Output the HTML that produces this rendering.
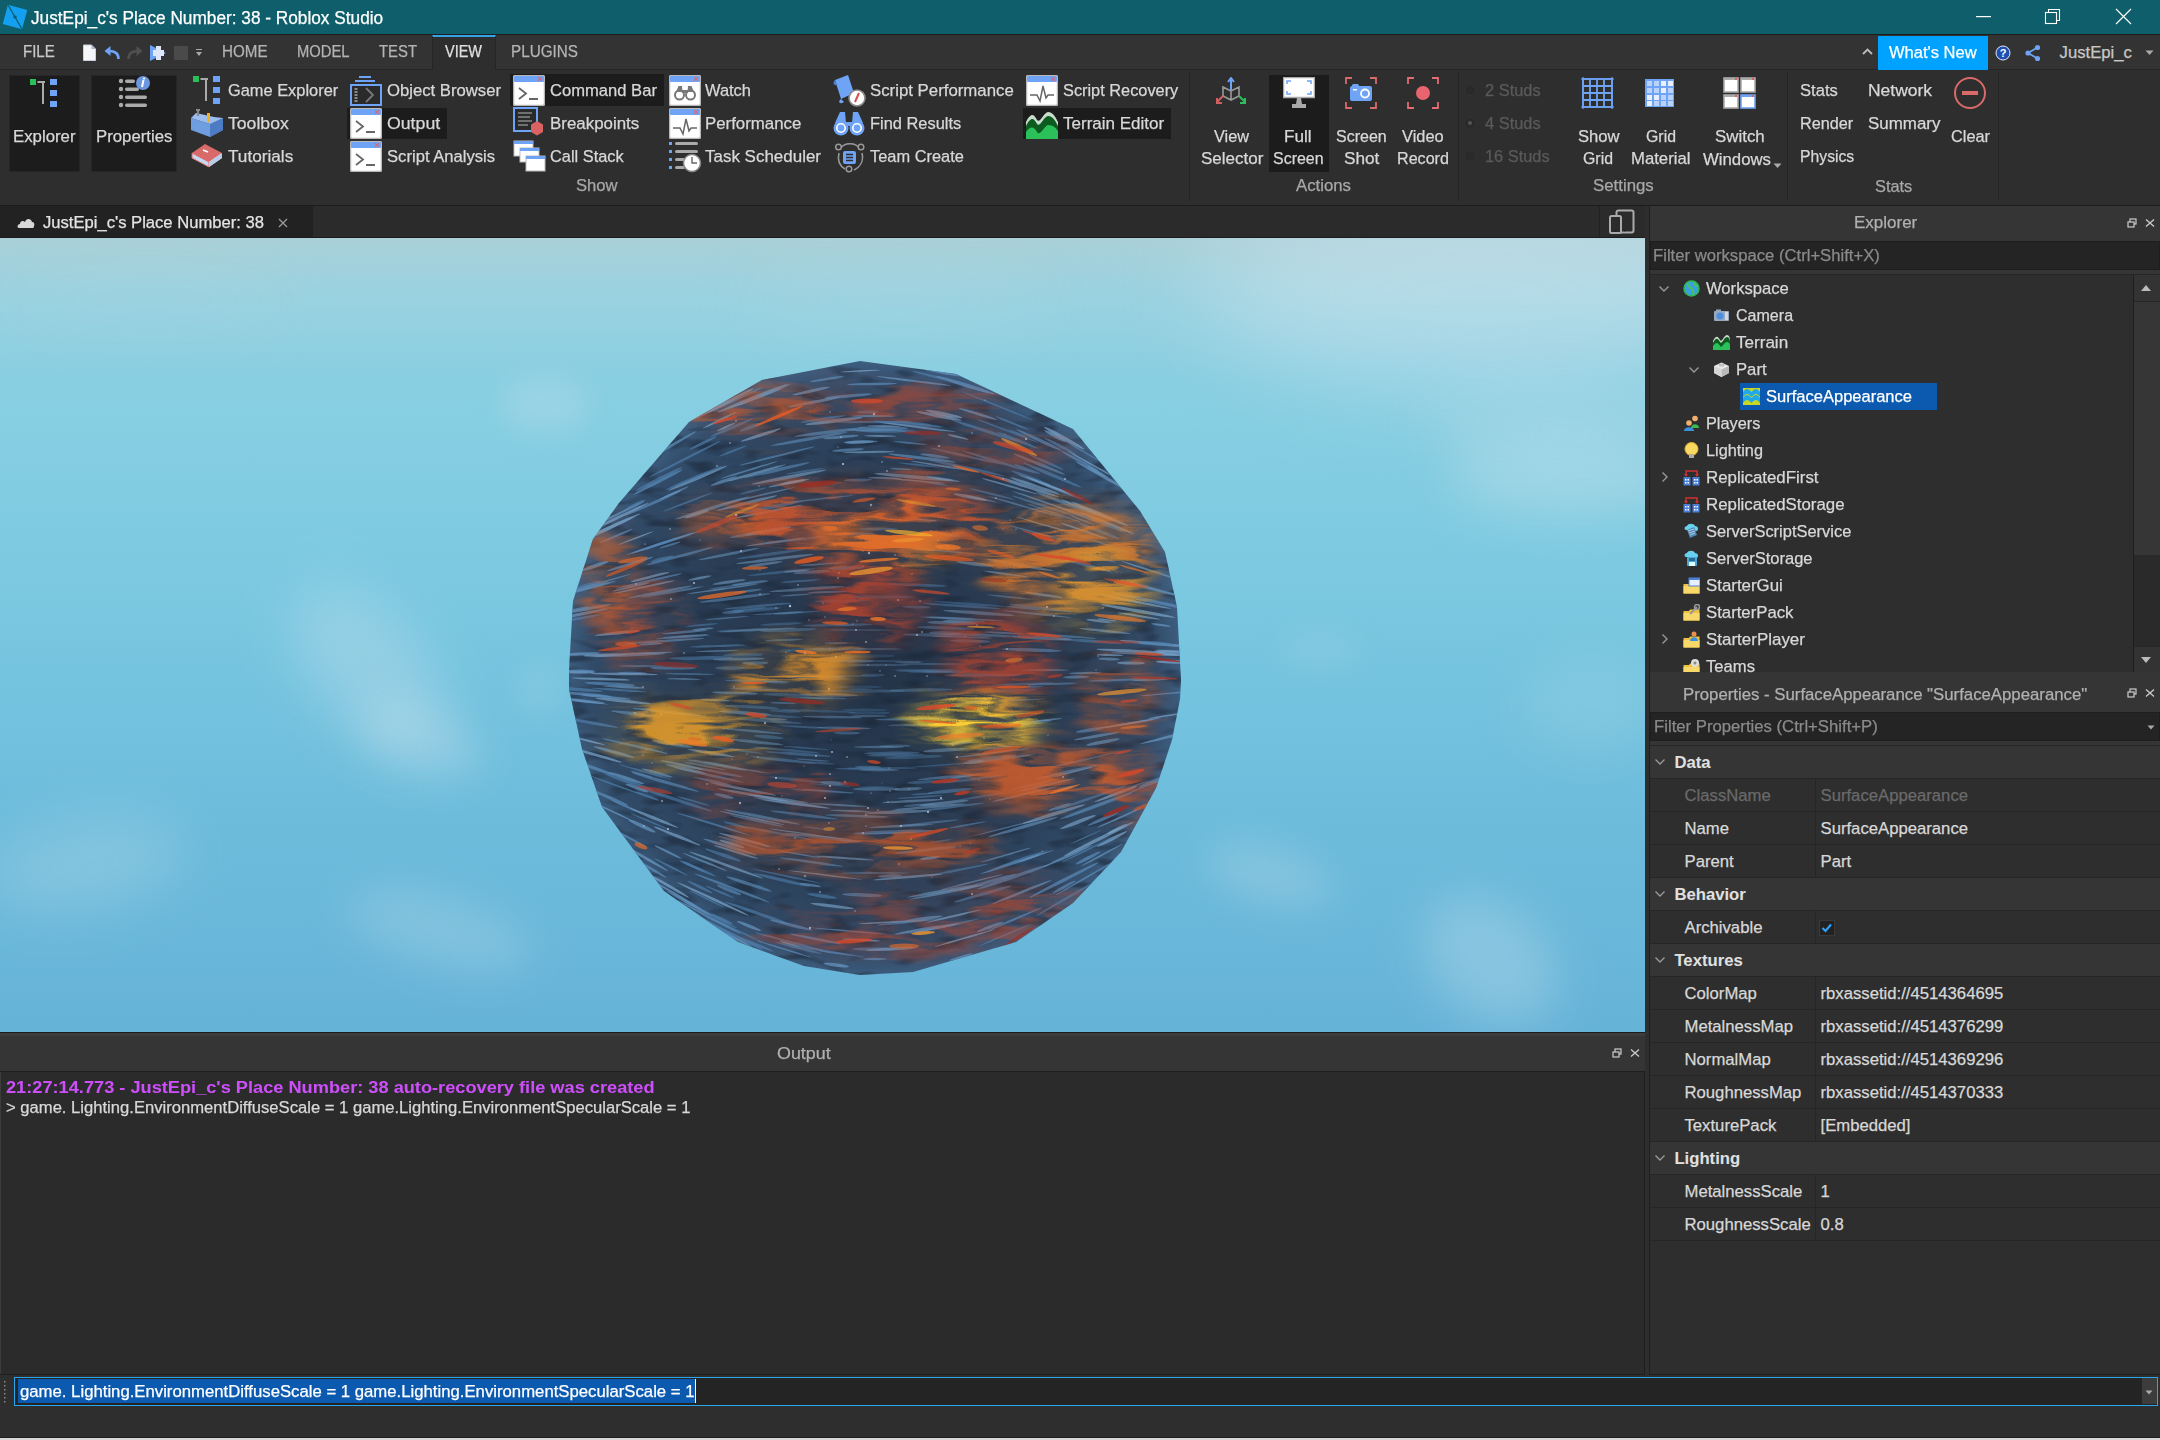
<!DOCTYPE html>
<html><head><meta charset="utf-8"><style>
html,body{margin:0;padding:0;width:2160px;height:1440px;overflow:hidden;background:#2e2e2e;}
.t{position:absolute;white-space:nowrap;font-family:"Liberation Sans",sans-serif;-webkit-text-stroke:0.25px currentColor;}
.r{position:absolute;}
</style></head><body>
<div class="r" style="left:0px;top:0px;width:2160px;height:34px;background:#0e5f6b;"></div><div class="r" style="left:0px;top:34px;width:2160px;height:1px;background:#1c1c1c;"></div><div class="r" style="left:0px;top:35px;width:2160px;height:34px;background:#333333;"></div><div class="r" style="left:0px;top:69px;width:2160px;height:1px;background:#262626;"></div><div class="r" style="left:432px;top:35px;width:64px;height:35px;background:#2e2e2e;border-top:2px solid #37a3e6;box-sizing:border-box;border-left:1px solid #262626;border-right:1px solid #262626;"></div><div class="r" style="left:0px;top:70px;width:2160px;height:135px;background:#2e2e2e;"></div><div class="r" style="left:0px;top:205px;width:2160px;height:1px;background:#1c1c1c;"></div><div class="r" style="left:0px;top:206px;width:1645px;height:32px;background:#2b2b2b;"></div><div class="r" style="left:0px;top:206px;width:313px;height:31px;background:#222222;"></div><div class="r" style="left:0px;top:237px;width:1645px;height:1px;background:#1c1c1c;"></div><div class="r" style="left:0px;top:238px;width:1645px;height:794px;background:linear-gradient(180deg, #aad0d8 0px, #9dd2df 45px, #89cfe2 140px, #7ecbe1 300px, #74c3df 450px, #6cbbdb 600px, #66b3d8 794px);"></div><div class="r" style="left:0;top:238px;width:1645px;height:794px;overflow:hidden"><div style="position:absolute;left:500.0px;top:137.0px;width:90px;height:60px;border-radius:50%;background:rgba(215,232,240,0.22);filter:blur(14px);transform:rotate(0deg)"></div><div style="position:absolute;left:270.0px;top:377.0px;width:200px;height:110px;border-radius:50%;background:rgba(215,232,240,0.3);filter:blur(26px);transform:rotate(50deg)"></div><div style="position:absolute;left:355.0px;top:467.0px;width:130px;height:70px;border-radius:50%;background:rgba(215,232,240,0.24);filter:blur(18px);transform:rotate(20deg)"></div><div style="position:absolute;left:-15.0px;top:582.0px;width:200px;height:90px;border-radius:50%;background:rgba(215,232,240,0.22);filter:blur(26px);transform:rotate(-10deg)"></div><div style="position:absolute;left:345.0px;top:657.0px;width:190px;height:70px;border-radius:50%;background:rgba(215,232,240,0.22);filter:blur(20px);transform:rotate(15deg)"></div><div style="position:absolute;left:515.0px;top:422.0px;width:50px;height:60px;border-radius:50%;background:rgba(215,232,240,0.12);filter:blur(14px);transform:rotate(0deg)"></div><div style="position:absolute;left:1200.0px;top:-43.0px;width:560px;height:190px;border-radius:50%;background:rgba(215,232,240,0.42);filter:blur(45px);transform:rotate(0deg)"></div><div style="position:absolute;left:1430.0px;top:147.0px;width:260px;height:90px;border-radius:50%;background:rgba(215,232,240,0.22);filter:blur(30px);transform:rotate(0deg)"></div><div style="position:absolute;left:1450.0px;top:202.0px;width:240px;height:80px;border-radius:50%;background:rgba(215,232,240,0.28);filter:blur(25px);transform:rotate(0deg)"></div><div style="position:absolute;left:1520.0px;top:417.0px;width:140px;height:100px;border-radius:50%;background:rgba(215,232,240,0.14);filter:blur(25px);transform:rotate(0deg)"></div><div style="position:absolute;left:1205.0px;top:609.5px;width:130px;height:55px;border-radius:50%;background:rgba(215,232,240,0.24);filter:blur(18px);transform:rotate(15deg)"></div><div style="position:absolute;left:1415.0px;top:667.0px;width:150px;height:110px;border-radius:50%;background:rgba(215,232,240,0.28);filter:blur(22px);transform:rotate(40deg)"></div><div style="position:absolute;left:1280.0px;top:392.0px;width:80px;height:40px;border-radius:50%;background:rgba(215,232,240,0.12);filter:blur(14px);transform:rotate(0deg)"></div><div style="position:absolute;left:740.0px;top:32.0px;width:320px;height:60px;border-radius:50%;background:rgba(215,232,240,0.1);filter:blur(30px);transform:rotate(0deg)"></div><div style="position:absolute;left:0.0px;top:32.0px;width:300px;height:60px;border-radius:50%;background:rgba(215,232,240,0.06);filter:blur(30px);transform:rotate(0deg)"></div></div><svg class="r" style="left:560px;top:350px;" width="640" height="640" viewBox="0 0 640 640"><defs>
<clipPath id="sc"><polygon points="300,11 396,24 513,79 580,161 605,202 617,257 621,330 620,349 612,390 596,438 561,502 513,553 456,592 353,622 300,625 244,616 178,592 104,541 42,457 22,399 9,339 9,320 13,251 33,189 59,153 129,72 202,30"/></clipPath>
<radialGradient id="sg" cx="0.49" cy="0.5" r="0.5">
<stop offset="0" stop-color="#243449"/><stop offset="0.6" stop-color="#2a3e56"/><stop offset="0.88" stop-color="#314b68"/><stop offset="1" stop-color="#43668a"/></radialGradient>
<filter color-interpolation-filters="sRGB" id="dark" x="0" y="0" width="100%" height="100%">
<feTurbulence type="fractalNoise" baseFrequency="0.03 0.09" numOctaves="2" seed="5"/>
<feColorMatrix type="matrix" values="0 0 0 0 0.10  0 0 0 0 0.14  0 0 0 0 0.2  4 0 0 0 -2.0"/>
</filter>
<filter color-interpolation-filters="sRGB" id="wtex" x="-20%" y="-20%" width="140%" height="140%">
<feGaussianBlur in="SourceGraphic" stdDeviation="10" result="b"/>
<feTurbulence type="fractalNoise" baseFrequency="0.012 0.07" numOctaves="3" seed="3" result="n"/>
<feColorMatrix in="n" type="matrix" values="0 0 0 0 0  0 0 0 0 0  0 0 0 0 0  4 0 0 0 -1.5" result="na"/>
<feComposite in="b" in2="na" operator="in" result="w"/>
<feDisplacementMap in="w" in2="n" scale="36" xChannelSelector="R" yChannelSelector="G"/>
</filter>
<filter color-interpolation-filters="sRGB" id="wblur" x="-30%" y="-30%" width="160%" height="160%"><feGaussianBlur stdDeviation="14"/></filter>
</defs>
<g clip-path="url(#sc)">
<rect x="0" y="0" width="640" height="640" fill="url(#sg)"/>
<rect x="0" y="0" width="640" height="640" filter="url(#dark)" opacity="0.5"/>
<ellipse cx="401" cy="26" rx="18" ry="0.9" fill="#5d8fbd" opacity="0.70" transform="rotate(17 401 26)"/><ellipse cx="267" cy="29" rx="17" ry="1.3" fill="#5d8fbd" opacity="0.68" transform="rotate(-9 267 29)"/><ellipse cx="353" cy="451" rx="31" ry="1.2" fill="#7eaad0" opacity="0.45" transform="rotate(-3 353 451)"/><ellipse cx="370" cy="508" rx="10" ry="1.6" fill="#7eaad0" opacity="0.54" transform="rotate(-7 370 508)"/><ellipse cx="217" cy="106" rx="39" ry="1.1" fill="#5d8fbd" opacity="0.59" transform="rotate(-14 217 106)"/><ellipse cx="241" cy="231" rx="20" ry="1.0" fill="#5d8fbd" opacity="0.42" transform="rotate(-4 241 231)"/><ellipse cx="456" cy="340" rx="21" ry="1.3" fill="#4f80ad" opacity="0.46" transform="rotate(-2 456 340)"/><ellipse cx="362" cy="444" rx="11" ry="1.0" fill="#4f80ad" opacity="0.45" transform="rotate(-4 362 444)"/><ellipse cx="520" cy="111" rx="21" ry="1.4" fill="#5d8fbd" opacity="0.68" transform="rotate(28 520 111)"/><ellipse cx="382" cy="116" rx="32" ry="0.9" fill="#7eaad0" opacity="0.56" transform="rotate(9 382 116)"/><ellipse cx="174" cy="579" rx="31" ry="0.9" fill="#4f80ad" opacity="0.69" transform="rotate(25 174 579)"/><ellipse cx="526" cy="487" rx="17" ry="0.7" fill="#4f80ad" opacity="0.65" transform="rotate(-24 526 487)"/><ellipse cx="254" cy="52" rx="27" ry="1.5" fill="#6a9bc6" opacity="0.65" transform="rotate(-11 254 52)"/><ellipse cx="410" cy="254" rx="37" ry="1.2" fill="#4f80ad" opacity="0.42" transform="rotate(4 410 254)"/><ellipse cx="94" cy="468" rx="26" ry="1.5" fill="#7eaad0" opacity="0.64" transform="rotate(22 94 468)"/><ellipse cx="75" cy="396" rx="34" ry="1.2" fill="#5d8fbd" opacity="0.62" transform="rotate(13 75 396)"/><ellipse cx="244" cy="377" rx="24" ry="1.0" fill="#5d8fbd" opacity="0.38" transform="rotate(3 244 377)"/><ellipse cx="426" cy="81" rx="37" ry="1.5" fill="#4f80ad" opacity="0.63" transform="rotate(18 426 81)"/><ellipse cx="170" cy="318" rx="15" ry="1.7" fill="#4f80ad" opacity="0.46" transform="rotate(0 170 318)"/><ellipse cx="525" cy="323" rx="16" ry="1.1" fill="#6a9bc6" opacity="0.56" transform="rotate(-1 525 323)"/><ellipse cx="197" cy="47" rx="36" ry="1.7" fill="#5d8fbd" opacity="0.68" transform="rotate(-21 197 47)"/><ellipse cx="457" cy="512" rx="39" ry="1.3" fill="#6a9bc6" opacity="0.60" transform="rotate(-18 457 512)"/><ellipse cx="87" cy="303" rx="26" ry="1.0" fill="#7eaad0" opacity="0.59" transform="rotate(-2 87 303)"/><ellipse cx="472" cy="435" rx="22" ry="1.4" fill="#4f80ad" opacity="0.54" transform="rotate(-12 472 435)"/><ellipse cx="277" cy="329" rx="14" ry="0.9" fill="#4f80ad" opacity="0.31" transform="rotate(0 277 329)"/><ellipse cx="21" cy="351" rx="28" ry="0.7" fill="#5d8fbd" opacity="0.68" transform="rotate(7 21 351)"/><ellipse cx="149" cy="567" rx="36" ry="0.8" fill="#6a9bc6" opacity="0.69" transform="rotate(28 149 567)"/><ellipse cx="179" cy="309" rx="26" ry="1.5" fill="#7eaad0" opacity="0.45" transform="rotate(-1 179 309)"/><ellipse cx="157" cy="301" rx="22" ry="0.8" fill="#7eaad0" opacity="0.48" transform="rotate(-2 157 301)"/><ellipse cx="226" cy="263" rx="36" ry="0.8" fill="#5d8fbd" opacity="0.40" transform="rotate(-3 226 263)"/><ellipse cx="45" cy="458" rx="34" ry="0.8" fill="#6a9bc6" opacity="0.70" transform="rotate(25 45 458)"/><ellipse cx="125" cy="286" rx="23" ry="1.0" fill="#6a9bc6" opacity="0.53" transform="rotate(-4 125 286)"/><ellipse cx="504" cy="537" rx="13" ry="1.4" fill="#5d8fbd" opacity="0.67" transform="rotate(-28 504 537)"/><ellipse cx="529" cy="113" rx="25" ry="0.9" fill="#7eaad0" opacity="0.68" transform="rotate(29 529 113)"/><ellipse cx="183" cy="439" rx="34" ry="1.4" fill="#7eaad0" opacity="0.51" transform="rotate(11 183 439)"/><ellipse cx="103" cy="193" rx="39" ry="1.3" fill="#5d8fbd" opacity="0.61" transform="rotate(-18 103 193)"/><ellipse cx="367" cy="320" rx="36" ry="0.9" fill="#5d8fbd" opacity="0.33" transform="rotate(-0 367 320)"/><ellipse cx="256" cy="589" rx="27" ry="1.3" fill="#5d8fbd" opacity="0.66" transform="rotate(11 256 589)"/><ellipse cx="388" cy="268" rx="28" ry="1.3" fill="#4f80ad" opacity="0.38" transform="rotate(2 388 268)"/><ellipse cx="133" cy="451" rx="17" ry="1.1" fill="#4f80ad" opacity="0.58" transform="rotate(16 133 451)"/><ellipse cx="289" cy="581" rx="38" ry="0.7" fill="#5d8fbd" opacity="0.64" transform="rotate(5 289 581)"/><ellipse cx="171" cy="584" rx="36" ry="1.7" fill="#4f80ad" opacity="0.69" transform="rotate(26 171 584)"/><ellipse cx="183" cy="280" rx="26" ry="1.0" fill="#5d8fbd" opacity="0.45" transform="rotate(-3 183 280)"/><ellipse cx="418" cy="352" rx="13" ry="1.7" fill="#4f80ad" opacity="0.41" transform="rotate(-2 418 352)"/><ellipse cx="449" cy="136" rx="29" ry="1.0" fill="#7eaad0" opacity="0.58" transform="rotate(16 449 136)"/><ellipse cx="162" cy="569" rx="12" ry="1.4" fill="#4f80ad" opacity="0.68" transform="rotate(26 162 569)"/><ellipse cx="35" cy="216" rx="14" ry="1.8" fill="#6a9bc6" opacity="0.69" transform="rotate(-19 35 216)"/><ellipse cx="463" cy="350" rx="23" ry="0.7" fill="#5d8fbd" opacity="0.47" transform="rotate(-3 463 350)"/><ellipse cx="30" cy="238" rx="27" ry="1.2" fill="#5d8fbd" opacity="0.68" transform="rotate(-15 30 238)"/><ellipse cx="197" cy="563" rx="34" ry="1.6" fill="#4f80ad" opacity="0.65" transform="rotate(19 197 563)"/><ellipse cx="137" cy="164" rx="13" ry="1.6" fill="#7eaad0" opacity="0.59" transform="rotate(-18 137 164)"/><ellipse cx="108" cy="502" rx="15" ry="1.2" fill="#6a9bc6" opacity="0.66" transform="rotate(26 108 502)"/><ellipse cx="460" cy="215" rx="34" ry="1.7" fill="#6a9bc6" opacity="0.51" transform="rotate(10 460 215)"/><ellipse cx="172" cy="494" rx="13" ry="1.7" fill="#7eaad0" opacity="0.58" transform="rotate(17 172 494)"/><ellipse cx="145" cy="512" rx="24" ry="1.0" fill="#6a9bc6" opacity="0.63" transform="rotate(22 145 512)"/><ellipse cx="145" cy="416" rx="22" ry="1.0" fill="#5d8fbd" opacity="0.54" transform="rotate(11 145 416)"/><ellipse cx="402" cy="256" rx="39" ry="1.3" fill="#5d8fbd" opacity="0.41" transform="rotate(4 402 256)"/><ellipse cx="171" cy="78" rx="23" ry="1.5" fill="#4f80ad" opacity="0.66" transform="rotate(-23 171 78)"/><ellipse cx="276" cy="615" rx="13" ry="1.7" fill="#6a9bc6" opacity="0.69" transform="rotate(8 276 615)"/><ellipse cx="164" cy="446" rx="10" ry="1.7" fill="#6a9bc6" opacity="0.54" transform="rotate(13 164 446)"/><ellipse cx="211" cy="204" rx="35" ry="1.5" fill="#4f80ad" opacity="0.48" transform="rotate(-8 211 204)"/><ellipse cx="319" cy="420" rx="20" ry="1.5" fill="#6a9bc6" opacity="0.40" transform="rotate(-0 319 420)"/><ellipse cx="126" cy="419" rx="21" ry="1.5" fill="#6a9bc6" opacity="0.56" transform="rotate(13 126 419)"/><ellipse cx="272" cy="367" rx="30" ry="1.2" fill="#7eaad0" opacity="0.35" transform="rotate(1 272 367)"/><ellipse cx="423" cy="325" rx="39" ry="1.5" fill="#5d8fbd" opacity="0.41" transform="rotate(-0 423 325)"/><ellipse cx="182" cy="419" rx="29" ry="0.8" fill="#6a9bc6" opacity="0.49" transform="rotate(9 182 419)"/><ellipse cx="421" cy="149" rx="16" ry="0.7" fill="#6a9bc6" opacity="0.54" transform="rotate(12 421 149)"/><ellipse cx="612" cy="386" rx="33" ry="1.2" fill="#6a9bc6" opacity="0.70" transform="rotate(-14 612 386)"/><ellipse cx="449" cy="247" rx="22" ry="0.9" fill="#5d8fbd" opacity="0.47" transform="rotate(6 449 247)"/><ellipse cx="552" cy="489" rx="17" ry="1.6" fill="#7eaad0" opacity="0.68" transform="rotate(-27 552 489)"/><ellipse cx="529" cy="291" rx="34" ry="1.4" fill="#4f80ad" opacity="0.57" transform="rotate(4 529 291)"/><ellipse cx="384" cy="453" rx="25" ry="1.6" fill="#7eaad0" opacity="0.47" transform="rotate(-6 384 453)"/><ellipse cx="559" cy="468" rx="24" ry="1.0" fill="#6a9bc6" opacity="0.67" transform="rotate(-24 559 468)"/><ellipse cx="524" cy="181" rx="25" ry="1.0" fill="#7eaad0" opacity="0.62" transform="rotate(19 524 181)"/><ellipse cx="56" cy="186" rx="18" ry="1.1" fill="#5d8fbd" opacity="0.68" transform="rotate(-23 56 186)"/><ellipse cx="93" cy="153" rx="31" ry="1.5" fill="#5d8fbd" opacity="0.66" transform="rotate(-24 93 153)"/><ellipse cx="263" cy="214" rx="24" ry="0.8" fill="#7eaad0" opacity="0.42" transform="rotate(-4 263 214)"/><ellipse cx="247" cy="484" rx="38" ry="0.7" fill="#7eaad0" opacity="0.51" transform="rotate(8 247 484)"/><ellipse cx="301" cy="590" rx="19" ry="1.1" fill="#7eaad0" opacity="0.65" transform="rotate(3 301 590)"/><ellipse cx="338" cy="462" rx="34" ry="1.7" fill="#7eaad0" opacity="0.46" transform="rotate(-2 338 462)"/><ellipse cx="143" cy="279" rx="11" ry="1.1" fill="#7eaad0" opacity="0.51" transform="rotate(-5 143 279)"/><ellipse cx="453" cy="527" rx="38" ry="1.8" fill="#5d8fbd" opacity="0.62" transform="rotate(-19 453 527)"/><ellipse cx="565" cy="374" rx="30" ry="0.8" fill="#7eaad0" opacity="0.63" transform="rotate(-9 565 374)"/><ellipse cx="91" cy="294" rx="12" ry="1.1" fill="#6a9bc6" opacity="0.58" transform="rotate(-4 91 294)"/><ellipse cx="287" cy="218" rx="18" ry="1.7" fill="#7eaad0" opacity="0.40" transform="rotate(-2 287 218)"/><ellipse cx="223" cy="410" rx="33" ry="1.4" fill="#5d8fbd" opacity="0.44" transform="rotate(6 223 410)"/><ellipse cx="85" cy="422" rx="27" ry="0.9" fill="#4f80ad" opacity="0.62" transform="rotate(16 85 422)"/><ellipse cx="479" cy="114" rx="28" ry="1.5" fill="#5d8fbd" opacity="0.63" transform="rotate(22 479 114)"/><ellipse cx="486" cy="112" rx="19" ry="1.3" fill="#4f80ad" opacity="0.64" transform="rotate(24 486 112)"/><ellipse cx="362" cy="569" rx="21" ry="1.7" fill="#6a9bc6" opacity="0.62" transform="rotate(-8 362 569)"/><ellipse cx="55" cy="435" rx="29" ry="0.8" fill="#4f80ad" opacity="0.67" transform="rotate(20 55 435)"/><ellipse cx="530" cy="380" rx="14" ry="1.8" fill="#5d8fbd" opacity="0.58" transform="rotate(-9 530 380)"/><ellipse cx="221" cy="274" rx="21" ry="1.3" fill="#4f80ad" opacity="0.40" transform="rotate(-3 221 274)"/><ellipse cx="16" cy="269" rx="25" ry="1.2" fill="#4f80ad" opacity="0.69" transform="rotate(-10 16 269)"/><ellipse cx="398" cy="520" rx="31" ry="1.2" fill="#4f80ad" opacity="0.57" transform="rotate(-11 398 520)"/><ellipse cx="386" cy="576" rx="33" ry="1.2" fill="#4f80ad" opacity="0.64" transform="rotate(-12 386 576)"/><ellipse cx="206" cy="162" rx="38" ry="1.0" fill="#7eaad0" opacity="0.53" transform="rotate(-11 206 162)"/><ellipse cx="158" cy="296" rx="28" ry="1.1" fill="#5d8fbd" opacity="0.48" transform="rotate(-2 158 296)"/><ellipse cx="325" cy="128" rx="17" ry="1.1" fill="#6a9bc6" opacity="0.53" transform="rotate(1 325 128)"/><ellipse cx="432" cy="408" rx="25" ry="1.6" fill="#5d8fbd" opacity="0.47" transform="rotate(-7 432 408)"/><ellipse cx="189" cy="259" rx="17" ry="1.4" fill="#4f80ad" opacity="0.45" transform="rotate(-5 189 259)"/><ellipse cx="299" cy="337" rx="23" ry="1.5" fill="#4f80ad" opacity="0.29" transform="rotate(0 299 337)"/><ellipse cx="224" cy="290" rx="19" ry="1.0" fill="#6a9bc6" opacity="0.39" transform="rotate(-2 224 290)"/><ellipse cx="202" cy="467" rx="39" ry="1.5" fill="#6a9bc6" opacity="0.52" transform="rotate(11 202 467)"/><ellipse cx="141" cy="308" rx="32" ry="1.8" fill="#4f80ad" opacity="0.51" transform="rotate(-1 141 308)"/><ellipse cx="190" cy="233" rx="19" ry="1.5" fill="#6a9bc6" opacity="0.47" transform="rotate(-7 190 233)"/><ellipse cx="348" cy="439" rx="14" ry="1.7" fill="#7eaad0" opacity="0.43" transform="rotate(-3 348 439)"/><ellipse cx="183" cy="305" rx="20" ry="1.8" fill="#4f80ad" opacity="0.45" transform="rotate(-1 183 305)"/><ellipse cx="586" cy="304" rx="35" ry="1.1" fill="#5d8fbd" opacity="0.65" transform="rotate(2 586 304)"/><ellipse cx="362" cy="432" rx="15" ry="1.6" fill="#4f80ad" opacity="0.43" transform="rotate(-4 362 432)"/><ellipse cx="60" cy="163" rx="27" ry="1.2" fill="#6a9bc6" opacity="0.69" transform="rotate(-26 60 163)"/><ellipse cx="484" cy="245" rx="19" ry="1.3" fill="#7eaad0" opacity="0.52" transform="rotate(8 484 245)"/><ellipse cx="196" cy="392" rx="28" ry="1.5" fill="#6a9bc6" opacity="0.46" transform="rotate(6 196 392)"/><ellipse cx="155" cy="350" rx="15" ry="1.1" fill="#7eaad0" opacity="0.49" transform="rotate(3 155 350)"/><ellipse cx="187" cy="153" rx="31" ry="1.5" fill="#7eaad0" opacity="0.56" transform="rotate(-14 187 153)"/><ellipse cx="170" cy="497" rx="28" ry="1.6" fill="#6a9bc6" opacity="0.59" transform="rotate(17 170 497)"/><ellipse cx="269" cy="345" rx="29" ry="1.7" fill="#6a9bc6" opacity="0.33" transform="rotate(1 269 345)"/><ellipse cx="197" cy="471" rx="27" ry="1.0" fill="#5d8fbd" opacity="0.53" transform="rotate(12 197 471)"/><ellipse cx="175" cy="343" rx="23" ry="1.4" fill="#7eaad0" opacity="0.46" transform="rotate(2 175 343)"/><ellipse cx="149" cy="425" rx="36" ry="1.3" fill="#5d8fbd" opacity="0.54" transform="rotate(12 149 425)"/><ellipse cx="472" cy="300" rx="30" ry="1.7" fill="#6a9bc6" opacity="0.48" transform="rotate(2 472 300)"/><ellipse cx="254" cy="478" rx="11" ry="0.8" fill="#4f80ad" opacity="0.50" transform="rotate(7 254 478)"/><ellipse cx="256" cy="327" rx="30" ry="1.3" fill="#7eaad0" opacity="0.34" transform="rotate(0 256 327)"/><ellipse cx="41" cy="329" rx="29" ry="1.2" fill="#7eaad0" opacity="0.65" transform="rotate(2 41 329)"/><ellipse cx="475" cy="136" rx="26" ry="1.7" fill="#7eaad0" opacity="0.60" transform="rotate(19 475 136)"/><ellipse cx="549" cy="309" rx="11" ry="1.4" fill="#6a9bc6" opacity="0.59" transform="rotate(1 549 309)"/><ellipse cx="259" cy="149" rx="35" ry="0.8" fill="#5d8fbd" opacity="0.51" transform="rotate(-6 259 149)"/><ellipse cx="406" cy="106" rx="38" ry="1.0" fill="#4f80ad" opacity="0.59" transform="rotate(13 406 106)"/><ellipse cx="288" cy="100" rx="16" ry="1.4" fill="#6a9bc6" opacity="0.57" transform="rotate(-4 288 100)"/><ellipse cx="539" cy="181" rx="22" ry="1.7" fill="#4f80ad" opacity="0.63" transform="rotate(21 539 181)"/><ellipse cx="309" cy="102" rx="26" ry="1.1" fill="#7eaad0" opacity="0.57" transform="rotate(-1 309 102)"/><ellipse cx="465" cy="444" rx="34" ry="1.1" fill="#6a9bc6" opacity="0.54" transform="rotate(-13 465 444)"/><ellipse cx="312" cy="34" rx="25" ry="1.3" fill="#5d8fbd" opacity="0.67" transform="rotate(-1 312 34)"/><ellipse cx="545" cy="281" rx="26" ry="1.2" fill="#6a9bc6" opacity="0.59" transform="rotate(6 545 281)"/><ellipse cx="260" cy="413" rx="15" ry="1.2" fill="#4f80ad" opacity="0.41" transform="rotate(4 260 413)"/><ellipse cx="449" cy="477" rx="36" ry="0.7" fill="#5d8fbd" opacity="0.56" transform="rotate(-14 449 477)"/><ellipse cx="152" cy="431" rx="19" ry="1.0" fill="#5d8fbd" opacity="0.54" transform="rotate(12 152 431)"/><ellipse cx="274" cy="71" rx="29" ry="1.7" fill="#7eaad0" opacity="0.62" transform="rotate(-7 274 71)"/><ellipse cx="110" cy="195" rx="11" ry="1.1" fill="#5d8fbd" opacity="0.60" transform="rotate(-17 110 195)"/><ellipse cx="188" cy="241" rx="14" ry="1.3" fill="#6a9bc6" opacity="0.47" transform="rotate(-7 188 241)"/><ellipse cx="543" cy="392" rx="17" ry="1.7" fill="#6a9bc6" opacity="0.60" transform="rotate(-11 543 392)"/><ellipse cx="151" cy="403" rx="24" ry="1.4" fill="#7eaad0" opacity="0.52" transform="rotate(9 151 403)"/><ellipse cx="400" cy="272" rx="18" ry="1.6" fill="#6a9bc6" opacity="0.39" transform="rotate(3 400 272)"/><ellipse cx="539" cy="489" rx="39" ry="1.7" fill="#7eaad0" opacity="0.66" transform="rotate(-26 539 489)"/><ellipse cx="484" cy="152" rx="34" ry="0.9" fill="#6a9bc6" opacity="0.60" transform="rotate(19 484 152)"/><ellipse cx="389" cy="427" rx="32" ry="1.4" fill="#6a9bc6" opacity="0.44" transform="rotate(-5 389 427)"/><ellipse cx="394" cy="566" rx="29" ry="1.0" fill="#7eaad0" opacity="0.63" transform="rotate(-13 394 566)"/><ellipse cx="28" cy="235" rx="14" ry="1.7" fill="#4f80ad" opacity="0.69" transform="rotate(-16 28 235)"/><ellipse cx="467" cy="119" rx="14" ry="1.3" fill="#4f80ad" opacity="0.62" transform="rotate(20 467 119)"/><ellipse cx="334" cy="572" rx="35" ry="1.0" fill="#7eaad0" opacity="0.62" transform="rotate(-3 334 572)"/><ellipse cx="542" cy="505" rx="24" ry="0.8" fill="#6a9bc6" opacity="0.68" transform="rotate(-28 542 505)"/><ellipse cx="536" cy="456" rx="39" ry="1.8" fill="#4f80ad" opacity="0.63" transform="rotate(-20 536 456)"/><ellipse cx="84" cy="237" rx="32" ry="1.0" fill="#7eaad0" opacity="0.61" transform="rotate(-12 84 237)"/><ellipse cx="75" cy="155" rx="11" ry="1.7" fill="#4f80ad" opacity="0.68" transform="rotate(-26 75 155)"/><ellipse cx="195" cy="313" rx="13" ry="1.7" fill="#6a9bc6" opacity="0.43" transform="rotate(-0 195 313)"/><ellipse cx="247" cy="239" rx="38" ry="1.5" fill="#7eaad0" opacity="0.40" transform="rotate(-4 247 239)"/><ellipse cx="369" cy="457" rx="37" ry="1.4" fill="#7eaad0" opacity="0.47" transform="rotate(-5 369 457)"/><ellipse cx="432" cy="144" rx="23" ry="1.0" fill="#4f80ad" opacity="0.56" transform="rotate(14 432 144)"/><ellipse cx="69" cy="432" rx="26" ry="1.8" fill="#4f80ad" opacity="0.65" transform="rotate(19 69 432)"/><ellipse cx="45" cy="180" rx="39" ry="1.7" fill="#7eaad0" opacity="0.69" transform="rotate(-25 45 180)"/><ellipse cx="401" cy="607" rx="12" ry="1.1" fill="#6a9bc6" opacity="0.69" transform="rotate(-17 401 607)"/><ellipse cx="491" cy="137" rx="35" ry="1.3" fill="#6a9bc6" opacity="0.62" transform="rotate(21 491 137)"/><ellipse cx="507" cy="154" rx="33" ry="1.6" fill="#5d8fbd" opacity="0.62" transform="rotate(21 507 154)"/><ellipse cx="614" cy="343" rx="34" ry="0.8" fill="#5d8fbd" opacity="0.69" transform="rotate(-5 614 343)"/><ellipse cx="89" cy="231" rx="34" ry="1.3" fill="#5d8fbd" opacity="0.61" transform="rotate(-13 89 231)"/><ellipse cx="463" cy="334" rx="32" ry="1.2" fill="#4f80ad" opacity="0.47" transform="rotate(-2 463 334)"/><ellipse cx="323" cy="78" rx="25" ry="1.7" fill="#5d8fbd" opacity="0.60" transform="rotate(1 323 78)"/><ellipse cx="455" cy="569" rx="30" ry="1.0" fill="#5d8fbd" opacity="0.67" transform="rotate(-23 455 569)"/><ellipse cx="45" cy="305" rx="22" ry="1.5" fill="#7eaad0" opacity="0.65" transform="rotate(-2 45 305)"/><ellipse cx="445" cy="283" rx="20" ry="0.9" fill="#6a9bc6" opacity="0.45" transform="rotate(3 445 283)"/><ellipse cx="177" cy="400" rx="26" ry="1.1" fill="#4f80ad" opacity="0.49" transform="rotate(8 177 400)"/><ellipse cx="287" cy="383" rx="13" ry="1.5" fill="#6a9bc6" opacity="0.35" transform="rotate(1 287 383)"/><ellipse cx="272" cy="556" rx="22" ry="1.6" fill="#7eaad0" opacity="0.60" transform="rotate(7 272 556)"/><ellipse cx="263" cy="69" rx="23" ry="1.4" fill="#4f80ad" opacity="0.62" transform="rotate(-9 263 69)"/><ellipse cx="594" cy="433" rx="24" ry="0.8" fill="#5d8fbd" opacity="0.69" transform="rotate(-21 594 433)"/><ellipse cx="462" cy="509" rx="27" ry="1.3" fill="#4f80ad" opacity="0.60" transform="rotate(-19 462 509)"/><ellipse cx="419" cy="263" rx="36" ry="1.7" fill="#7eaad0" opacity="0.42" transform="rotate(4 419 263)"/><ellipse cx="541" cy="454" rx="39" ry="1.4" fill="#4f80ad" opacity="0.64" transform="rotate(-21 541 454)"/><ellipse cx="72" cy="323" rx="15" ry="1.2" fill="#5d8fbd" opacity="0.61" transform="rotate(1 72 323)"/><ellipse cx="223" cy="353" rx="13" ry="1.0" fill="#6a9bc6" opacity="0.39" transform="rotate(2 223 353)"/><ellipse cx="504" cy="530" rx="39" ry="1.6" fill="#5d8fbd" opacity="0.67" transform="rotate(-27 504 530)"/><ellipse cx="382" cy="415" rx="31" ry="0.7" fill="#4f80ad" opacity="0.42" transform="rotate(-4 382 415)"/><ellipse cx="356" cy="257" rx="14" ry="1.4" fill="#5d8fbd" opacity="0.36" transform="rotate(2 356 257)"/><ellipse cx="64" cy="337" rx="21" ry="1.2" fill="#6a9bc6" opacity="0.62" transform="rotate(3 64 337)"/><ellipse cx="235" cy="454" rx="33" ry="1.3" fill="#5d8fbd" opacity="0.48" transform="rotate(7 235 454)"/><ellipse cx="58" cy="283" rx="23" ry="1.4" fill="#7eaad0" opacity="0.63" transform="rotate(-6 58 283)"/><ellipse cx="176" cy="475" rx="13" ry="1.2" fill="#4f80ad" opacity="0.56" transform="rotate(15 176 475)"/><ellipse cx="197" cy="146" rx="40" ry="0.8" fill="#6a9bc6" opacity="0.55" transform="rotate(-13 197 146)"/><ellipse cx="193" cy="141" rx="14" ry="1.0" fill="#4f80ad" opacity="0.57" transform="rotate(-14 193 141)"/><ellipse cx="82" cy="316" rx="23" ry="0.8" fill="#6a9bc6" opacity="0.59" transform="rotate(-0 82 316)"/><ellipse cx="315" cy="523" rx="34" ry="0.8" fill="#5d8fbd" opacity="0.55" transform="rotate(-0 315 523)"/><ellipse cx="276" cy="293" rx="12" ry="1.0" fill="#7eaad0" opacity="0.32" transform="rotate(-1 276 293)"/><ellipse cx="360" cy="447" rx="23" ry="0.8" fill="#5d8fbd" opacity="0.45" transform="rotate(-4 360 447)"/><ellipse cx="590" cy="293" rx="31" ry="1.1" fill="#7eaad0" opacity="0.65" transform="rotate(5 590 293)"/><ellipse cx="527" cy="160" rx="28" ry="1.3" fill="#7eaad0" opacity="0.64" transform="rotate(22 527 160)"/><ellipse cx="543" cy="469" rx="17" ry="1.6" fill="#5d8fbd" opacity="0.65" transform="rotate(-23 543 469)"/><ellipse cx="321" cy="81" rx="25" ry="1.7" fill="#4f80ad" opacity="0.60" transform="rotate(1 321 81)"/><ellipse cx="224" cy="599" rx="29" ry="0.9" fill="#5d8fbd" opacity="0.68" transform="rotate(17 224 599)"/><ellipse cx="98" cy="132" rx="28" ry="1.5" fill="#5d8fbd" opacity="0.67" transform="rotate(-27 98 132)"/><ellipse cx="117" cy="486" rx="25" ry="1.5" fill="#7eaad0" opacity="0.63" transform="rotate(22 117 486)"/><ellipse cx="278" cy="299" rx="29" ry="1.6" fill="#5d8fbd" opacity="0.31" transform="rotate(-0 278 299)"/><ellipse cx="31" cy="237" rx="19" ry="1.4" fill="#5d8fbd" opacity="0.68" transform="rotate(-15 31 237)"/><ellipse cx="386" cy="322" rx="24" ry="1.3" fill="#5d8fbd" opacity="0.35" transform="rotate(-0 386 322)"/><ellipse cx="284" cy="508" rx="30" ry="1.1" fill="#7eaad0" opacity="0.53" transform="rotate(4 284 508)"/><ellipse cx="316" cy="599" rx="24" ry="1.6" fill="#4f80ad" opacity="0.66" transform="rotate(-0 316 599)"/><ellipse cx="405" cy="35" rx="31" ry="1.8" fill="#6a9bc6" opacity="0.69" transform="rotate(17 405 35)"/><ellipse cx="231" cy="575" rx="22" ry="1.6" fill="#5d8fbd" opacity="0.65" transform="rotate(14 231 575)"/><ellipse cx="66" cy="428" rx="19" ry="1.5" fill="#6a9bc6" opacity="0.65" transform="rotate(18 66 428)"/><ellipse cx="213" cy="369" rx="14" ry="1.1" fill="#7eaad0" opacity="0.42" transform="rotate(3 213 369)"/><ellipse cx="87" cy="446" rx="13" ry="1.3" fill="#4f80ad" opacity="0.63" transform="rotate(20 87 446)"/><ellipse cx="507" cy="422" rx="32" ry="1.5" fill="#5d8fbd" opacity="0.57" transform="rotate(-13 507 422)"/><ellipse cx="405" cy="271" rx="21" ry="1.1" fill="#6a9bc6" opacity="0.40" transform="rotate(3 405 271)"/><ellipse cx="592" cy="221" rx="33" ry="0.9" fill="#6a9bc6" opacity="0.68" transform="rotate(18 592 221)"/><ellipse cx="103" cy="193" rx="34" ry="1.3" fill="#5d8fbd" opacity="0.61" transform="rotate(-18 103 193)"/><ellipse cx="375" cy="106" rx="15" ry="1.5" fill="#6a9bc6" opacity="0.57" transform="rotate(8 375 106)"/><ellipse cx="232" cy="453" rx="39" ry="1.4" fill="#7eaad0" opacity="0.48" transform="rotate(8 232 453)"/><ellipse cx="152" cy="158" rx="39" ry="1.6" fill="#6a9bc6" opacity="0.59" transform="rotate(-17 152 158)"/><ellipse cx="234" cy="593" rx="40" ry="1.2" fill="#4f80ad" opacity="0.67" transform="rotate(15 234 593)"/><ellipse cx="486" cy="320" rx="23" ry="0.9" fill="#6a9bc6" opacity="0.50" transform="rotate(-0 486 320)"/><ellipse cx="500" cy="96" rx="18" ry="1.4" fill="#4f80ad" opacity="0.67" transform="rotate(27 500 96)"/><ellipse cx="348" cy="74" rx="35" ry="1.6" fill="#4f80ad" opacity="0.61" transform="rotate(5 348 74)"/><ellipse cx="284" cy="326" rx="35" ry="0.8" fill="#6a9bc6" opacity="0.30" transform="rotate(0 284 326)"/><ellipse cx="579" cy="266" rx="22" ry="1.1" fill="#7eaad0" opacity="0.64" transform="rotate(9 579 266)"/><ellipse cx="523" cy="410" rx="34" ry="0.9" fill="#4f80ad" opacity="0.58" transform="rotate(-13 523 410)"/><ellipse cx="571" cy="301" rx="35" ry="1.5" fill="#7eaad0" opacity="0.63" transform="rotate(3 571 301)"/><ellipse cx="57" cy="168" rx="35" ry="1.3" fill="#7eaad0" opacity="0.69" transform="rotate(-26 57 168)"/><ellipse cx="76" cy="188" rx="19" ry="0.8" fill="#7eaad0" opacity="0.65" transform="rotate(-21 76 188)"/><ellipse cx="400" cy="393" rx="12" ry="1.6" fill="#7eaad0" opacity="0.42" transform="rotate(-4 400 393)"/><ellipse cx="374" cy="21" rx="25" ry="1.0" fill="#6a9bc6" opacity="0.69" transform="rotate(12 374 21)"/><ellipse cx="225" cy="361" rx="16" ry="1.4" fill="#4f80ad" opacity="0.40" transform="rotate(3 225 361)"/><ellipse cx="50" cy="334" rx="25" ry="1.8" fill="#5d8fbd" opacity="0.64" transform="rotate(3 50 334)"/><ellipse cx="248" cy="300" rx="29" ry="1.8" fill="#4f80ad" opacity="0.35" transform="rotate(-1 248 300)"/><ellipse cx="156" cy="414" rx="13" ry="1.3" fill="#4f80ad" opacity="0.52" transform="rotate(10 156 414)"/><ellipse cx="90" cy="227" rx="20" ry="1.4" fill="#7eaad0" opacity="0.61" transform="rotate(-14 90 227)"/><ellipse cx="610" cy="305" rx="15" ry="0.8" fill="#7eaad0" opacity="0.68" transform="rotate(3 610 305)"/><ellipse cx="198" cy="256" rx="34" ry="1.2" fill="#5d8fbd" opacity="0.44" transform="rotate(-5 198 256)"/><ellipse cx="471" cy="128" rx="21" ry="1.6" fill="#4f80ad" opacity="0.61" transform="rotate(20 471 128)"/><ellipse cx="176" cy="502" rx="23" ry="1.1" fill="#7eaad0" opacity="0.59" transform="rotate(17 176 502)"/><ellipse cx="557" cy="248" rx="25" ry="1.2" fill="#4f80ad" opacity="0.62" transform="rotate(11 557 248)"/><ellipse cx="500" cy="457" rx="12" ry="1.4" fill="#6a9bc6" opacity="0.59" transform="rotate(-17 500 457)"/><ellipse cx="270" cy="435" rx="21" ry="0.7" fill="#4f80ad" opacity="0.43" transform="rotate(4 270 435)"/><ellipse cx="386" cy="278" rx="29" ry="1.6" fill="#5d8fbd" opacity="0.37" transform="rotate(2 386 278)"/><ellipse cx="54" cy="402" rx="21" ry="1.6" fill="#6a9bc6" opacity="0.65" transform="rotate(15 54 402)"/><ellipse cx="381" cy="491" rx="11" ry="0.8" fill="#4f80ad" opacity="0.52" transform="rotate(-8 381 491)"/><ellipse cx="230" cy="594" rx="11" ry="0.9" fill="#7eaad0" opacity="0.67" transform="rotate(16 230 594)"/><ellipse cx="591" cy="239" rx="33" ry="1.3" fill="#4f80ad" opacity="0.67" transform="rotate(14 591 239)"/><ellipse cx="252" cy="410" rx="17" ry="0.8" fill="#6a9bc6" opacity="0.41" transform="rotate(4 252 410)"/><ellipse cx="571" cy="313" rx="14" ry="1.6" fill="#7eaad0" opacity="0.62" transform="rotate(1 571 313)"/><ellipse cx="114" cy="449" rx="40" ry="1.6" fill="#4f80ad" opacity="0.60" transform="rotate(18 114 449)"/><ellipse cx="418" cy="447" rx="26" ry="1.0" fill="#4f80ad" opacity="0.49" transform="rotate(-9 418 447)"/><ellipse cx="531" cy="448" rx="38" ry="1.4" fill="#4f80ad" opacity="0.62" transform="rotate(-19 531 448)"/><ellipse cx="320" cy="86" rx="16" ry="0.9" fill="#7eaad0" opacity="0.59" transform="rotate(1 320 86)"/><ellipse cx="24" cy="351" rx="21" ry="1.6" fill="#6a9bc6" opacity="0.68" transform="rotate(6 24 351)"/><ellipse cx="384" cy="64" rx="19" ry="1.8" fill="#7eaad0" opacity="0.64" transform="rotate(12 384 64)"/><ellipse cx="331" cy="483" rx="35" ry="0.8" fill="#4f80ad" opacity="0.49" transform="rotate(-2 331 483)"/><ellipse cx="402" cy="287" rx="30" ry="1.1" fill="#6a9bc6" opacity="0.39" transform="rotate(2 402 287)"/><ellipse cx="479" cy="90" rx="25" ry="1.7" fill="#5d8fbd" opacity="0.66" transform="rotate(25 479 90)"/><ellipse cx="590" cy="330" rx="19" ry="0.8" fill="#6a9bc6" opacity="0.65" transform="rotate(-2 590 330)"/><ellipse cx="194" cy="339" rx="25" ry="0.9" fill="#6a9bc6" opacity="0.43" transform="rotate(2 194 339)"/><ellipse cx="113" cy="394" rx="20" ry="1.7" fill="#5d8fbd" opacity="0.57" transform="rotate(10 113 394)"/><ellipse cx="36" cy="405" rx="27" ry="1.4" fill="#7eaad0" opacity="0.68" transform="rotate(16 36 405)"/><ellipse cx="388" cy="30" rx="37" ry="1.3" fill="#4f80ad" opacity="0.69" transform="rotate(14 388 30)"/><ellipse cx="278" cy="308" rx="16" ry="1.4" fill="#4f80ad" opacity="0.31" transform="rotate(-0 278 308)"/><ellipse cx="537" cy="207" rx="20" ry="1.1" fill="#4f80ad" opacity="0.61" transform="rotate(16 537 207)"/><ellipse cx="324" cy="76" rx="17" ry="0.8" fill="#7eaad0" opacity="0.60" transform="rotate(1 324 76)"/><ellipse cx="160" cy="70" rx="19" ry="1.1" fill="#7eaad0" opacity="0.68" transform="rotate(-26 160 70)"/><ellipse cx="160" cy="542" rx="15" ry="1.1" fill="#4f80ad" opacity="0.65" transform="rotate(23 160 542)"/><ellipse cx="125" cy="109" rx="40" ry="1.2" fill="#4f80ad" opacity="0.66" transform="rotate(-27 125 109)"/><ellipse cx="313" cy="66" rx="22" ry="1.2" fill="#6a9bc6" opacity="0.62" transform="rotate(-0 313 66)"/><ellipse cx="140" cy="228" rx="12" ry="1.2" fill="#7eaad0" opacity="0.54" transform="rotate(-11 140 228)"/><ellipse cx="170" cy="236" rx="22" ry="0.7" fill="#5d8fbd" opacity="0.49" transform="rotate(-8 170 236)"/><ellipse cx="358" cy="131" rx="27" ry="0.8" fill="#7eaad0" opacity="0.53" transform="rotate(5 358 131)"/><ellipse cx="477" cy="183" rx="30" ry="0.8" fill="#5d8fbd" opacity="0.56" transform="rotate(15 477 183)"/><ellipse cx="130" cy="324" rx="25" ry="0.7" fill="#6a9bc6" opacity="0.52" transform="rotate(1 130 324)"/><ellipse cx="446" cy="505" rx="26" ry="0.9" fill="#6a9bc6" opacity="0.58" transform="rotate(-16 446 505)"/><ellipse cx="209" cy="387" rx="15" ry="1.8" fill="#4f80ad" opacity="0.44" transform="rotate(5 209 387)"/><ellipse cx="373" cy="322" rx="25" ry="1.2" fill="#4f80ad" opacity="0.33" transform="rotate(-0 373 322)"/><ellipse cx="300" cy="21" rx="20" ry="0.8" fill="#7eaad0" opacity="0.69" transform="rotate(-3 300 21)"/><ellipse cx="366" cy="500" rx="32" ry="1.5" fill="#5d8fbd" opacity="0.53" transform="rotate(-6 366 500)"/><ellipse cx="605" cy="366" rx="17" ry="0.8" fill="#7eaad0" opacity="0.68" transform="rotate(-9 605 366)"/><ellipse cx="524" cy="102" rx="30" ry="0.7" fill="#5d8fbd" opacity="0.69" transform="rotate(30 524 102)"/><ellipse cx="125" cy="282" rx="23" ry="1.2" fill="#6a9bc6" opacity="0.53" transform="rotate(-5 125 282)"/><ellipse cx="260" cy="487" rx="36" ry="1.5" fill="#5d8fbd" opacity="0.51" transform="rotate(6 260 487)"/><ellipse cx="239" cy="598" rx="24" ry="1.3" fill="#4f80ad" opacity="0.68" transform="rotate(14 239 598)"/><ellipse cx="423" cy="544" rx="30" ry="1.6" fill="#4f80ad" opacity="0.62" transform="rotate(-16 423 544)"/><ellipse cx="383" cy="129" rx="17" ry="1.3" fill="#6a9bc6" opacity="0.54" transform="rotate(9 383 129)"/><ellipse cx="308" cy="306" rx="27" ry="1.7" fill="#4f80ad" opacity="0.27" transform="rotate(-0 308 306)"/><ellipse cx="185" cy="363" rx="26" ry="1.7" fill="#7eaad0" opacity="0.45" transform="rotate(4 185 363)"/><ellipse cx="446" cy="224" rx="23" ry="1.0" fill="#7eaad0" opacity="0.49" transform="rotate(8 446 224)"/><ellipse cx="139" cy="519" rx="18" ry="1.3" fill="#4f80ad" opacity="0.64" transform="rotate(24 139 519)"/><ellipse cx="157" cy="422" rx="26" ry="1.4" fill="#5d8fbd" opacity="0.53" transform="rotate(11 157 422)"/><ellipse cx="70" cy="214" rx="24" ry="1.4" fill="#6a9bc6" opacity="0.64" transform="rotate(-17 70 214)"/><ellipse cx="578" cy="261" rx="38" ry="1.7" fill="#7eaad0" opacity="0.65" transform="rotate(10 578 261)"/><ellipse cx="407" cy="475" rx="19" ry="1.0" fill="#5d8fbd" opacity="0.52" transform="rotate(-10 407 475)"/><ellipse cx="361" cy="340" rx="32" ry="1.7" fill="#6a9bc6" opacity="0.32" transform="rotate(-1 361 340)"/><ellipse cx="265" cy="525" rx="38" ry="0.7" fill="#7eaad0" opacity="0.56" transform="rotate(7 265 525)"/><ellipse cx="492" cy="125" rx="32" ry="1.7" fill="#4f80ad" opacity="0.63" transform="rotate(23 492 125)"/><ellipse cx="357" cy="77" rx="39" ry="1.0" fill="#7eaad0" opacity="0.61" transform="rotate(7 357 77)"/><ellipse cx="318" cy="179" rx="20" ry="1.5" fill="#4f80ad" opacity="0.45" transform="rotate(0 318 179)"/><ellipse cx="215" cy="192" rx="30" ry="0.9" fill="#7eaad0" opacity="0.49" transform="rotate(-8 215 192)"/><ellipse cx="516" cy="327" rx="13" ry="1.4" fill="#6a9bc6" opacity="0.54" transform="rotate(-1 516 327)"/><ellipse cx="611" cy="304" rx="38" ry="0.7" fill="#7eaad0" opacity="0.68" transform="rotate(3 611 304)"/><ellipse cx="153" cy="474" rx="39" ry="1.0" fill="#5d8fbd" opacity="0.58" transform="rotate(17 153 474)"/><ellipse cx="169" cy="232" rx="17" ry="1.4" fill="#7eaad0" opacity="0.50" transform="rotate(-8 169 232)"/><ellipse cx="196" cy="260" rx="25" ry="1.7" fill="#4f80ad" opacity="0.44" transform="rotate(-5 196 260)"/><ellipse cx="432" cy="403" rx="38" ry="1.1" fill="#6a9bc6" opacity="0.46" transform="rotate(-7 432 403)"/><ellipse cx="143" cy="93" rx="15" ry="1.5" fill="#4f80ad" opacity="0.67" transform="rotate(-26 143 93)"/><ellipse cx="263" cy="348" rx="24" ry="1.3" fill="#6a9bc6" opacity="0.34" transform="rotate(1 263 348)"/><ellipse cx="491" cy="334" rx="26" ry="1.1" fill="#5d8fbd" opacity="0.51" transform="rotate(-2 491 334)"/><ellipse cx="46" cy="347" rx="25" ry="1.3" fill="#6a9bc6" opacity="0.65" transform="rotate(5 46 347)"/><ellipse cx="109" cy="536" rx="23" ry="1.4" fill="#7eaad0" opacity="0.69" transform="rotate(30 109 536)"/><ellipse cx="64" cy="324" rx="34" ry="1.2" fill="#7eaad0" opacity="0.62" transform="rotate(1 64 324)"/><ellipse cx="288" cy="46" rx="24" ry="1.6" fill="#5d8fbd" opacity="0.65" transform="rotate(-5 288 46)"/><ellipse cx="251" cy="512" rx="32" ry="1.3" fill="#5d8fbd" opacity="0.55" transform="rotate(8 251 512)"/><ellipse cx="268" cy="441" rx="26" ry="0.8" fill="#5d8fbd" opacity="0.44" transform="rotate(4 268 441)"/><ellipse cx="613" cy="301" rx="19" ry="0.9" fill="#6a9bc6" opacity="0.69" transform="rotate(3 613 301)"/><ellipse cx="405" cy="269" rx="40" ry="1.1" fill="#7eaad0" opacity="0.40" transform="rotate(3 405 269)"/><ellipse cx="239" cy="430" rx="30" ry="1.3" fill="#4f80ad" opacity="0.45" transform="rotate(6 239 430)"/><ellipse cx="249" cy="89" rx="39" ry="1.6" fill="#5d8fbd" opacity="0.60" transform="rotate(-10 249 89)"/><ellipse cx="609" cy="295" rx="32" ry="1.2" fill="#7eaad0" opacity="0.68" transform="rotate(4 609 295)"/><ellipse cx="514" cy="163" rx="20" ry="1.0" fill="#5d8fbd" opacity="0.62" transform="rotate(21 514 163)"/><ellipse cx="28" cy="416" rx="28" ry="1.7" fill="#5d8fbd" opacity="0.70" transform="rotate(19 28 416)"/><ellipse cx="373" cy="285" rx="30" ry="1.7" fill="#6a9bc6" opacity="0.35" transform="rotate(1 373 285)"/><ellipse cx="463" cy="258" rx="17" ry="0.9" fill="#5d8fbd" opacity="0.48" transform="rotate(6 463 258)"/><ellipse cx="152" cy="574" rx="27" ry="1.3" fill="#4f80ad" opacity="0.69" transform="rotate(28 152 574)"/><ellipse cx="153" cy="549" rx="40" ry="1.3" fill="#7eaad0" opacity="0.66" transform="rotate(25 153 549)"/><ellipse cx="193" cy="48" rx="38" ry="1.7" fill="#6a9bc6" opacity="0.68" transform="rotate(-22 193 48)"/><ellipse cx="392" cy="273" rx="25" ry="1.8" fill="#7eaad0" opacity="0.38" transform="rotate(2 392 273)"/><ellipse cx="100" cy="242" rx="33" ry="1.2" fill="#6a9bc6" opacity="0.58" transform="rotate(-11 100 242)"/><ellipse cx="193" cy="445" rx="37" ry="1.3" fill="#7eaad0" opacity="0.51" transform="rotate(10 193 445)"/><ellipse cx="350" cy="93" rx="17" ry="0.9" fill="#5d8fbd" opacity="0.58" transform="rotate(5 350 93)"/><ellipse cx="65" cy="456" rx="16" ry="1.0" fill="#5d8fbd" opacity="0.67" transform="rotate(23 65 456)"/><ellipse cx="544" cy="127" rx="33" ry="1.5" fill="#6a9bc6" opacity="0.69" transform="rotate(29 544 127)"/><ellipse cx="302" cy="545" rx="20" ry="1.8" fill="#5d8fbd" opacity="0.58" transform="rotate(2 302 545)"/><ellipse cx="138" cy="128" rx="32" ry="1.5" fill="#7eaad0" opacity="0.63" transform="rotate(-23 138 128)"/><ellipse cx="569" cy="438" rx="22" ry="1.0" fill="#4f80ad" opacity="0.66" transform="rotate(-20 569 438)"/><ellipse cx="313" cy="72" rx="39" ry="1.2" fill="#4f80ad" opacity="0.61" transform="rotate(-0 313 72)"/><ellipse cx="168" cy="585" rx="27" ry="1.2" fill="#6a9bc6" opacity="0.70" transform="rotate(26 168 585)"/><ellipse cx="128" cy="152" rx="27" ry="1.0" fill="#4f80ad" opacity="0.62" transform="rotate(-21 128 152)"/><ellipse cx="166" cy="515" rx="39" ry="1.4" fill="#7eaad0" opacity="0.61" transform="rotate(20 166 515)"/><ellipse cx="291" cy="461" rx="21" ry="0.9" fill="#7eaad0" opacity="0.46" transform="rotate(2 291 461)"/><ellipse cx="330" cy="526" rx="12" ry="1.6" fill="#5d8fbd" opacity="0.56" transform="rotate(-2 330 526)"/><ellipse cx="477" cy="264" rx="35" ry="1.0" fill="#6a9bc6" opacity="0.50" transform="rotate(6 477 264)"/><ellipse cx="14" cy="322" rx="21" ry="1.4" fill="#7eaad0" opacity="0.69" transform="rotate(1 14 322)"/><ellipse cx="316" cy="439" rx="23" ry="1.7" fill="#6a9bc6" opacity="0.43" transform="rotate(-0 316 439)"/><ellipse cx="99" cy="129" rx="26" ry="1.6" fill="#4f80ad" opacity="0.67" transform="rotate(-27 99 129)"/><ellipse cx="597" cy="293" rx="17" ry="1.5" fill="#4f80ad" opacity="0.67" transform="rotate(5 597 293)"/><ellipse cx="428" cy="532" rx="30" ry="1.6" fill="#5d8fbd" opacity="0.60" transform="rotate(-16 428 532)"/><ellipse cx="113" cy="318" rx="23" ry="1.6" fill="#5d8fbd" opacity="0.55" transform="rotate(-0 113 318)"/><ellipse cx="149" cy="564" rx="31" ry="1.3" fill="#4f80ad" opacity="0.69" transform="rotate(27 149 564)"/><ellipse cx="354" cy="31" rx="38" ry="1.0" fill="#6a9bc6" opacity="0.67" transform="rotate(7 354 31)"/><ellipse cx="368" cy="473" rx="31" ry="1.1" fill="#5d8fbd" opacity="0.49" transform="rotate(-6 368 473)"/><ellipse cx="192" cy="357" rx="27" ry="1.6" fill="#4f80ad" opacity="0.44" transform="rotate(3 192 357)"/><ellipse cx="244" cy="465" rx="34" ry="1.5" fill="#5d8fbd" opacity="0.49" transform="rotate(7 244 465)"/><ellipse cx="315" cy="609" rx="12" ry="1.2" fill="#5d8fbd" opacity="0.68" transform="rotate(-0 315 609)"/><ellipse cx="217" cy="483" rx="39" ry="1.1" fill="#4f80ad" opacity="0.53" transform="rotate(11 217 483)"/><ellipse cx="617" cy="312" rx="21" ry="1.7" fill="#7eaad0" opacity="0.69" transform="rotate(1 617 312)"/><ellipse cx="53" cy="176" rx="21" ry="1.6" fill="#6a9bc6" opacity="0.69" transform="rotate(-25 53 176)"/><ellipse cx="123" cy="287" rx="27" ry="1.1" fill="#5d8fbd" opacity="0.54" transform="rotate(-4 123 287)"/><ellipse cx="63" cy="351" rx="28" ry="1.6" fill="#7eaad0" opacity="0.62" transform="rotate(6 63 351)"/><ellipse cx="16" cy="265" rx="33" ry="1.5" fill="#6a9bc6" opacity="0.70" transform="rotate(-11 16 265)"/><ellipse cx="359" cy="115" rx="21" ry="0.9" fill="#4f80ad" opacity="0.55" transform="rotate(6 359 115)"/><ellipse cx="173" cy="101" rx="15" ry="1.0" fill="#4f80ad" opacity="0.63" transform="rotate(-21 173 101)"/><ellipse cx="195" cy="594" rx="20" ry="1.4" fill="#4f80ad" opacity="0.69" transform="rotate(22 195 594)"/><ellipse cx="278" cy="275" rx="35" ry="1.4" fill="#6a9bc6" opacity="0.33" transform="rotate(-1 278 275)"/><ellipse cx="192" cy="381" rx="31" ry="1.2" fill="#6a9bc6" opacity="0.45" transform="rotate(5 192 381)"/><ellipse cx="354" cy="375" rx="26" ry="1.4" fill="#5d8fbd" opacity="0.35" transform="rotate(-1 354 375)"/><ellipse cx="593" cy="294" rx="31" ry="1.2" fill="#4f80ad" opacity="0.66" transform="rotate(4 593 294)"/><ellipse cx="529" cy="499" rx="30" ry="0.9" fill="#4f80ad" opacity="0.66" transform="rotate(-26 529 499)"/><ellipse cx="157" cy="415" rx="31" ry="1.6" fill="#5d8fbd" opacity="0.52" transform="rotate(10 157 415)"/><ellipse cx="284" cy="378" rx="27" ry="1.3" fill="#7eaad0" opacity="0.35" transform="rotate(1 284 378)"/><ellipse cx="60" cy="483" rx="30" ry="1.1" fill="#5d8fbd" opacity="0.70" transform="rotate(28 60 483)"/><ellipse cx="354" cy="407" rx="29" ry="1.8" fill="#4f80ad" opacity="0.39" transform="rotate(-2 354 407)"/><ellipse cx="601" cy="275" rx="10" ry="1.0" fill="#6a9bc6" opacity="0.67" transform="rotate(8 601 275)"/><ellipse cx="282" cy="251" rx="28" ry="1.3" fill="#4f80ad" opacity="0.36" transform="rotate(-1 282 251)"/><ellipse cx="189" cy="576" rx="13" ry="1.6" fill="#6a9bc6" opacity="0.67" transform="rotate(22 189 576)"/><ellipse cx="222" cy="222" rx="34" ry="1.3" fill="#4f80ad" opacity="0.45" transform="rotate(-6 222 222)"/><ellipse cx="300" cy="280" rx="31" ry="1.1" fill="#4f80ad" opacity="0.31" transform="rotate(-0 300 280)"/><ellipse cx="75" cy="502" rx="38" ry="1.5" fill="#6a9bc6" opacity="0.69" transform="rotate(30 75 502)"/><ellipse cx="122" cy="415" rx="22" ry="1.5" fill="#6a9bc6" opacity="0.57" transform="rotate(12 122 415)"/><ellipse cx="284" cy="275" rx="10" ry="0.9" fill="#4f80ad" opacity="0.33" transform="rotate(-1 284 275)"/><ellipse cx="470" cy="508" rx="12" ry="0.8" fill="#6a9bc6" opacity="0.61" transform="rotate(-20 470 508)"/><ellipse cx="233" cy="132" rx="13" ry="1.4" fill="#7eaad0" opacity="0.55" transform="rotate(-10 233 132)"/><ellipse cx="332" cy="403" rx="28" ry="1.4" fill="#5d8fbd" opacity="0.38" transform="rotate(-1 332 403)"/><ellipse cx="222" cy="530" rx="29" ry="1.6" fill="#4f80ad" opacity="0.59" transform="rotate(13 222 530)"/><ellipse cx="572" cy="373" rx="30" ry="1.0" fill="#6a9bc6" opacity="0.64" transform="rotate(-10 572 373)"/><ellipse cx="196" cy="123" rx="31" ry="1.3" fill="#7eaad0" opacity="0.58" transform="rotate(-16 196 123)"/><ellipse cx="307" cy="341" rx="38" ry="1.7" fill="#6a9bc6" opacity="0.29" transform="rotate(0 307 341)"/><ellipse cx="349" cy="312" rx="14" ry="1.0" fill="#7eaad0" opacity="0.30" transform="rotate(0 349 312)"/><ellipse cx="388" cy="542" rx="39" ry="1.2" fill="#6a9bc6" opacity="0.60" transform="rotate(-11 388 542)"/><ellipse cx="318" cy="315" rx="31" ry="1.2" fill="#7eaad0" opacity="0.26" transform="rotate(0 318 315)"/><ellipse cx="308" cy="62" rx="11" ry="1.5" fill="#4f80ad" opacity="0.63" transform="rotate(-1 308 62)"/><ellipse cx="185" cy="490" rx="27" ry="1.5" fill="#7eaad0" opacity="0.57" transform="rotate(15 185 490)"/><ellipse cx="346" cy="81" rx="13" ry="1.6" fill="#4f80ad" opacity="0.60" transform="rotate(5 346 81)"/><ellipse cx="341" cy="476" rx="33" ry="1.2" fill="#6a9bc6" opacity="0.48" transform="rotate(-3 341 476)"/><ellipse cx="518" cy="472" rx="19" ry="1.8" fill="#7eaad0" opacity="0.62" transform="rotate(-21 518 472)"/><ellipse cx="169" cy="540" rx="13" ry="1.7" fill="#5d8fbd" opacity="0.64" transform="rotate(22 169 540)"/><ellipse cx="484" cy="156" rx="34" ry="1.3" fill="#4f80ad" opacity="0.59" transform="rotate(18 484 156)"/><ellipse cx="537" cy="386" rx="23" ry="1.4" fill="#6a9bc6" opacity="0.59" transform="rotate(-10 537 386)"/><ellipse cx="508" cy="506" rx="27" ry="1.3" fill="#6a9bc6" opacity="0.64" transform="rotate(-24 508 506)"/><ellipse cx="172" cy="538" rx="40" ry="1.4" fill="#5d8fbd" opacity="0.63" transform="rotate(21 172 538)"/><ellipse cx="91" cy="472" rx="22" ry="0.8" fill="#4f80ad" opacity="0.65" transform="rotate(23 91 472)"/><ellipse cx="540" cy="164" rx="31" ry="1.6" fill="#7eaad0" opacity="0.65" transform="rotate(23 540 164)"/><ellipse cx="309" cy="366" rx="18" ry="1.2" fill="#7eaad0" opacity="0.32" transform="rotate(0 309 366)"/><ellipse cx="480" cy="258" rx="32" ry="1.5" fill="#4f80ad" opacity="0.51" transform="rotate(7 480 258)"/><ellipse cx="287" cy="311" rx="27" ry="1.7" fill="#5d8fbd" opacity="0.29" transform="rotate(-0 287 311)"/><ellipse cx="142" cy="275" rx="16" ry="1.0" fill="#4f80ad" opacity="0.51" transform="rotate(-5 142 275)"/><ellipse cx="215" cy="366" rx="27" ry="1.2" fill="#4f80ad" opacity="0.41" transform="rotate(3 215 366)"/><ellipse cx="557" cy="479" rx="11" ry="1.4" fill="#7eaad0" opacity="0.68" transform="rotate(-26 557 479)"/><ellipse cx="105" cy="291" rx="40" ry="1.2" fill="#6a9bc6" opacity="0.56" transform="rotate(-4 105 291)"/><ellipse cx="550" cy="196" rx="36" ry="0.8" fill="#4f80ad" opacity="0.64" transform="rotate(19 550 196)"/><ellipse cx="162" cy="239" rx="37" ry="0.9" fill="#7eaad0" opacity="0.50" transform="rotate(-8 162 239)"/><ellipse cx="392" cy="457" rx="33" ry="1.2" fill="#5d8fbd" opacity="0.48" transform="rotate(-7 392 457)"/><ellipse cx="301" cy="92" rx="17" ry="1.4" fill="#5d8fbd" opacity="0.58" transform="rotate(-2 301 92)"/><ellipse cx="71" cy="237" rx="19" ry="1.1" fill="#6a9bc6" opacity="0.63" transform="rotate(-13 71 237)"/><ellipse cx="402" cy="427" rx="12" ry="1.3" fill="#6a9bc6" opacity="0.45" transform="rotate(-6 402 427)"/><ellipse cx="278" cy="455" rx="29" ry="0.9" fill="#7eaad0" opacity="0.46" transform="rotate(3 278 455)"/><ellipse cx="386" cy="283" rx="17" ry="1.7" fill="#6a9bc6" opacity="0.37" transform="rotate(2 386 283)"/><ellipse cx="470" cy="373" rx="22" ry="1.8" fill="#4f80ad" opacity="0.49" transform="rotate(-6 470 373)"/><ellipse cx="494" cy="163" rx="29" ry="1.0" fill="#4f80ad" opacity="0.60" transform="rotate(19 494 163)"/><ellipse cx="486" cy="435" rx="30" ry="1.0" fill="#6a9bc6" opacity="0.55" transform="rotate(-13 486 435)"/><ellipse cx="312" cy="80" rx="25" ry="1.4" fill="#5d8fbd" opacity="0.60" transform="rotate(-0 312 80)"/><ellipse cx="357" cy="235" rx="30" ry="1.5" fill="#5d8fbd" opacity="0.39" transform="rotate(2 357 235)"/><ellipse cx="319" cy="397" rx="25" ry="1.2" fill="#7eaad0" opacity="0.37" transform="rotate(-0 319 397)"/><ellipse cx="59" cy="340" rx="28" ry="1.0" fill="#4f80ad" opacity="0.63" transform="rotate(4 59 340)"/><ellipse cx="209" cy="371" rx="33" ry="1.4" fill="#5d8fbd" opacity="0.42" transform="rotate(4 209 371)"/><ellipse cx="198" cy="280" rx="39" ry="1.0" fill="#6a9bc6" opacity="0.43" transform="rotate(-3 198 280)"/><ellipse cx="382" cy="201" rx="32" ry="0.8" fill="#6a9bc6" opacity="0.45" transform="rotate(5 382 201)"/><ellipse cx="439" cy="112" rx="39" ry="1.3" fill="#4f80ad" opacity="0.60" transform="rotate(17 439 112)"/><ellipse cx="488" cy="176" rx="33" ry="0.7" fill="#7eaad0" opacity="0.58" transform="rotate(16 488 176)"/><ellipse cx="175" cy="50" rx="31" ry="1.3" fill="#5d8fbd" opacity="0.69" transform="rotate(-25 175 50)"/><ellipse cx="313" cy="325" rx="12" ry="1.6" fill="#6a9bc6" opacity="0.26" transform="rotate(0 313 325)"/><ellipse cx="360" cy="455" rx="17" ry="1.3" fill="#5d8fbd" opacity="0.46" transform="rotate(-4 360 455)"/><ellipse cx="36" cy="234" rx="38" ry="0.9" fill="#5d8fbd" opacity="0.68" transform="rotate(-16 36 234)"/><ellipse cx="347" cy="572" rx="32" ry="1.2" fill="#4f80ad" opacity="0.63" transform="rotate(-6 347 572)"/><ellipse cx="160" cy="573" rx="20" ry="1.6" fill="#4f80ad" opacity="0.69" transform="rotate(26 160 573)"/><ellipse cx="81" cy="424" rx="12" ry="0.9" fill="#5d8fbd" opacity="0.63" transform="rotate(17 81 424)"/><ellipse cx="294" cy="184" rx="20" ry="1.3" fill="#5d8fbd" opacity="0.45" transform="rotate(-2 294 184)"/><ellipse cx="235" cy="190" rx="32" ry="1.0" fill="#4f80ad" opacity="0.47" transform="rotate(-7 235 190)"/><ellipse cx="371" cy="314" rx="33" ry="0.9" fill="#6a9bc6" opacity="0.33" transform="rotate(0 371 314)"/><ellipse cx="23" cy="344" rx="29" ry="1.5" fill="#5d8fbd" opacity="0.68" transform="rotate(5 23 344)"/><ellipse cx="412" cy="532" rx="32" ry="0.8" fill="#6a9bc6" opacity="0.59" transform="rotate(-14 412 532)"/><ellipse cx="266" cy="601" rx="39" ry="0.9" fill="#4f80ad" opacity="0.67" transform="rotate(9 266 601)"/><ellipse cx="559" cy="330" rx="31" ry="1.1" fill="#5d8fbd" opacity="0.61" transform="rotate(-2 559 330)"/><ellipse cx="365" cy="321" rx="29" ry="1.1" fill="#5d8fbd" opacity="0.32" transform="rotate(-0 365 321)"/><ellipse cx="275" cy="603" rx="17" ry="1.0" fill="#4f80ad" opacity="0.67" transform="rotate(8 275 603)"/><ellipse cx="577" cy="252" rx="35" ry="1.1" fill="#7eaad0" opacity="0.65" transform="rotate(11 577 252)"/><ellipse cx="487" cy="370" rx="15" ry="0.9" fill="#7eaad0" opacity="0.51" transform="rotate(-6 487 370)"/><ellipse cx="201" cy="85" rx="21" ry="1.5" fill="#7eaad0" opacity="0.63" transform="rotate(-18 201 85)"/><ellipse cx="105" cy="432" rx="35" ry="1.5" fill="#5d8fbd" opacity="0.60" transform="rotate(16 105 432)"/><ellipse cx="140" cy="537" rx="14" ry="1.5" fill="#4f80ad" opacity="0.66" transform="rotate(26 140 537)"/><ellipse cx="251" cy="41" rx="19" ry="1.6" fill="#6a9bc6" opacity="0.67" transform="rotate(-12 251 41)"/><ellipse cx="27" cy="259" rx="24" ry="1.5" fill="#6a9bc6" opacity="0.68" transform="rotate(-11 27 259)"/><ellipse cx="495" cy="86" rx="12" ry="1.6" fill="#6a9bc6" opacity="0.68" transform="rotate(28 495 86)"/><ellipse cx="88" cy="517" rx="21" ry="1.4" fill="#5d8fbd" opacity="0.69" transform="rotate(30 88 517)"/><ellipse cx="366" cy="170" rx="11" ry="0.8" fill="#7eaad0" opacity="0.48" transform="rotate(5 366 170)"/><ellipse cx="528" cy="508" rx="14" ry="1.7" fill="#5d8fbd" opacity="0.67" transform="rotate(-27 528 508)"/><ellipse cx="111" cy="363" rx="22" ry="0.7" fill="#7eaad0" opacity="0.56" transform="rotate(6 111 363)"/><ellipse cx="114" cy="143" rx="16" ry="1.0" fill="#6a9bc6" opacity="0.64" transform="rotate(-24 114 143)"/><ellipse cx="29" cy="391" rx="17" ry="1.0" fill="#7eaad0" opacity="0.68" transform="rotate(14 29 391)"/><ellipse cx="550" cy="305" rx="13" ry="1.1" fill="#7eaad0" opacity="0.60" transform="rotate(2 550 305)"/><ellipse cx="130" cy="554" rx="26" ry="1.4" fill="#5d8fbd" opacity="0.69" transform="rotate(29 130 554)"/><ellipse cx="228" cy="345" rx="25" ry="1.7" fill="#4f80ad" opacity="0.38" transform="rotate(2 228 345)"/><ellipse cx="246" cy="121" rx="20" ry="0.9" fill="#4f80ad" opacity="0.56" transform="rotate(-9 246 121)"/><ellipse cx="333" cy="482" rx="40" ry="1.8" fill="#5d8fbd" opacity="0.49" transform="rotate(-2 333 482)"/><ellipse cx="494" cy="464" rx="33" ry="1.7" fill="#7eaad0" opacity="0.59" transform="rotate(-17 494 464)"/><ellipse cx="226" cy="526" rx="35" ry="0.9" fill="#4f80ad" opacity="0.58" transform="rotate(12 226 526)"/><ellipse cx="503" cy="439" rx="11" ry="1.5" fill="#6a9bc6" opacity="0.58" transform="rotate(-15 503 439)"/><ellipse cx="354" cy="127" rx="40" ry="1.7" fill="#7eaad0" opacity="0.54" transform="rotate(5 354 127)"/><ellipse cx="341" cy="119" rx="11" ry="0.8" fill="#6a9bc6" opacity="0.54" transform="rotate(3 341 119)"/><ellipse cx="20" cy="304" rx="20" ry="1.4" fill="#6a9bc6" opacity="0.68" transform="rotate(-3 20 304)"/><ellipse cx="217" cy="120" rx="34" ry="1.7" fill="#5d8fbd" opacity="0.57" transform="rotate(-13 217 120)"/><ellipse cx="21" cy="371" rx="38" ry="1.6" fill="#4f80ad" opacity="0.69" transform="rotate(10 21 371)"/><ellipse cx="598" cy="240" rx="38" ry="1.1" fill="#5d8fbd" opacity="0.68" transform="rotate(15 598 240)"/><ellipse cx="215" cy="209" rx="39" ry="1.5" fill="#7eaad0" opacity="0.47" transform="rotate(-7 215 209)"/><ellipse cx="407" cy="118" rx="39" ry="1.5" fill="#4f80ad" opacity="0.57" transform="rotate(12 407 118)"/><ellipse cx="591" cy="251" rx="40" ry="1.8" fill="#5d8fbd" opacity="0.67" transform="rotate(12 591 251)"/><ellipse cx="120" cy="206" rx="34" ry="1.4" fill="#5d8fbd" opacity="0.58" transform="rotate(-15 120 206)"/><ellipse cx="466" cy="157" rx="39" ry="0.9" fill="#5d8fbd" opacity="0.57" transform="rotate(16 466 157)"/><ellipse cx="513" cy="422" rx="20" ry="0.7" fill="#6a9bc6" opacity="0.58" transform="rotate(-14 513 422)"/><ellipse cx="166" cy="77" rx="10" ry="1.1" fill="#7eaad0" opacity="0.67" transform="rotate(-24 166 77)"/><ellipse cx="70" cy="305" rx="36" ry="1.4" fill="#6a9bc6" opacity="0.61" transform="rotate(-2 70 305)"/><ellipse cx="112" cy="242" rx="32" ry="1.3" fill="#5d8fbd" opacity="0.57" transform="rotate(-10 112 242)"/><ellipse cx="556" cy="444" rx="23" ry="1.4" fill="#7eaad0" opacity="0.65" transform="rotate(-20 556 444)"/><ellipse cx="134" cy="128" rx="31" ry="1.5" fill="#4f80ad" opacity="0.63" transform="rotate(-23 134 128)"/><ellipse cx="249" cy="348" rx="25" ry="0.8" fill="#5d8fbd" opacity="0.36" transform="rotate(1 249 348)"/><ellipse cx="377" cy="134" rx="11" ry="0.9" fill="#4f80ad" opacity="0.53" transform="rotate(8 377 134)"/><ellipse cx="608" cy="302" rx="13" ry="1.6" fill="#7eaad0" opacity="0.68" transform="rotate(3 608 302)"/><ellipse cx="308" cy="417" rx="13" ry="1.3" fill="#6a9bc6" opacity="0.40" transform="rotate(0 308 417)"/><ellipse cx="236" cy="245" rx="16" ry="0.7" fill="#7eaad0" opacity="0.41" transform="rotate(-4 236 245)"/><ellipse cx="418" cy="64" rx="20" ry="1.3" fill="#6a9bc6" opacity="0.65" transform="rotate(17 418 64)"/><ellipse cx="348" cy="527" rx="35" ry="1.2" fill="#7eaad0" opacity="0.56" transform="rotate(-5 348 527)"/><ellipse cx="250" cy="535" rx="11" ry="1.3" fill="#6a9bc6" opacity="0.58" transform="rotate(9 250 535)"/><ellipse cx="82" cy="476" rx="15" ry="1.8" fill="#6a9bc6" opacity="0.66" transform="rotate(25 82 476)"/><ellipse cx="504" cy="88" rx="23" ry="1.8" fill="#7eaad0" opacity="0.69" transform="rotate(29 504 88)"/><ellipse cx="132" cy="516" rx="14" ry="1.4" fill="#4f80ad" opacity="0.65" transform="rotate(24 132 516)"/><ellipse cx="208" cy="181" rx="24" ry="1.7" fill="#7eaad0" opacity="0.51" transform="rotate(-10 208 181)"/><ellipse cx="356" cy="369" rx="39" ry="0.8" fill="#5d8fbd" opacity="0.35" transform="rotate(-1 356 369)"/><ellipse cx="353" cy="73" rx="19" ry="1.3" fill="#4f80ad" opacity="0.61" transform="rotate(6 353 73)"/><ellipse cx="547" cy="173" rx="30" ry="1.3" fill="#7eaad0" opacity="0.65" transform="rotate(22 547 173)"/><ellipse cx="212" cy="157" rx="32" ry="1.7" fill="#4f80ad" opacity="0.53" transform="rotate(-11 212 157)"/><ellipse cx="194" cy="183" rx="25" ry="1.5" fill="#5d8fbd" opacity="0.52" transform="rotate(-11 194 183)"/><ellipse cx="192" cy="468" rx="33" ry="1.1" fill="#7eaad0" opacity="0.53" transform="rotate(12 192 468)"/><ellipse cx="379" cy="66" rx="23" ry="1.7" fill="#7eaad0" opacity="0.63" transform="rotate(11 379 66)"/><ellipse cx="463" cy="477" rx="36" ry="1.6" fill="#6a9bc6" opacity="0.57" transform="rotate(-16 463 477)"/><ellipse cx="48" cy="447" rx="22" ry="1.6" fill="#5d8fbd" opacity="0.68" transform="rotate(23 48 447)"/><ellipse cx="229" cy="133" rx="21" ry="1.2" fill="#7eaad0" opacity="0.55" transform="rotate(-11 229 133)"/><ellipse cx="398" cy="87" rx="11" ry="1.1" fill="#7eaad0" opacity="0.61" transform="rotate(13 398 87)"/><ellipse cx="117" cy="545" rx="28" ry="1.1" fill="#6a9bc6" opacity="0.69" transform="rotate(30 117 545)"/><ellipse cx="522" cy="170" rx="13" ry="0.7" fill="#5d8fbd" opacity="0.62" transform="rotate(21 522 170)"/><ellipse cx="108" cy="362" rx="36" ry="1.4" fill="#6a9bc6" opacity="0.56" transform="rotate(6 108 362)"/><ellipse cx="173" cy="262" rx="11" ry="1.6" fill="#5d8fbd" opacity="0.47" transform="rotate(-5 173 262)"/><ellipse cx="299" cy="92" rx="15" ry="1.6" fill="#6a9bc6" opacity="0.58" transform="rotate(-2 299 92)"/><ellipse cx="163" cy="505" rx="19" ry="1.8" fill="#4f80ad" opacity="0.60" transform="rotate(19 163 505)"/><ellipse cx="268" cy="242" rx="20" ry="1.0" fill="#7eaad0" opacity="0.38" transform="rotate(-2 268 242)"/><ellipse cx="194" cy="331" rx="29" ry="1.3" fill="#5d8fbd" opacity="0.43" transform="rotate(1 194 331)"/><ellipse cx="322" cy="418" rx="35" ry="1.1" fill="#4f80ad" opacity="0.40" transform="rotate(-0 322 418)"/><ellipse cx="191" cy="77" rx="12" ry="1.8" fill="#4f80ad" opacity="0.65" transform="rotate(-20 191 77)"/><ellipse cx="537" cy="171" rx="31" ry="1.7" fill="#4f80ad" opacity="0.64" transform="rotate(22 537 171)"/><ellipse cx="124" cy="329" rx="17" ry="0.8" fill="#7eaad0" opacity="0.53" transform="rotate(1 124 329)"/><ellipse cx="414" cy="429" rx="32" ry="1.4" fill="#4f80ad" opacity="0.47" transform="rotate(-7 414 429)"/><ellipse cx="167" cy="268" rx="22" ry="0.7" fill="#6a9bc6" opacity="0.48" transform="rotate(-5 167 268)"/><ellipse cx="219" cy="449" rx="31" ry="1.4" fill="#7eaad0" opacity="0.49" transform="rotate(8 219 449)"/><ellipse cx="527" cy="527" rx="36" ry="0.9" fill="#5d8fbd" opacity="0.69" transform="rotate(-30 527 527)"/><ellipse cx="297" cy="466" rx="32" ry="1.3" fill="#6a9bc6" opacity="0.47" transform="rotate(2 297 466)"/><ellipse cx="410" cy="147" rx="17" ry="1.7" fill="#7eaad0" opacity="0.54" transform="rotate(11 410 147)"/><ellipse cx="189" cy="534" rx="24" ry="1.7" fill="#5d8fbd" opacity="0.62" transform="rotate(18 189 534)"/><ellipse cx="298" cy="130" rx="14" ry="1.4" fill="#4f80ad" opacity="0.53" transform="rotate(-2 298 130)"/><ellipse cx="262" cy="546" rx="15" ry="1.8" fill="#4f80ad" opacity="0.59" transform="rotate(8 262 546)"/><ellipse cx="259" cy="361" rx="37" ry="1.2" fill="#4f80ad" opacity="0.35" transform="rotate(2 259 361)"/><ellipse cx="538" cy="122" rx="12" ry="1.1" fill="#6a9bc6" opacity="0.68" transform="rotate(29 538 122)"/><ellipse cx="200" cy="47" rx="24" ry="0.9" fill="#6a9bc6" opacity="0.68" transform="rotate(-21 200 47)"/><ellipse cx="362" cy="108" rx="34" ry="1.6" fill="#6a9bc6" opacity="0.56" transform="rotate(7 362 108)"/><ellipse cx="385" cy="400" rx="22" ry="1.8" fill="#7eaad0" opacity="0.41" transform="rotate(-4 385 400)"/><ellipse cx="11" cy="339" rx="32" ry="1.7" fill="#4f80ad" opacity="0.70" transform="rotate(4 11 339)"/><ellipse cx="473" cy="337" rx="11" ry="0.7" fill="#6a9bc6" opacity="0.48" transform="rotate(-2 473 337)"/><ellipse cx="147" cy="549" rx="19" ry="0.8" fill="#4f80ad" opacity="0.67" transform="rotate(26 147 549)"/><ellipse cx="111" cy="517" rx="19" ry="1.0" fill="#4f80ad" opacity="0.67" transform="rotate(27 111 517)"/><ellipse cx="274" cy="433" rx="14" ry="1.8" fill="#7eaad0" opacity="0.43" transform="rotate(3 274 433)"/><ellipse cx="229" cy="127" rx="38" ry="1.7" fill="#7eaad0" opacity="0.56" transform="rotate(-11 229 127)"/><ellipse cx="21" cy="321" rx="14" ry="1.5" fill="#5d8fbd" opacity="0.68" transform="rotate(1 21 321)"/><ellipse cx="238" cy="404" rx="33" ry="1.4" fill="#5d8fbd" opacity="0.42" transform="rotate(4 238 404)"/><ellipse cx="414" cy="412" rx="11" ry="1.5" fill="#7eaad0" opacity="0.45" transform="rotate(-6 414 412)"/><ellipse cx="281" cy="87" rx="18" ry="1.5" fill="#6a9bc6" opacity="0.59" transform="rotate(-5 281 87)"/><ellipse cx="435" cy="398" rx="19" ry="1.4" fill="#4f80ad" opacity="0.46" transform="rotate(-6 435 398)"/><ellipse cx="390" cy="441" rx="23" ry="1.7" fill="#5d8fbd" opacity="0.46" transform="rotate(-6 390 441)"/><ellipse cx="182" cy="493" rx="25" ry="1.4" fill="#4f80ad" opacity="0.57" transform="rotate(16 182 493)"/><ellipse cx="228" cy="263" rx="15" ry="1.3" fill="#6a9bc6" opacity="0.40" transform="rotate(-3 228 263)"/><ellipse cx="76" cy="364" rx="25" ry="1.7" fill="#5d8fbd" opacity="0.61" transform="rotate(7 76 364)"/><ellipse cx="452" cy="73" rx="18" ry="1.0" fill="#4f80ad" opacity="0.66" transform="rotate(22 452 73)"/><ellipse cx="507" cy="548" rx="36" ry="1.1" fill="#4f80ad" opacity="0.69" transform="rotate(-30 507 548)"/><ellipse cx="270" cy="82" rx="36" ry="1.7" fill="#5d8fbd" opacity="0.60" transform="rotate(-7 270 82)"/><ellipse cx="228" cy="280" rx="29" ry="1.7" fill="#5d8fbd" opacity="0.39" transform="rotate(-2 228 280)"/><ellipse cx="237" cy="221" rx="13" ry="1.1" fill="#7eaad0" opacity="0.43" transform="rotate(-5 237 221)"/><ellipse cx="175" cy="248" rx="36" ry="1.6" fill="#6a9bc6" opacity="0.48" transform="rotate(-7 175 248)"/><ellipse cx="77" cy="438" rx="12" ry="1.7" fill="#6a9bc6" opacity="0.64" transform="rotate(19 77 438)"/><ellipse cx="304" cy="360" rx="23" ry="1.4" fill="#4f80ad" opacity="0.31" transform="rotate(0 304 360)"/><ellipse cx="383" cy="541" rx="36" ry="1.5" fill="#6a9bc6" opacity="0.59" transform="rotate(-10 383 541)"/><ellipse cx="305" cy="311" rx="37" ry="1.2" fill="#5d8fbd" opacity="0.27" transform="rotate(-0 305 311)"/><ellipse cx="169" cy="204" rx="31" ry="1.4" fill="#6a9bc6" opacity="0.52" transform="rotate(-11 169 204)"/><ellipse cx="216" cy="332" rx="13" ry="1.4" fill="#6a9bc6" opacity="0.40" transform="rotate(1 216 332)"/><ellipse cx="304" cy="419" rx="29" ry="0.9" fill="#5d8fbd" opacity="0.40" transform="rotate(1 304 419)"/><ellipse cx="318" cy="299" rx="25" ry="0.9" fill="#7eaad0" opacity="0.28" transform="rotate(0 318 299)"/><ellipse cx="205" cy="214" rx="18" ry="1.3" fill="#7eaad0" opacity="0.47" transform="rotate(-8 205 214)"/><ellipse cx="500" cy="286" rx="36" ry="1.2" fill="#5d8fbd" opacity="0.53" transform="rotate(4 500 286)"/><ellipse cx="19" cy="259" rx="11" ry="1.3" fill="#5d8fbd" opacity="0.69" transform="rotate(-12 19 259)"/><ellipse cx="410" cy="291" rx="20" ry="1.6" fill="#6a9bc6" opacity="0.39" transform="rotate(2 410 291)"/><ellipse cx="526" cy="215" rx="28" ry="1.5" fill="#4f80ad" opacity="0.59" transform="rotate(15 526 215)"/><ellipse cx="448" cy="81" rx="33" ry="0.9" fill="#4f80ad" opacity="0.65" transform="rotate(21 448 81)"/><ellipse cx="226" cy="400" rx="34" ry="1.3" fill="#4f80ad" opacity="0.43" transform="rotate(5 226 400)"/><ellipse cx="109" cy="97" rx="32" ry="1.5" fill="#5d8fbd" opacity="0.69" transform="rotate(-30 109 97)"/><ellipse cx="164" cy="131" rx="14" ry="1.6" fill="#6a9bc6" opacity="0.60" transform="rotate(-19 164 131)"/><ellipse cx="289" cy="491" rx="13" ry="1.2" fill="#5d8fbd" opacity="0.51" transform="rotate(3 289 491)"/><ellipse cx="482" cy="288" rx="30" ry="1.8" fill="#6a9bc6" opacity="0.50" transform="rotate(3 482 288)"/><ellipse cx="367" cy="579" rx="33" ry="1.7" fill="#6a9bc6" opacity="0.64" transform="rotate(-9 367 579)"/><ellipse cx="457" cy="90" rx="22" ry="1.4" fill="#4f80ad" opacity="0.64" transform="rotate(22 457 90)"/><ellipse cx="318" cy="247" rx="37" ry="1.5" fill="#4f80ad" opacity="0.35" transform="rotate(0 318 247)"/><ellipse cx="252" cy="222" rx="19" ry="1.6" fill="#6a9bc6" opacity="0.42" transform="rotate(-4 252 222)"/><ellipse cx="261" cy="441" rx="32" ry="1.0" fill="#4f80ad" opacity="0.45" transform="rotate(4 261 441)"/><ellipse cx="445" cy="585" rx="29" ry="0.9" fill="#4f80ad" opacity="0.69" transform="rotate(-23 445 585)"/><ellipse cx="430" cy="577" rx="14" ry="1.5" fill="#6a9bc6" opacity="0.66" transform="rotate(-20 430 577)"/><ellipse cx="317" cy="437" rx="20" ry="0.8" fill="#4f80ad" opacity="0.42" transform="rotate(-0 317 437)"/><ellipse cx="353" cy="369" rx="38" ry="1.5" fill="#4f80ad" opacity="0.34" transform="rotate(-1 353 369)"/><ellipse cx="547" cy="270" rx="10" ry="0.8" fill="#7eaad0" opacity="0.60" transform="rotate(7 547 270)"/><ellipse cx="97" cy="423" rx="16" ry="1.5" fill="#6a9bc6" opacity="0.60" transform="rotate(15 97 423)"/><ellipse cx="490" cy="136" rx="26" ry="1.1" fill="#7eaad0" opacity="0.62" transform="rotate(21 490 136)"/><ellipse cx="462" cy="542" rx="32" ry="1.3" fill="#6a9bc6" opacity="0.64" transform="rotate(-22 462 542)"/><ellipse cx="433" cy="40" rx="21" ry="1.2" fill="#4f80ad" opacity="0.69" transform="rotate(22 433 40)"/><ellipse cx="465" cy="136" rx="36" ry="1.6" fill="#7eaad0" opacity="0.60" transform="rotate(18 465 136)"/><ellipse cx="441" cy="409" rx="33" ry="1.3" fill="#6a9bc6" opacity="0.48" transform="rotate(-8 441 409)"/><ellipse cx="189" cy="120" rx="30" ry="0.9" fill="#6a9bc6" opacity="0.59" transform="rotate(-17 189 120)"/><ellipse cx="459" cy="84" rx="11" ry="1.0" fill="#4f80ad" opacity="0.65" transform="rotate(23 459 84)"/><ellipse cx="102" cy="209" rx="12" ry="1.7" fill="#4f80ad" opacity="0.60" transform="rotate(-15 102 209)"/><ellipse cx="309" cy="363" rx="21" ry="1.6" fill="#4f80ad" opacity="0.32" transform="rotate(0 309 363)"/><ellipse cx="331" cy="599" rx="26" ry="1.6" fill="#6a9bc6" opacity="0.66" transform="rotate(-3 331 599)"/><ellipse cx="263" cy="341" rx="13" ry="0.9" fill="#6a9bc6" opacity="0.33" transform="rotate(1 263 341)"/><ellipse cx="415" cy="214" rx="19" ry="1.7" fill="#7eaad0" opacity="0.46" transform="rotate(7 415 214)"/><ellipse cx="419" cy="285" rx="37" ry="1.4" fill="#6a9bc6" opacity="0.41" transform="rotate(2 419 285)"/><ellipse cx="597" cy="430" rx="20" ry="1.7" fill="#5d8fbd" opacity="0.69" transform="rotate(-21 597 430)"/><ellipse cx="238" cy="504" rx="23" ry="0.7" fill="#6a9bc6" opacity="0.54" transform="rotate(10 238 504)"/><ellipse cx="335" cy="396" rx="16" ry="1.4" fill="#6a9bc6" opacity="0.37" transform="rotate(-1 335 396)"/><ellipse cx="539" cy="271" rx="13" ry="1.3" fill="#7eaad0" opacity="0.59" transform="rotate(7 539 271)"/><ellipse cx="405" cy="588" rx="32" ry="0.9" fill="#7eaad0" opacity="0.67" transform="rotate(-16 405 588)"/><ellipse cx="163" cy="54" rx="35" ry="1.7" fill="#7eaad0" opacity="0.70" transform="rotate(-27 163 54)"/><ellipse cx="246" cy="398" rx="23" ry="0.7" fill="#5d8fbd" opacity="0.40" transform="rotate(4 246 398)"/><ellipse cx="336" cy="405" rx="29" ry="1.5" fill="#5d8fbd" opacity="0.38" transform="rotate(-1 336 405)"/><ellipse cx="438" cy="56" rx="38" ry="0.8" fill="#4f80ad" opacity="0.68" transform="rotate(22 438 56)"/><ellipse cx="380" cy="184" rx="21" ry="1.6" fill="#5d8fbd" opacity="0.47" transform="rotate(6 380 184)"/><ellipse cx="299" cy="339" rx="14" ry="1.1" fill="#4f80ad" opacity="0.29" transform="rotate(0 299 339)"/><circle cx="172" cy="409" r="0.6" fill="#e8f0ff" opacity="0.6"/><circle cx="405" cy="286" r="0.6" fill="#e8f0ff" opacity="0.7"/><circle cx="296" cy="280" r="0.9" fill="#e8f0ff" opacity="0.6"/><circle cx="447" cy="299" r="1.0" fill="#e8f0ff" opacity="0.5"/><circle cx="229" cy="301" r="0.6" fill="#e8f0ff" opacity="0.4"/><circle cx="311" cy="155" r="1.2" fill="#e8f0ff" opacity="0.5"/><circle cx="536" cy="320" r="0.7" fill="#e8f0ff" opacity="0.4"/><circle cx="488" cy="385" r="0.6" fill="#e8f0ff" opacity="0.6"/><circle cx="134" cy="233" r="1.0" fill="#e8f0ff" opacity="0.7"/><circle cx="470" cy="336" r="0.6" fill="#e8f0ff" opacity="0.5"/><circle cx="216" cy="258" r="0.8" fill="#e8f0ff" opacity="0.5"/><circle cx="101" cy="364" r="1.2" fill="#e8f0ff" opacity="0.7"/><circle cx="219" cy="519" r="0.9" fill="#e8f0ff" opacity="0.4"/><circle cx="256" cy="406" r="0.9" fill="#e8f0ff" opacity="0.6"/><circle cx="279" cy="223" r="1.0" fill="#e8f0ff" opacity="0.7"/><circle cx="338" cy="250" r="1.1" fill="#e8f0ff" opacity="0.6"/><circle cx="200" cy="220" r="0.5" fill="#e8f0ff" opacity="0.7"/><circle cx="340" cy="170" r="0.7" fill="#e8f0ff" opacity="0.5"/><circle cx="318" cy="460" r="0.7" fill="#e8f0ff" opacity="0.6"/><circle cx="84" cy="476" r="0.8" fill="#e8f0ff" opacity="0.6"/><circle cx="351" cy="489" r="0.9" fill="#e8f0ff" opacity="0.6"/><circle cx="306" cy="292" r="0.9" fill="#e8f0ff" opacity="0.6"/><circle cx="104" cy="354" r="0.6" fill="#e8f0ff" opacity="0.7"/><circle cx="303" cy="201" r="0.7" fill="#e8f0ff" opacity="0.5"/><circle cx="198" cy="407" r="0.6" fill="#e8f0ff" opacity="0.8"/><circle cx="341" cy="476" r="0.9" fill="#e8f0ff" opacity="0.7"/><circle cx="205" cy="373" r="1.2" fill="#e8f0ff" opacity="0.5"/><circle cx="320" cy="321" r="0.7" fill="#e8f0ff" opacity="0.5"/><circle cx="357" cy="285" r="0.9" fill="#e8f0ff" opacity="0.7"/><circle cx="176" cy="165" r="1.2" fill="#e8f0ff" opacity="0.7"/><circle cx="443" cy="179" r="0.7" fill="#e8f0ff" opacity="0.4"/><circle cx="349" cy="439" r="0.8" fill="#e8f0ff" opacity="0.3"/><circle cx="281" cy="87" r="0.8" fill="#e8f0ff" opacity="0.6"/><circle cx="245" cy="526" r="1.2" fill="#e8f0ff" opacity="0.4"/><circle cx="443" cy="129" r="0.9" fill="#e8f0ff" opacity="0.7"/><circle cx="311" cy="443" r="0.5" fill="#e8f0ff" opacity="0.8"/><circle cx="462" cy="424" r="0.6" fill="#e8f0ff" opacity="0.6"/><circle cx="466" cy="89" r="1.1" fill="#e8f0ff" opacity="0.7"/><circle cx="456" cy="179" r="0.5" fill="#e8f0ff" opacity="0.8"/><circle cx="424" cy="388" r="1.1" fill="#e8f0ff" opacity="0.3"/><circle cx="270" cy="424" r="1.1" fill="#e8f0ff" opacity="0.5"/><circle cx="326" cy="315" r="0.5" fill="#e8f0ff" opacity="0.7"/><circle cx="335" cy="205" r="0.7" fill="#e8f0ff" opacity="0.7"/><circle cx="147" cy="434" r="1.1" fill="#e8f0ff" opacity="0.4"/><circle cx="260" cy="542" r="0.9" fill="#e8f0ff" opacity="0.5"/><circle cx="293" cy="274" r="0.6" fill="#e8f0ff" opacity="0.6"/><circle cx="372" cy="527" r="0.6" fill="#e8f0ff" opacity="0.6"/><circle cx="226" cy="307" r="0.6" fill="#e8f0ff" opacity="0.4"/><circle cx="367" cy="326" r="0.8" fill="#e8f0ff" opacity="0.6"/><circle cx="378" cy="190" r="0.9" fill="#e8f0ff" opacity="0.6"/><circle cx="124" cy="303" r="0.8" fill="#e8f0ff" opacity="0.6"/><circle cx="303" cy="483" r="1.1" fill="#e8f0ff" opacity="0.5"/><circle cx="92" cy="413" r="0.7" fill="#e8f0ff" opacity="0.4"/><circle cx="288" cy="238" r="0.6" fill="#e8f0ff" opacity="0.6"/><circle cx="445" cy="84" r="0.6" fill="#e8f0ff" opacity="0.4"/><circle cx="272" cy="402" r="1.0" fill="#e8f0ff" opacity="0.6"/><circle cx="308" cy="458" r="1.1" fill="#e8f0ff" opacity="0.6"/><circle cx="111" cy="249" r="1.0" fill="#e8f0ff" opacity="0.5"/><circle cx="327" cy="121" r="0.9" fill="#e8f0ff" opacity="0.5"/><circle cx="400" cy="496" r="0.6" fill="#e8f0ff" opacity="0.7"/><circle cx="323" cy="218" r="0.8" fill="#e8f0ff" opacity="0.5"/><circle cx="343" cy="216" r="0.7" fill="#e8f0ff" opacity="0.7"/><circle cx="379" cy="96" r="1.0" fill="#e8f0ff" opacity="0.6"/><circle cx="269" cy="473" r="1.0" fill="#e8f0ff" opacity="0.4"/><circle cx="360" cy="251" r="1.2" fill="#e8f0ff" opacity="0.3"/><circle cx="245" cy="303" r="1.2" fill="#e8f0ff" opacity="0.6"/><circle cx="187" cy="333" r="0.8" fill="#e8f0ff" opacity="0.3"/><circle cx="199" cy="136" r="0.8" fill="#e8f0ff" opacity="0.4"/><circle cx="358" cy="312" r="0.5" fill="#e8f0ff" opacity="0.3"/><circle cx="244" cy="416" r="0.6" fill="#e8f0ff" opacity="0.6"/><circle cx="292" cy="222" r="0.6" fill="#e8f0ff" opacity="0.3"/><circle cx="420" cy="296" r="0.6" fill="#e8f0ff" opacity="0.6"/><circle cx="446" cy="280" r="0.7" fill="#e8f0ff" opacity="0.4"/><circle cx="329" cy="418" r="0.6" fill="#e8f0ff" opacity="0.6"/><circle cx="425" cy="50" r="0.6" fill="#e8f0ff" opacity="0.7"/><circle cx="393" cy="395" r="0.8" fill="#e8f0ff" opacity="0.5"/><circle cx="463" cy="320" r="0.5" fill="#e8f0ff" opacity="0.3"/><circle cx="494" cy="266" r="1.0" fill="#e8f0ff" opacity="0.4"/><circle cx="436" cy="148" r="0.9" fill="#e8f0ff" opacity="0.4"/><circle cx="270" cy="298" r="0.6" fill="#e8f0ff" opacity="0.5"/><circle cx="380" cy="197" r="1.2" fill="#e8f0ff" opacity="0.4"/><circle cx="538" cy="306" r="0.8" fill="#e8f0ff" opacity="0.5"/><circle cx="297" cy="271" r="0.8" fill="#e8f0ff" opacity="0.4"/><circle cx="270" cy="62" r="0.7" fill="#e8f0ff" opacity="0.6"/><circle cx="303" cy="216" r="0.6" fill="#e8f0ff" opacity="0.8"/><circle cx="263" cy="253" r="0.8" fill="#e8f0ff" opacity="0.5"/><circle cx="108" cy="479" r="1.0" fill="#e8f0ff" opacity="0.7"/><circle cx="222" cy="446" r="0.8" fill="#e8f0ff" opacity="0.3"/><circle cx="160" cy="366" r="0.6" fill="#e8f0ff" opacity="0.4"/><circle cx="270" cy="436" r="0.9" fill="#e8f0ff" opacity="0.7"/><circle cx="368" cy="462" r="1.1" fill="#e8f0ff" opacity="0.7"/><circle cx="75" cy="363" r="1.1" fill="#e8f0ff" opacity="0.4"/><circle cx="265" cy="267" r="0.8" fill="#e8f0ff" opacity="0.4"/><circle cx="505" cy="129" r="1.1" fill="#e8f0ff" opacity="0.5"/><circle cx="306" cy="476" r="0.7" fill="#e8f0ff" opacity="0.6"/><circle cx="230" cy="256" r="1.2" fill="#e8f0ff" opacity="0.7"/><circle cx="543" cy="258" r="1.1" fill="#e8f0ff" opacity="0.3"/><circle cx="83" cy="337" r="1.0" fill="#e8f0ff" opacity="0.4"/><circle cx="285" cy="432" r="0.9" fill="#e8f0ff" opacity="0.6"/><circle cx="306" cy="465" r="0.7" fill="#e8f0ff" opacity="0.8"/><circle cx="381" cy="448" r="1.1" fill="#e8f0ff" opacity="0.7"/><circle cx="314" cy="64" r="1.2" fill="#e8f0ff" opacity="0.8"/><circle cx="295" cy="561" r="0.8" fill="#e8f0ff" opacity="0.6"/><circle cx="157" cy="116" r="1.0" fill="#e8f0ff" opacity="0.4"/><circle cx="180" cy="453" r="1.2" fill="#e8f0ff" opacity="0.6"/><circle cx="145" cy="365" r="0.5" fill="#e8f0ff" opacity="0.5"/><circle cx="410" cy="493" r="0.8" fill="#e8f0ff" opacity="0.4"/><circle cx="200" cy="244" r="0.7" fill="#e8f0ff" opacity="0.6"/><circle cx="482" cy="501" r="0.6" fill="#e8f0ff" opacity="0.6"/><circle cx="531" cy="205" r="0.7" fill="#e8f0ff" opacity="0.4"/><circle cx="140" cy="190" r="0.5" fill="#e8f0ff" opacity="0.7"/><circle cx="102" cy="451" r="1.2" fill="#e8f0ff" opacity="0.4"/><circle cx="249" cy="270" r="0.7" fill="#e8f0ff" opacity="0.5"/><circle cx="362" cy="282" r="1.1" fill="#e8f0ff" opacity="0.4"/><circle cx="226" cy="302" r="0.6" fill="#e8f0ff" opacity="0.6"/><circle cx="252" cy="197" r="0.6" fill="#e8f0ff" opacity="0.7"/><circle cx="83" cy="405" r="0.7" fill="#e8f0ff" opacity="0.6"/><circle cx="339" cy="514" r="1.0" fill="#e8f0ff" opacity="0.4"/><circle cx="412" cy="83" r="1.0" fill="#e8f0ff" opacity="0.3"/><circle cx="85" cy="194" r="0.6" fill="#e8f0ff" opacity="0.8"/><circle cx="309" cy="203" r="1.2" fill="#e8f0ff" opacity="0.6"/><circle cx="322" cy="433" r="0.5" fill="#e8f0ff" opacity="0.3"/><circle cx="371" cy="181" r="0.8" fill="#e8f0ff" opacity="0.6"/><circle cx="397" cy="407" r="0.9" fill="#e8f0ff" opacity="0.6"/><circle cx="322" cy="112" r="0.7" fill="#e8f0ff" opacity="0.7"/><circle cx="174" cy="337" r="0.8" fill="#e8f0ff" opacity="0.5"/><circle cx="176" cy="71" r="0.7" fill="#e8f0ff" opacity="0.8"/><circle cx="546" cy="373" r="0.6" fill="#e8f0ff" opacity="0.5"/><circle cx="503" cy="427" r="0.9" fill="#e8f0ff" opacity="0.7"/><circle cx="430" cy="449" r="0.6" fill="#e8f0ff" opacity="0.6"/><circle cx="235" cy="488" r="0.8" fill="#e8f0ff" opacity="0.5"/><circle cx="278" cy="228" r="0.7" fill="#e8f0ff" opacity="0.8"/><circle cx="328" cy="452" r="0.7" fill="#e8f0ff" opacity="0.6"/><circle cx="269" cy="339" r="1.2" fill="#e8f0ff" opacity="0.6"/><circle cx="283" cy="114" r="1.0" fill="#e8f0ff" opacity="0.8"/><circle cx="216" cy="428" r="1.1" fill="#e8f0ff" opacity="0.7"/><circle cx="250" cy="578" r="1.2" fill="#e8f0ff" opacity="0.6"/><circle cx="238" cy="235" r="0.9" fill="#e8f0ff" opacity="0.4"/><circle cx="278" cy="97" r="0.5" fill="#e8f0ff" opacity="0.7"/><circle cx="308" cy="315" r="0.6" fill="#e8f0ff" opacity="0.7"/><circle cx="487" cy="257" r="1.0" fill="#e8f0ff" opacity="0.7"/><circle cx="271" cy="390" r="0.6" fill="#e8f0ff" opacity="0.4"/><circle cx="417" cy="275" r="1.0" fill="#e8f0ff" opacity="0.4"/><circle cx="330" cy="441" r="0.7" fill="#e8f0ff" opacity="0.5"/><circle cx="76" cy="234" r="1.0" fill="#e8f0ff" opacity="0.4"/><circle cx="419" cy="430" r="0.6" fill="#e8f0ff" opacity="0.5"/><circle cx="388" cy="196" r="1.0" fill="#e8f0ff" opacity="0.6"/><circle cx="265" cy="448" r="1.0" fill="#e8f0ff" opacity="0.7"/><circle cx="352" cy="224" r="0.9" fill="#e8f0ff" opacity="0.4"/><circle cx="276" cy="307" r="1.2" fill="#e8f0ff" opacity="0.7"/><circle cx="110" cy="179" r="0.7" fill="#e8f0ff" opacity="0.8"/><circle cx="335" cy="326" r="0.8" fill="#e8f0ff" opacity="0.6"/><circle cx="353" cy="251" r="0.6" fill="#e8f0ff" opacity="0.3"/><circle cx="450" cy="170" r="0.7" fill="#e8f0ff" opacity="0.4"/><circle cx="187" cy="404" r="0.7" fill="#e8f0ff" opacity="0.4"/><circle cx="170" cy="93" r="0.7" fill="#e8f0ff" opacity="0.8"/><circle cx="412" cy="544" r="0.9" fill="#e8f0ff" opacity="0.7"/><circle cx="181" cy="201" r="1.1" fill="#e8f0ff" opacity="0.6"/><circle cx="287" cy="407" r="1.0" fill="#e8f0ff" opacity="0.4"/>
<g filter="url(#wblur)" opacity="0.12"><ellipse cx="329" cy="190" rx="75" ry="24" fill="#ffc830" opacity="1.0"/><ellipse cx="310" cy="170" rx="138" ry="40" fill="#d8582a" opacity="0.8"/><ellipse cx="200" cy="60" rx="88" ry="19" fill="#d05a2a" opacity="0.7"/><ellipse cx="345" cy="55" rx="100" ry="16" fill="#c84a28" opacity="0.6"/><ellipse cx="440" cy="100" rx="75" ry="14" fill="#c04a28" opacity="0.55"/><ellipse cx="507" cy="206" rx="88" ry="54" fill="#d8782e" opacity="0.85"/><ellipse cx="540" cy="240" rx="50" ry="40" fill="#e0a030" opacity="0.6"/><ellipse cx="310" cy="250" rx="56" ry="47" fill="#b8442e" opacity="0.8"/><ellipse cx="439" cy="311" rx="56" ry="47" fill="#b8442e" opacity="0.75"/><ellipse cx="237" cy="322" rx="62" ry="30" fill="#e0902a" opacity="0.9"/><ellipse cx="130" cy="380" rx="88" ry="30" fill="#e09a2a" opacity="0.9"/><ellipse cx="80" cy="270" rx="44" ry="40" fill="#c8502a" opacity="0.6"/><ellipse cx="416" cy="371" rx="69" ry="24" fill="#ffd034" opacity="1.0"/><ellipse cx="484" cy="426" rx="94" ry="30" fill="#d8602a" opacity="0.8"/><ellipse cx="300" cy="495" rx="138" ry="22" fill="#d05a28" opacity="0.7"/><ellipse cx="200" cy="440" rx="75" ry="19" fill="#c84a28" opacity="0.6"/><ellipse cx="390" cy="550" rx="100" ry="14" fill="#c84a28" opacity="0.55"/><ellipse cx="560" cy="350" rx="38" ry="54" fill="#c85a2a" opacity="0.55"/><ellipse cx="50" cy="220" rx="25" ry="54" fill="#d0602a" opacity="0.6"/><ellipse cx="160" cy="170" rx="50" ry="19" fill="#d0602a" opacity="0.6"/><ellipse cx="580" cy="450" rx="31" ry="40" fill="#c05028" opacity="0.5"/><ellipse cx="340" cy="585" rx="150" ry="14" fill="#d04a28" opacity="0.6"/><ellipse cx="470" cy="555" rx="75" ry="14" fill="#c84a28" opacity="0.5"/></g>
<g filter="url(#wtex)"><ellipse cx="329" cy="190" rx="75" ry="24" fill="#ffc830" opacity="1.0"/><ellipse cx="310" cy="170" rx="138" ry="40" fill="#d8582a" opacity="0.8"/><ellipse cx="200" cy="60" rx="88" ry="19" fill="#d05a2a" opacity="0.7"/><ellipse cx="345" cy="55" rx="100" ry="16" fill="#c84a28" opacity="0.6"/><ellipse cx="440" cy="100" rx="75" ry="14" fill="#c04a28" opacity="0.55"/><ellipse cx="507" cy="206" rx="88" ry="54" fill="#d8782e" opacity="0.85"/><ellipse cx="540" cy="240" rx="50" ry="40" fill="#e0a030" opacity="0.6"/><ellipse cx="310" cy="250" rx="56" ry="47" fill="#b8442e" opacity="0.8"/><ellipse cx="439" cy="311" rx="56" ry="47" fill="#b8442e" opacity="0.75"/><ellipse cx="237" cy="322" rx="62" ry="30" fill="#e0902a" opacity="0.9"/><ellipse cx="130" cy="380" rx="88" ry="30" fill="#e09a2a" opacity="0.9"/><ellipse cx="80" cy="270" rx="44" ry="40" fill="#c8502a" opacity="0.6"/><ellipse cx="416" cy="371" rx="69" ry="24" fill="#ffd034" opacity="1.0"/><ellipse cx="484" cy="426" rx="94" ry="30" fill="#d8602a" opacity="0.8"/><ellipse cx="300" cy="495" rx="138" ry="22" fill="#d05a28" opacity="0.7"/><ellipse cx="200" cy="440" rx="75" ry="19" fill="#c84a28" opacity="0.6"/><ellipse cx="390" cy="550" rx="100" ry="14" fill="#c84a28" opacity="0.55"/><ellipse cx="560" cy="350" rx="38" ry="54" fill="#c85a2a" opacity="0.55"/><ellipse cx="50" cy="220" rx="25" ry="54" fill="#d0602a" opacity="0.6"/><ellipse cx="160" cy="170" rx="50" ry="19" fill="#d0602a" opacity="0.6"/><ellipse cx="580" cy="450" rx="31" ry="40" fill="#c05028" opacity="0.5"/><ellipse cx="340" cy="585" rx="150" ry="14" fill="#d04a28" opacity="0.6"/><ellipse cx="470" cy="555" rx="75" ry="14" fill="#c84a28" opacity="0.5"/></g>
<ellipse cx="454" cy="310" rx="9" ry="2.2" fill="#f07a2a" opacity="0.60" transform="rotate(-6 454 310)"/><ellipse cx="457" cy="588" rx="21" ry="1.4" fill="#a02c22" opacity="0.63" transform="rotate(-33 457 588)"/><ellipse cx="376" cy="357" rx="20" ry="2.2" fill="#d8482a" opacity="0.83" transform="rotate(-6 376 357)"/><ellipse cx="574" cy="377" rx="14" ry="1.2" fill="#f07a2a" opacity="0.57" transform="rotate(-5 574 377)"/><ellipse cx="318" cy="269" rx="8" ry="1.9" fill="#f07a2a" opacity="0.81" transform="rotate(1 318 269)"/><ellipse cx="562" cy="342" rx="25" ry="2.2" fill="#f39a30" opacity="0.68" transform="rotate(-6 562 342)"/><ellipse cx="363" cy="83" rx="19" ry="2.2" fill="#a02c22" opacity="0.64" transform="rotate(1 363 83)"/><ellipse cx="385" cy="431" rx="14" ry="2.1" fill="#c03a26" opacity="0.79" transform="rotate(-6 385 431)"/><ellipse cx="116" cy="315" rx="23" ry="2.7" fill="#a02c22" opacity="0.57" transform="rotate(4 116 315)"/><ellipse cx="257" cy="134" rx="20" ry="2.7" fill="#a02c22" opacity="0.75" transform="rotate(-6 257 134)"/><ellipse cx="287" cy="259" rx="10" ry="1.9" fill="#f07a2a" opacity="0.68" transform="rotate(-4 287 259)"/><ellipse cx="338" cy="498" rx="15" ry="1.7" fill="#f39a30" opacity="0.77" transform="rotate(1 338 498)"/><ellipse cx="595" cy="328" rx="23" ry="1.4" fill="#c03a26" opacity="0.64" transform="rotate(2 595 328)"/><ellipse cx="157" cy="174" rx="23" ry="2.5" fill="#d8482a" opacity="0.55" transform="rotate(-22 157 174)"/><ellipse cx="290" cy="434" rx="10" ry="2.0" fill="#a02c22" opacity="0.63" transform="rotate(8 290 434)"/><ellipse cx="484" cy="285" rx="18" ry="1.8" fill="#d04a28" opacity="0.80" transform="rotate(6 484 285)"/><ellipse cx="304" cy="150" rx="12" ry="1.7" fill="#e85d24" opacity="0.61" transform="rotate(-9 304 150)"/><ellipse cx="589" cy="304" rx="15" ry="1.5" fill="#d04a28" opacity="0.78" transform="rotate(3 589 304)"/><ellipse cx="517" cy="146" rx="19" ry="1.9" fill="#a02c22" opacity="0.60" transform="rotate(27 517 146)"/><ellipse cx="311" cy="221" rx="22" ry="2.8" fill="#f39a30" opacity="0.74" transform="rotate(-8 311 221)"/><ellipse cx="162" cy="245" rx="25" ry="2.3" fill="#e06a2a" opacity="0.77" transform="rotate(-8 162 245)"/><ellipse cx="81" cy="496" rx="7" ry="2.4" fill="#e06a2a" opacity="0.74" transform="rotate(22 81 496)"/><ellipse cx="556" cy="461" rx="14" ry="2.3" fill="#a02c22" opacity="0.81" transform="rotate(-23 556 461)"/><ellipse cx="569" cy="351" rx="9" ry="1.5" fill="#d8482a" opacity="0.69" transform="rotate(-6 569 351)"/><ellipse cx="389" cy="208" rx="25" ry="2.5" fill="#e85d24" opacity="0.68" transform="rotate(5 389 208)"/><ellipse cx="453" cy="337" rx="17" ry="1.4" fill="#e85d24" opacity="0.70" transform="rotate(-1 453 337)"/><ellipse cx="515" cy="210" rx="17" ry="1.7" fill="#d8482a" opacity="0.63" transform="rotate(14 515 210)"/><ellipse cx="66" cy="294" rx="11" ry="2.6" fill="#e85d24" opacity="0.58" transform="rotate(1 66 294)"/><ellipse cx="243" cy="198" rx="17" ry="1.3" fill="#e85d24" opacity="0.55" transform="rotate(-3 243 198)"/><ellipse cx="470" cy="364" rx="15" ry="2.4" fill="#e85d24" opacity="0.55" transform="rotate(-11 470 364)"/><ellipse cx="95" cy="440" rx="18" ry="2.2" fill="#c03a26" opacity="0.59" transform="rotate(11 95 440)"/><ellipse cx="293" cy="591" rx="19" ry="2.2" fill="#d8482a" opacity="0.80" transform="rotate(-4 293 591)"/><ellipse cx="349" cy="183" rx="24" ry="2.2" fill="#f7b52e" opacity="0.68" transform="rotate(6 349 183)"/><ellipse cx="411" cy="358" rx="7" ry="2.0" fill="#e85d24" opacity="0.61" transform="rotate(4 411 358)"/><ellipse cx="356" cy="153" rx="20" ry="1.6" fill="#f39a30" opacity="0.55" transform="rotate(10 356 153)"/><ellipse cx="246" cy="302" rx="11" ry="1.7" fill="#f07a2a" opacity="0.82" transform="rotate(6 246 302)"/><ellipse cx="402" cy="443" rx="8" ry="1.8" fill="#c03a26" opacity="0.81" transform="rotate(-11 402 443)"/><ellipse cx="483" cy="187" rx="12" ry="2.7" fill="#e85d24" opacity="0.66" transform="rotate(17 483 187)"/><ellipse cx="249" cy="210" rx="15" ry="2.6" fill="#e85d24" opacity="0.81" transform="rotate(-11 249 210)"/><ellipse cx="442" cy="400" rx="20" ry="2.3" fill="#e85d24" opacity="0.63" transform="rotate(-9 442 400)"/><ellipse cx="133" cy="393" rx="15" ry="2.5" fill="#f07a2a" opacity="0.71" transform="rotate(9 133 393)"/><ellipse cx="279" cy="380" rx="24" ry="1.5" fill="#d04a28" opacity="0.52" transform="rotate(-4 279 380)"/><ellipse cx="363" cy="583" rx="12" ry="1.7" fill="#f39a30" opacity="0.79" transform="rotate(-4 363 583)"/><ellipse cx="135" cy="389" rx="7" ry="1.6" fill="#e85d24" opacity="0.50" transform="rotate(4 135 389)"/><ellipse cx="319" cy="210" rx="20" ry="1.6" fill="#f07a2a" opacity="0.79" transform="rotate(-5 319 210)"/><ellipse cx="302" cy="302" rx="9" ry="1.3" fill="#e06a2a" opacity="0.81" transform="rotate(0 302 302)"/><ellipse cx="441" cy="204" rx="14" ry="1.9" fill="#e85d24" opacity="0.63" transform="rotate(15 441 204)"/><ellipse cx="194" cy="333" rx="13" ry="1.1" fill="#e85d24" opacity="0.82" transform="rotate(0 194 333)"/><ellipse cx="430" cy="376" rx="15" ry="1.1" fill="#d8482a" opacity="0.51" transform="rotate(-0 430 376)"/><ellipse cx="420" cy="178" rx="8" ry="2.7" fill="#f07a2a" opacity="0.57" transform="rotate(7 420 178)"/><ellipse cx="182" cy="161" rx="18" ry="1.6" fill="#f39a30" opacity="0.52" transform="rotate(-21 182 161)"/><ellipse cx="307" cy="51" rx="16" ry="2.5" fill="#d8482a" opacity="0.77" transform="rotate(0 307 51)"/><ellipse cx="563" cy="402" rx="9" ry="1.3" fill="#d8482a" opacity="0.64" transform="rotate(-13 563 402)"/><ellipse cx="219" cy="66" rx="26" ry="1.7" fill="#e85d24" opacity="0.80" transform="rotate(-23 219 66)"/><ellipse cx="163" cy="389" rx="11" ry="2.3" fill="#e85d24" opacity="0.82" transform="rotate(11 163 389)"/><ellipse cx="73" cy="282" rx="7" ry="1.1" fill="#d8482a" opacity="0.77" transform="rotate(-13 73 282)"/><ellipse cx="314" cy="412" rx="7" ry="1.7" fill="#d04a28" opacity="0.75" transform="rotate(7 314 412)"/><ellipse cx="406" cy="119" rx="14" ry="1.3" fill="#e06a2a" opacity="0.81" transform="rotate(14 406 119)"/><ellipse cx="459" cy="97" rx="20" ry="2.1" fill="#f39a30" opacity="0.64" transform="rotate(26 459 97)"/><ellipse cx="442" cy="376" rx="20" ry="2.4" fill="#e85d24" opacity="0.57" transform="rotate(-3 442 376)"/><ellipse cx="489" cy="225" rx="11" ry="1.2" fill="#f07a2a" opacity="0.72" transform="rotate(17 489 225)"/><ellipse cx="393" cy="139" rx="8" ry="1.3" fill="#e06a2a" opacity="0.67" transform="rotate(4 393 139)"/><ellipse cx="338" cy="108" rx="16" ry="1.1" fill="#d04a28" opacity="0.75" transform="rotate(5 338 108)"/><ellipse cx="400" cy="386" rx="25" ry="2.5" fill="#f07a2a" opacity="0.64" transform="rotate(-4 400 386)"/><ellipse cx="560" cy="268" rx="26" ry="2.3" fill="#f07a2a" opacity="0.65" transform="rotate(7 560 268)"/><ellipse cx="505" cy="439" rx="16" ry="1.1" fill="#f07a2a" opacity="0.74" transform="rotate(-17 505 439)"/><ellipse cx="567" cy="234" rx="14" ry="1.8" fill="#f07a2a" opacity="0.63" transform="rotate(9 567 234)"/><ellipse cx="556" cy="292" rx="24" ry="1.5" fill="#c03a26" opacity="0.54" transform="rotate(1 556 292)"/><ellipse cx="121" cy="356" rx="12" ry="1.6" fill="#d8482a" opacity="0.66" transform="rotate(13 121 356)"/><ellipse cx="574" cy="219" rx="16" ry="1.1" fill="#f07a2a" opacity="0.61" transform="rotate(16 574 219)"/><ellipse cx="566" cy="233" rx="23" ry="1.7" fill="#d8482a" opacity="0.50" transform="rotate(12 566 233)"/><ellipse cx="371" cy="242" rx="19" ry="1.5" fill="#d04a28" opacity="0.69" transform="rotate(6 371 242)"/><ellipse cx="242" cy="351" rx="23" ry="2.5" fill="#a02c22" opacity="0.67" transform="rotate(5 242 351)"/><ellipse cx="434" cy="230" rx="13" ry="2.1" fill="#a02c22" opacity="0.52" transform="rotate(4 434 230)"/><ellipse cx="222" cy="435" rx="15" ry="2.8" fill="#d8482a" opacity="0.56" transform="rotate(4 222 435)"/><ellipse cx="269" cy="479" rx="6" ry="1.9" fill="#f39a30" opacity="0.51" transform="rotate(-1 269 479)"/><ellipse cx="495" cy="326" rx="8" ry="1.5" fill="#c03a26" opacity="0.61" transform="rotate(-9 495 326)"/><ellipse cx="378" cy="372" rx="19" ry="1.1" fill="#e85d24" opacity="0.80" transform="rotate(5 378 372)"/><ellipse cx="344" cy="596" rx="15" ry="2.6" fill="#e06a2a" opacity="0.66" transform="rotate(0 344 596)"/><ellipse cx="479" cy="186" rx="18" ry="1.2" fill="#d8482a" opacity="0.62" transform="rotate(18 479 186)"/><ellipse cx="195" cy="218" rx="13" ry="1.8" fill="#e06a2a" opacity="0.70" transform="rotate(-2 195 218)"/><ellipse cx="66" cy="218" rx="22" ry="1.9" fill="#e85d24" opacity="0.62" transform="rotate(-23 66 218)"/><ellipse cx="582" cy="457" rx="10" ry="1.8" fill="#e85d24" opacity="0.55" transform="rotate(-22 582 457)"/><ellipse cx="600" cy="309" rx="23" ry="1.2" fill="#a02c22" opacity="0.80" transform="rotate(8 600 309)"/><ellipse cx="453" cy="97" rx="21" ry="2.7" fill="#d8482a" opacity="0.67" transform="rotate(14 453 97)"/><ellipse cx="571" cy="423" rx="14" ry="2.2" fill="#d8482a" opacity="0.82" transform="rotate(-15 571 423)"/><ellipse cx="196" cy="365" rx="11" ry="2.3" fill="#d04a28" opacity="0.80" transform="rotate(7 196 365)"/><ellipse cx="495" cy="207" rx="21" ry="1.5" fill="#d8482a" opacity="0.78" transform="rotate(9 495 207)"/><ellipse cx="165" cy="70" rx="13" ry="1.4" fill="#d8482a" opacity="0.85" transform="rotate(-18 165 70)"/><ellipse cx="388" cy="197" rx="13" ry="2.7" fill="#f07a2a" opacity="0.70" transform="rotate(2 388 197)"/><ellipse cx="412" cy="501" rx="9" ry="1.4" fill="#c03a26" opacity="0.66" transform="rotate(-17 412 501)"/><ellipse cx="73" cy="210" rx="15" ry="2.3" fill="#e06a2a" opacity="0.66" transform="rotate(-10 73 210)"/><ellipse cx="275" cy="273" rx="13" ry="1.8" fill="#e85d24" opacity="0.73" transform="rotate(2 275 273)"/><ellipse cx="60" cy="298" rx="22" ry="1.5" fill="#d04a28" opacity="0.74" transform="rotate(-7 60 298)"/><ellipse cx="368" cy="483" rx="21" ry="1.8" fill="#d04a28" opacity="0.80" transform="rotate(-13 368 483)"/><ellipse cx="421" cy="277" rx="14" ry="1.0" fill="#f39a30" opacity="0.66" transform="rotate(1 421 277)"/><ellipse cx="435" cy="127" rx="16" ry="1.3" fill="#d04a28" opacity="0.65" transform="rotate(17 435 127)"/><ellipse cx="293" cy="302" rx="9" ry="1.3" fill="#e06a2a" opacity="0.84" transform="rotate(-1 293 302)"/><ellipse cx="348" cy="190" rx="16" ry="2.1" fill="#f39a30" opacity="0.58" transform="rotate(-4 348 190)"/>
</g></svg><div class="r" style="left:1645px;top:206px;width:4px;height:1169px;background:#2e2e2e;"></div><div class="r" style="left:1649px;top:206px;width:1px;height:1169px;background:#1f1f1f;"></div><div class="r" style="left:1650px;top:206px;width:510px;height:35px;background:#353535;"></div><div class="r" style="left:1650px;top:241px;width:510px;height:29px;background:#242424;border:1px solid #1e1e1e;box-sizing:border-box;"></div><div class="r" style="left:1650px;top:270px;width:510px;height:4px;background:#353535;"></div><div class="r" style="left:1650px;top:274px;width:510px;height:398px;background:#2e2e2e;"></div><div class="r" style="left:1650px;top:672px;width:510px;height:3px;background:#353535;"></div><div class="r" style="left:1650px;top:675px;width:510px;height:37px;background:#353535;"></div><div class="r" style="left:1650px;top:712px;width:510px;height:29px;background:#242424;border:1px solid #1e1e1e;box-sizing:border-box;"></div><div class="r" style="left:1650px;top:741px;width:510px;height:5px;background:#353535;"></div><div class="r" style="left:1650px;top:746px;width:510px;height:629px;background:#2e2e2e;"></div><div class="r" style="left:0px;top:1032px;width:1645px;height:1px;background:#1c1c1c;"></div><div class="r" style="left:0px;top:1033px;width:1645px;height:3px;background:#3c3c3c;"></div><div class="r" style="left:0px;top:1036px;width:1645px;height:35px;background:#353535;"></div><div class="r" style="left:0px;top:1071px;width:1645px;height:1px;background:#1f1f1f;"></div><div class="r" style="left:0px;top:1072px;width:1645px;height:303px;background:#2b2b2b;"></div><div class="r" style="left:0px;top:1072px;width:1px;height:303px;background:#3c3c3c;"></div><div class="r" style="left:1644px;top:1072px;width:1px;height:303px;background:#1e1e1e;"></div><div class="r" style="left:0px;top:1374px;width:1645px;height:1px;background:#1e1e1e;"></div><div class="r" style="left:1650px;top:1374px;width:510px;height:1px;background:#1e1e1e;"></div><div class="r" style="left:0px;top:1375px;width:2160px;height:65px;background:#2e2e2e;"></div><div class="r" style="left:14px;top:1377px;width:2144px;height:29px;background:#242424;border:1px solid #2aa6ee;box-sizing:border-box;"></div><div class="r" style="left:0px;top:1437px;width:2160px;height:1px;background:#1e1e1e;"></div><div class="r" style="left:0px;top:1438px;width:2160px;height:2px;background:#d8d8d8;"></div><svg class="r" style="left:2px;top:4px;" width="26" height="26" viewBox="0 0 26 26"><g transform="rotate(15 13 13)"><rect x="3" y="3" width="20" height="20" fill="#14a0f0"/><path d="M3.5 3.5 L22.5 22.5" stroke="#0e5f6b" stroke-width="1.2"/><rect x="11.5" y="11.5" width="3" height="3" fill="#0e5f6b"/></g></svg><svg class="r" style="left:1975px;top:10px;" width="18" height="14" viewBox="0 0 18 14"><rect x="1" y="6" width="15" height="1.2" fill="#ffffff"/></svg><svg class="r" style="left:2044px;top:8px;" width="18" height="17" viewBox="0 0 18 17"><rect x="1.5" y="4.5" width="11" height="11" fill="none" stroke="#fff" stroke-width="1.1"/><path d="M4.5 4.5 V1.5 H15.5 V12.5 H12.5" fill="none" stroke="#fff" stroke-width="1.1"/></svg><svg class="r" style="left:2115px;top:8px;" width="17" height="17" viewBox="0 0 17 17"><path d="M1 1 L16 16 M16 1 L1 16" stroke="#fff" stroke-width="1.2"/></svg><svg class="r" style="left:82px;top:44px;" width="15" height="18" viewBox="0 0 15 18"><path d="M1.5 1 H9.5 L13.5 5 V16.5 H1.5 Z" fill="#f4f6fa" stroke="#c8d0e0" stroke-width="1"/><path d="M9.5 1 V5 H13.5" fill="#aab4c8"/></svg><svg class="r" style="left:103px;top:45px;" width="18" height="16" viewBox="0 0 18 16"><path d="M15.5 14 C15.5 8 12 6 6 6" fill="none" stroke="#6ea3f5" stroke-width="2.6"/><path d="M1.5 6 L7.5 1 V11 Z" fill="#6ea3f5"/></svg><svg class="r" style="left:126px;top:45px;" width="18" height="16" viewBox="0 0 18 16"><path d="M2.5 14 C2.5 8 6 6 12 6" fill="none" stroke="#505050" stroke-width="2.6"/><path d="M16.5 6 L10.5 1 V11 Z" fill="#505050"/></svg><svg class="r" style="left:149px;top:44px;" width="18" height="18" viewBox="0 0 18 18"><path d="M1 1 L17 9 L1 17 Z" fill="#6ea3f5"/><rect x="7" y="2" width="5" height="14" fill="#dfe8f8"/><rect x="4" y="6" width="11" height="6" fill="#dfe8f8"/></svg><div class="r" style="left:174px;top:46px;width:14px;height:14px;background:#4a4a4a;"></div><svg class="r" style="left:195px;top:48px;" width="9" height="10" viewBox="0 0 9 10"><rect x="1" y="1" width="6" height="1" fill="#aaa"/><path d="M1 4 H7 L4 8 Z" fill="#aaa"/></svg><svg class="r" style="left:1862px;top:48px;" width="11" height="8" viewBox="0 0 11 8"><path d="M1 6 L5.5 1.5 L10 6" fill="none" stroke="#bbb" stroke-width="1.8"/></svg><svg class="r" style="left:1995px;top:45px;" width="16" height="16" viewBox="0 0 16 16"><circle cx="8" cy="8" r="7" fill="#1e4fb0" stroke="#e0e8ff" stroke-width="1"/><text x="8" y="12.3" font-family="Liberation Sans" font-weight="bold" font-size="11" fill="#fff" text-anchor="middle">?</text></svg><svg class="r" style="left:2024px;top:44px;" width="18" height="18" viewBox="0 0 18 18"><circle cx="13.5" cy="3.5" r="2.6" fill="#6ea3f5"/><circle cx="4" cy="9" r="2.6" fill="#6ea3f5"/><circle cx="13.5" cy="14.5" r="2.6" fill="#6ea3f5"/><path d="M13.5 3.5 L4 9 L13.5 14.5" fill="none" stroke="#6ea3f5" stroke-width="1.8"/></svg><svg class="r" style="left:2145px;top:50px;" width="9" height="6" viewBox="0 0 9 6"><path d="M0.5 0.5 H8.5 L4.5 5 Z" fill="#aaa"/></svg><div class="r" style="left:9px;top:75px;width:71px;height:97px;background:#1c1c1c;border:1px solid #262626;box-sizing:border-box;"></div><div class="r" style="left:91px;top:75px;width:86px;height:97px;background:#1c1c1c;border:1px solid #262626;box-sizing:border-box;"></div><div class="r" style="left:347px;top:108px;width:100px;height:31px;background:#1c1c1c;"></div><div class="r" style="left:510px;top:74px;width:154px;height:32px;background:#1c1c1c;"></div><div class="r" style="left:1023px;top:108px;width:148px;height:31px;background:#1c1c1c;"></div><div class="r" style="left:1269px;top:75px;width:60px;height:97px;background:#1c1c1c;"></div><div class="r" style="left:1189px;top:72px;width:1px;height:129px;background:#242424;"></div><div class="r" style="left:1458px;top:72px;width:1px;height:129px;background:#242424;"></div><div class="r" style="left:1787px;top:72px;width:1px;height:129px;background:#242424;"></div><div class="r" style="left:1998px;top:72px;width:1px;height:129px;background:#242424;"></div><svg class="r" style="left:30px;top:79px;" width="28" height="29" viewBox="0 0 28 29"><rect x="0" y="0" width="6" height="6" fill="#2bbf5a"/><path d="M7.5 3 H15 M13 3 V25" stroke="#aaa" stroke-width="2" fill="none"/><rect x="20" y="0" width="7" height="6" fill="#6ea3f5"/><rect x="20" y="11" width="7" height="6" fill="#6ea3f5"/><rect x="20" y="22" width="7" height="6" fill="#6ea3f5"/></svg><svg class="r" style="left:193px;top:76px;" width="28" height="29" viewBox="0 0 28 29"><rect x="0" y="0" width="6" height="6" fill="#2bbf5a"/><path d="M7.5 3 H15 M13 3 V25" stroke="#aaa" stroke-width="2" fill="none"/><rect x="20" y="0" width="7" height="6" fill="#6ea3f5"/><rect x="20" y="11" width="7" height="6" fill="#6ea3f5"/><rect x="20" y="22" width="7" height="6" fill="#6ea3f5"/></svg><svg class="r" style="left:118px;top:76px;" width="33" height="33" viewBox="0 0 33 33"><circle cx="3" cy="5" r="2.2" fill="#aaa"/><circle cx="3" cy="13" r="2.2" fill="#aaa"/><circle cx="3" cy="21" r="2.2" fill="#aaa"/><circle cx="3" cy="29" r="2.2" fill="#aaa"/><rect x="7" y="3.5" width="10" height="3.5" rx="1.7" fill="#aaa"/><rect x="7" y="11.5" width="14" height="3.5" rx="1.7" fill="#aaa"/><rect x="7" y="19.5" width="22" height="3.5" rx="1.7" fill="#aaa"/><rect x="7" y="27.5" width="22" height="3.5" rx="1.7" fill="#aaa"/><circle cx="25" cy="7" r="7" fill="#6a97e0"/><path d="M25.5 4 L24 11" stroke="#fff" stroke-width="2"/><circle cx="26" cy="2.6" r="1.1" fill="#fff"/></svg><svg class="r" style="left:190px;top:108px;" width="34" height="30" viewBox="0 0 34 30"><path d="M1 10 L20 16 L33 10 L33 22 L20 29 L1 22 Z" fill="#6e9ee0"/><path d="M20 16 L33 10 L33 22 L20 29 Z" fill="#4d7cc4"/><path d="M1 10 L6 5 L24 9 L33 10 L20 16 Z" fill="#9cbdf0"/><path d="M8 8 L8 1 M6 2 L10 2" stroke="#888" stroke-width="2.2"/><rect x="17" y="5" width="3" height="9" fill="#f0b020"/></svg><svg class="r" style="left:191px;top:141px;" width="32" height="28" viewBox="0 0 32 28"><path d="M1 17 L18 26 L31 17 L31 13 L14 4 L1 13 Z" fill="#e8eef8"/><path d="M1 12 L14 3 L31 12 L18 21 Z" fill="#d86a6a"/><path d="M1 12 L18 21 L18 26 L1 17 Z" fill="#c8d8f0" stroke="#d86a6a" stroke-width="1"/><path d="M18 21 L31 12 L31 17 L18 26 Z" fill="#b8cce8"/><path d="M12 9 L17 11" stroke="#fff" stroke-width="1.6"/></svg><svg class="r" style="left:350px;top:76px;" width="32" height="30" viewBox="0 0 32 30"><rect x="9" y="0" width="12" height="2" fill="#6ea3f5"/><rect x="5" y="4" width="20" height="2" fill="#6ea3f5"/><rect x="1" y="9" width="30" height="20" fill="#2a2a2a" stroke="#6ea3f5" stroke-width="2"/><path d="M6 12 V26" stroke="#888" stroke-width="3" stroke-dasharray="2 1"/><path d="M16 12 L23 19 L16 26" fill="none" stroke="#777" stroke-width="1.8"/></svg><svg class="r" style="left:350px;top:108px;" width="32" height="31" viewBox="0 0 32 31"><rect x="0.5" y="0.5" width="31" height="30" rx="2" fill="#ffffff" stroke="#b8b8b8" stroke-width="1.5"/><rect x="1" y="1" width="30" height="6" rx="1" fill="#6ea3f5"/><path d="M25 2.2 L29 5.8 M29 2.2 L25 5.8" stroke="#e06666" stroke-width="1.1"/><path d="M6 13 L13 18.5 L6 24" fill="none" stroke="#666" stroke-width="1.8"/><rect x="16" y="23" width="9" height="2" fill="#666"/></svg><svg class="r" style="left:350px;top:141px;" width="32" height="31" viewBox="0 0 32 31"><rect x="0.5" y="0.5" width="31" height="30" rx="2" fill="#ffffff" stroke="#b8b8b8" stroke-width="1.5"/><rect x="1" y="1" width="30" height="6" rx="1" fill="#6ea3f5"/><path d="M25 2.2 L29 5.8 M29 2.2 L25 5.8" stroke="#e06666" stroke-width="1.1"/><path d="M6 13 L13 18.5 L6 24" fill="none" stroke="#666" stroke-width="1.8"/><rect x="16" y="23" width="9" height="2" fill="#666"/></svg><svg class="r" style="left:513px;top:75px;" width="32" height="31" viewBox="0 0 32 31"><rect x="0.5" y="0.5" width="31" height="30" rx="2" fill="#ffffff" stroke="#b8b8b8" stroke-width="1.5"/><rect x="1" y="1" width="30" height="6" rx="1" fill="#6ea3f5"/><path d="M25 2.2 L29 5.8 M29 2.2 L25 5.8" stroke="#e06666" stroke-width="1.1"/><path d="M6 13 L13 18.5 L6 24" fill="none" stroke="#666" stroke-width="1.8"/><rect x="16" y="23" width="9" height="2" fill="#666"/></svg><svg class="r" style="left:513px;top:107px;" width="33" height="33" viewBox="0 0 33 33"><rect x="1" y="1" width="23" height="23" fill="#2a2a2a" stroke="#6ea3f5" stroke-width="2"/><path d="M5 6 H19 M5 10 H17 M5 14 H19 M5 18 H15" stroke="#888" stroke-width="1.6"/><path d="M24 14 L30 17.5 L30 25 L24 28.5 L18 25 L18 17.5 Z" fill="#d96262"/></svg><svg class="r" style="left:513px;top:140px;" width="33" height="32" viewBox="0 0 33 32"><rect x="1" y="1" width="19" height="15" fill="#fff" stroke="#bbb"/><rect x="1" y="1" width="19" height="3" fill="#6ea3f5"/><rect x="7" y="8" width="19" height="14" fill="#fff" stroke="#bbb"/><rect x="7" y="8" width="19" height="3" fill="#6ea3f5"/><rect x="13" y="16" width="19" height="15" fill="#fff" stroke="#bbb"/><rect x="13" y="16" width="19" height="3" fill="#6ea3f5"/></svg><svg class="r" style="left:669px;top:75px;" width="32" height="31" viewBox="0 0 32 31"><rect x="0.5" y="0.5" width="31" height="30" rx="2" fill="#ffffff" stroke="#b8b8b8" stroke-width="1.5"/><rect x="1" y="1" width="30" height="6" rx="1" fill="#6ea3f5"/><path d="M25 2.2 L29 5.8 M29 2.2 L25 5.8" stroke="#e06666" stroke-width="1.1"/><circle cx="10.5" cy="20" r="4.5" fill="none" stroke="#777" stroke-width="2"/><circle cx="21.5" cy="20" r="4.5" fill="none" stroke="#777" stroke-width="2"/><path d="M7 17 L9.5 11 H13 L13.5 17 M25 17 L22.5 11 H19 L18.5 17" fill="#777"/><rect x="13" y="15" width="6" height="3" fill="#777"/></svg><svg class="r" style="left:669px;top:108px;" width="32" height="31" viewBox="0 0 32 31"><rect x="0.5" y="0.5" width="31" height="30" rx="2" fill="#ffffff" stroke="#b8b8b8" stroke-width="1.5"/><rect x="1" y="1" width="30" height="6" rx="1" fill="#6ea3f5"/><path d="M25 2.2 L29 5.8 M29 2.2 L25 5.8" stroke="#e06666" stroke-width="1.1"/><path d="M4 20 H11 L14 26 L17 11 L20 23 L22 20 H28" fill="none" stroke="#666" stroke-width="1.5"/></svg><svg class="r" style="left:669px;top:142px;" width="33" height="31" viewBox="0 0 33 31"><rect x="0" y="0" width="3" height="3" fill="#6ea3f5"/><rect x="0" y="8" width="3" height="3" fill="#6ea3f5"/><rect x="0" y="16" width="3" height="3" fill="#6ea3f5"/><rect x="0" y="24" width="3" height="3" fill="#6ea3f5"/><rect x="6" y="0" width="23" height="3" rx="1.5" fill="#aaa"/><rect x="6" y="8" width="23" height="3" rx="1.5" fill="#aaa"/><rect x="6" y="16" width="10" height="3" rx="1.5" fill="#aaa"/><rect x="6" y="24" width="10" height="3" rx="1.5" fill="#aaa"/><circle cx="23" cy="21" r="8.5" fill="#fff" stroke="#888" stroke-width="1.5"/><path d="M23 15 V21 H28" fill="none" stroke="#666" stroke-width="1.4"/></svg><svg class="r" style="left:832px;top:74px;" width="34" height="33" viewBox="0 0 34 33"><path d="M3 6 L16 1 L22 19 L9 25 Z" fill="#6ea3f5"/><path d="M3 6 C0 9 2 12 5 11" fill="#4d80d0"/><path d="M9 25 C6 27 7 30 10 29 L12 28" fill="#6ea3f5"/><circle cx="25" cy="24" r="8" fill="#fff" stroke="#888" stroke-width="1.6"/><path d="M23 28 L27 19" stroke="#d05050" stroke-width="2"/></svg><svg class="r" style="left:832px;top:111px;" width="34" height="25" viewBox="0 0 34 25"><path d="M3 12 L8 1 H13 L14 12 M31 12 L26 1 H21 L20 12" fill="#6ea3f5"/><circle cx="9" cy="17" r="7.5" fill="#6ea3f5"/><circle cx="25" cy="17" r="7.5" fill="#6ea3f5"/><circle cx="9" cy="17" r="4.2" fill="#6ea3f5" stroke="#fff" stroke-width="1.6"/><circle cx="25" cy="17" r="4.2" fill="#6ea3f5" stroke="#fff" stroke-width="1.6"/><rect x="13" y="11" width="8" height="4" fill="#6ea3f5"/></svg><svg class="r" style="left:834px;top:141px;" width="31" height="32" viewBox="0 0 31 32"><path d="M6 8 C10 1 22 1 26 8 M28 12 C30 20 26 26 20 29 M5 12 C3 20 6 25 11 28" fill="none" stroke="#999" stroke-width="1.6"/><circle cx="4.5" cy="6" r="2.8" fill="#2e2e2e" stroke="#999" stroke-width="1.5"/><circle cx="27" cy="6" r="2.8" fill="#2e2e2e" stroke="#999" stroke-width="1.5"/><circle cx="15" cy="28" r="2.8" fill="#2e2e2e" stroke="#999" stroke-width="1.5"/><rect x="9" y="10" width="13" height="13" rx="2" fill="#6ea3f5"/><path d="M12 13.5 H19 M12 16.5 H19 M12 19.5 H19" stroke="#2e2e2e" stroke-width="1.3"/></svg><svg class="r" style="left:1026px;top:75px;" width="32" height="31" viewBox="0 0 32 31"><rect x="0.5" y="0.5" width="31" height="30" rx="2" fill="#ffffff" stroke="#b8b8b8" stroke-width="1.5"/><rect x="1" y="1" width="30" height="6" rx="1" fill="#6ea3f5"/><path d="M25 2.2 L29 5.8 M29 2.2 L25 5.8" stroke="#e06666" stroke-width="1.1"/><path d="M4 20 H11 L14 26 L17 11 L20 23 L22 20 H28" fill="none" stroke="#666" stroke-width="1.5"/></svg><svg class="r" style="left:1026px;top:112px;" width="32" height="27" viewBox="0 0 32 27"><path d="M0 10 C5 0 8 2 11 8 C14 12 18 0 22 0 C27 0 30 6 32 10 V27 H0 Z" fill="#c9dccb"/><path d="M0 14 C5 4 8 6 11 12 C14 16 18 4 22 4 C27 4 30 10 32 14 V27 H0 Z" fill="#0b5c1e"/><path d="M0 27 V20 C4 14 8 14 11 20 C14 25 18 14 22 13 C27 13 30 16 32 19 V27 Z" fill="#2cc05a"/></svg><svg class="r" style="left:1215px;top:77px;" width="32" height="32" viewBox="0 0 32 32"><path d="M16 14 V2 M13 5 L16 1 L19 5" fill="none" stroke="#6ea3f5" stroke-width="2"/><path d="M16 14 L24 10 L24 19 L16 23 L8 19 L8 10 Z M8 10 L16 14 V23" fill="none" stroke="#999" stroke-width="1.6"/><path d="M8 19 L2 25 M2 21 V26 H7" fill="none" stroke="#d06060" stroke-width="2"/><path d="M24 19 L30 25 M25 26 H30 V21" fill="none" stroke="#2cbf5a" stroke-width="2"/></svg><svg class="r" style="left:1283px;top:77px;" width="32" height="32" viewBox="0 0 32 32"><rect x="0.5" y="0.5" width="31" height="20" fill="#fff" stroke="#aaa" stroke-width="1.5"/><path d="M4 7 V4 H8 M24 4 H28 V7 M28 14 V17 H24 M8 17 H4 V14" fill="none" stroke="#6ea3f5" stroke-width="1.5"/><path d="M14 21 H18 L19 27 H13 Z" fill="#aaa"/><rect x="9" y="27" width="14" height="4" fill="#aaa"/></svg><svg class="r" style="left:1345px;top:77px;" width="32" height="32" viewBox="0 0 32 32"><path d="M1 7 V1 H7 M25 1 H31 V7 M31 25 V31 H25 M7 31 H1 V25" fill="none" stroke="#d86a6a" stroke-width="1.8"/><rect x="5" y="9" width="22" height="15" rx="2" fill="#6ea3f5"/><rect x="7" y="7" width="7" height="4" rx="1.5" fill="#6ea3f5"/><circle cx="20" cy="16.5" r="4" fill="#6ea3f5" stroke="#fff" stroke-width="1.8"/><rect x="8" y="12" width="4" height="1.5" fill="#fff"/></svg><svg class="r" style="left:1407px;top:77px;" width="32" height="32" viewBox="0 0 32 32"><path d="M1 7 V1 H7 M25 1 H31 V7 M31 25 V31 H25 M7 31 H1 V25" fill="none" stroke="#e36d74" stroke-width="1.8"/><circle cx="16" cy="16" r="7" fill="#e8646e"/></svg><svg class="r" style="left:1464px;top:84px;" width="12" height="12" viewBox="0 0 12 12"><circle cx="6" cy="6" r="5.5" fill="#2a2a2a" stroke="#333" stroke-width="1"/></svg><svg class="r" style="left:1464px;top:117px;" width="12" height="12" viewBox="0 0 12 12"><circle cx="6" cy="6" r="5.5" fill="#2a2a2a" stroke="#333" stroke-width="1"/><circle cx="6" cy="6" r="2" fill="#555"/></svg><svg class="r" style="left:1464px;top:150px;" width="12" height="12" viewBox="0 0 12 12"><circle cx="6" cy="6" r="5.5" fill="#2a2a2a" stroke="#333" stroke-width="1"/></svg><svg class="r" style="left:1581px;top:77px;" width="33" height="32" viewBox="0 0 33 32"><g stroke="#6ea3f5" stroke-width="1.8" fill="none"><rect x="2" y="2" width="29" height="28"/><path d="M2 9 H31 M2 16 H31 M2 23 H31 M9 2 V30 M16 2 V30 M23 2 V30"/><path d="M0 2 H33 M0 30 H33 M2 0 V32 M31 0 V32" stroke-width="1.2"/></g></svg><svg class="r" style="left:1643px;top:77px;" width="33" height="32" viewBox="0 0 33 32"><rect x="2" y="2" width="29" height="28" fill="#6ea3f5"/><g fill="#b9d2fa"><rect x="4" y="4" width="5" height="5"/><rect x="11" y="4" width="5" height="5"/><rect x="18" y="4" width="5" height="5" fill="#e8f0ff"/><rect x="25" y="4" width="5" height="5" fill="#e8f0ff"/><rect x="4" y="11" width="5" height="5"/><rect x="11" y="11" width="5" height="5"/><rect x="18" y="11" width="5" height="5" fill="#e8f0ff"/><rect x="25" y="11" width="5" height="5"/><rect x="4" y="18" width="5" height="5" fill="#e8f0ff"/><rect x="11" y="18" width="5" height="5" fill="#e8f0ff"/><rect x="18" y="18" width="5" height="5"/><rect x="25" y="18" width="5" height="5"/><rect x="4" y="24" width="5" height="5" fill="#e8f0ff"/><rect x="11" y="24" width="5" height="5"/><rect x="18" y="24" width="5" height="5"/><rect x="25" y="24" width="5" height="5"/></g></svg><svg class="r" style="left:1723px;top:77px;" width="33" height="32" viewBox="0 0 33 32"><g stroke="#aaa" stroke-width="1.6" fill="#fff"><rect x="1" y="1" width="14" height="14"/><rect x="18" y="1" width="14" height="14"/><rect x="1" y="18" width="14" height="13"/></g><rect x="18" y="18" width="14" height="13" fill="#fff" stroke="#6ea3f5" stroke-width="1.6"/><g fill="#aaa"><rect x="1" y="1" width="14" height="2"/><rect x="18" y="1" width="14" height="2"/><rect x="1" y="18" width="14" height="2"/></g><rect x="18" y="18" width="14" height="2" fill="#6ea3f5"/><g fill="#e06060"><rect x="12" y="1" width="2" height="2"/><rect x="29" y="1" width="2" height="2"/><rect x="12" y="18" width="2" height="2"/><rect x="29" y="18" width="2" height="2"/></g></svg><svg class="r" style="left:1773px;top:163px;" width="9" height="6" viewBox="0 0 9 6"><path d="M0.5 0.5 H8.5 L4.5 5 Z" fill="#aaa"/></svg><svg class="r" style="left:1953px;top:76px;" width="34" height="34" viewBox="0 0 34 34"><circle cx="17" cy="17" r="15" fill="none" stroke="#d86a6a" stroke-width="2"/><rect x="9" y="15" width="16" height="4" fill="#d86a6a"/></svg><div class="t" style="left:31.00px;top:10.00px;font-size:17.6px;line-height:17.6px;color:#ffffff;transform:scaleX(0.9801);transform-origin:0.00px 0;">JustEpi_c&#x27;s Place Number: 38 - Roblox Studio</div><div class="t" style="left:22.60px;top:44.00px;font-size:16.7px;line-height:16.7px;color:#c8c8c8;transform:scaleX(0.8993);transform-origin:0.00px 0;">FILE</div><div class="t" style="left:222.00px;top:44.00px;font-size:16.7px;line-height:16.7px;color:#b4b4b4;transform:scaleX(0.9102);transform-origin:0.00px 0;">HOME</div><div class="t" style="left:296.50px;top:44.00px;font-size:16.7px;line-height:16.7px;color:#b4b4b4;transform:scaleX(0.8838);transform-origin:0.00px 0;">MODEL</div><div class="t" style="left:379.00px;top:44.00px;font-size:16.7px;line-height:16.7px;color:#b4b4b4;transform:scaleX(0.8899);transform-origin:0.00px 0;">TEST</div><div class="t" style="left:445.00px;top:44.00px;font-size:16.7px;line-height:16.7px;color:#e0e0e0;transform:scaleX(0.8665);transform-origin:0.00px 0;">VIEW</div><div class="t" style="left:511.00px;top:44.00px;font-size:16.7px;line-height:16.7px;color:#b4b4b4;transform:scaleX(0.9141);transform-origin:0.00px 0;">PLUGINS</div><div class="r" style="left:1878px;top:36px;width:110px;height:34px;background:#00a2ff;"></div><div class="t" style="left:1889.00px;top:45.00px;font-size:16.7px;line-height:16.7px;color:#ffffff;transform:scaleX(0.9893);transform-origin:0.00px 0;">What&#x27;s New</div><div class="t" style="left:2059.60px;top:45.00px;font-size:16.7px;line-height:16.7px;color:#c8c8c8;transform:scaleX(1.0000);transform-origin:0.00px 0;">JustEpi_c</div><div class="t" style="left:13.40px;top:129.00px;font-size:16.7px;line-height:16.7px;color:#d8d8d8;transform:scaleX(1.0064);transform-origin:0.00px 0;">Explorer</div><div class="t" style="left:95.60px;top:129.00px;font-size:16.7px;line-height:16.7px;color:#d8d8d8;transform:scaleX(1.0039);transform-origin:0.00px 0;">Properties</div><div class="t" style="left:227.70px;top:83.00px;font-size:16.7px;line-height:16.7px;color:#d8d8d8;transform:scaleX(0.9822);transform-origin:0.00px 0;">Game Explorer</div><div class="t" style="left:227.70px;top:116.00px;font-size:16.7px;line-height:16.7px;color:#d8d8d8;transform:scaleX(1.0565);transform-origin:0.00px 0;">Toolbox</div><div class="t" style="left:227.70px;top:149.00px;font-size:16.7px;line-height:16.7px;color:#d8d8d8;transform:scaleX(1.0300);transform-origin:0.00px 0;">Tutorials</div><div class="t" style="left:386.80px;top:83.00px;font-size:16.7px;line-height:16.7px;color:#d8d8d8;transform:scaleX(0.9996);transform-origin:0.00px 0;">Object Browser</div><div class="t" style="left:386.80px;top:116.00px;font-size:16.7px;line-height:16.7px;color:#d8d8d8;transform:scaleX(1.0608);transform-origin:0.00px 0;">Output</div><div class="t" style="left:386.80px;top:149.00px;font-size:16.7px;line-height:16.7px;color:#d8d8d8;transform:scaleX(0.9963);transform-origin:0.00px 0;">Script Analysis</div><div class="t" style="left:549.70px;top:83.00px;font-size:16.7px;line-height:16.7px;color:#d8d8d8;transform:scaleX(0.9940);transform-origin:0.00px 0;">Command Bar</div><div class="t" style="left:549.70px;top:116.00px;font-size:16.7px;line-height:16.7px;color:#d8d8d8;transform:scaleX(1.0125);transform-origin:0.00px 0;">Breakpoints</div><div class="t" style="left:549.70px;top:149.00px;font-size:16.7px;line-height:16.7px;color:#d8d8d8;transform:scaleX(0.9801);transform-origin:0.00px 0;">Call Stack</div><div class="t" style="left:705.30px;top:83.00px;font-size:16.7px;line-height:16.7px;color:#d8d8d8;transform:scaleX(0.9850);transform-origin:0.00px 0;">Watch</div><div class="t" style="left:705.30px;top:116.00px;font-size:16.7px;line-height:16.7px;color:#d8d8d8;transform:scaleX(1.0084);transform-origin:0.00px 0;">Performance</div><div class="t" style="left:705.30px;top:149.00px;font-size:16.7px;line-height:16.7px;color:#d8d8d8;transform:scaleX(1.0166);transform-origin:0.00px 0;">Task Scheduler</div><div class="t" style="left:869.70px;top:83.00px;font-size:16.7px;line-height:16.7px;color:#d8d8d8;transform:scaleX(1.0066);transform-origin:0.00px 0;">Script Performance</div><div class="t" style="left:869.70px;top:116.00px;font-size:16.7px;line-height:16.7px;color:#d8d8d8;transform:scaleX(0.9838);transform-origin:0.00px 0;">Find Results</div><div class="t" style="left:869.70px;top:149.00px;font-size:16.7px;line-height:16.7px;color:#d8d8d8;transform:scaleX(0.9822);transform-origin:0.00px 0;">Team Create</div><div class="t" style="left:1062.70px;top:83.00px;font-size:16.7px;line-height:16.7px;color:#d8d8d8;transform:scaleX(0.9784);transform-origin:0.00px 0;">Script Recovery</div><div class="t" style="left:1062.70px;top:116.00px;font-size:16.7px;line-height:16.7px;color:#d8d8d8;transform:scaleX(1.0201);transform-origin:0.00px 0;">Terrain Editor</div><div class="t" style="left:575.70px;top:178.00px;font-size:16.7px;line-height:16.7px;color:#a8a8a8;transform:scaleX(0.9964);transform-origin:0.00px 0;">Show</div><div class="t" style="left:1213.80px;top:129.00px;font-size:16.7px;line-height:16.7px;color:#d8d8d8;transform:scaleX(0.9778);transform-origin:0.00px 0;">View</div><div class="t" style="left:1200.60px;top:151.00px;font-size:16.7px;line-height:16.7px;color:#d8d8d8;transform:scaleX(1.0188);transform-origin:0.00px 0;">Selector</div><div class="t" style="left:1284.40px;top:129.00px;font-size:16.7px;line-height:16.7px;color:#d8d8d8;transform:scaleX(1.0260);transform-origin:0.00px 0;">Full</div><div class="t" style="left:1273.40px;top:151.00px;font-size:16.7px;line-height:16.7px;color:#d8d8d8;transform:scaleX(0.9565);transform-origin:0.00px 0;">Screen</div><div class="t" style="left:1335.70px;top:129.00px;font-size:16.7px;line-height:16.7px;color:#d8d8d8;transform:scaleX(0.9584);transform-origin:0.00px 0;">Screen</div><div class="t" style="left:1343.60px;top:151.00px;font-size:16.7px;line-height:16.7px;color:#d8d8d8;transform:scaleX(1.0306);transform-origin:0.00px 0;">Shot</div><div class="t" style="left:1401.90px;top:129.00px;font-size:16.7px;line-height:16.7px;color:#d8d8d8;transform:scaleX(0.9835);transform-origin:0.00px 0;">Video</div><div class="t" style="left:1397.40px;top:151.00px;font-size:16.7px;line-height:16.7px;color:#d8d8d8;transform:scaleX(0.9656);transform-origin:0.00px 0;">Record</div><div class="t" style="left:1296.00px;top:178.00px;font-size:16.7px;line-height:16.7px;color:#a8a8a8;transform:scaleX(1.0046);transform-origin:0.00px 0;">Actions</div><div class="t" style="left:1485.30px;top:83.00px;font-size:16.7px;line-height:16.7px;color:#5a5a5a;transform:scaleX(0.9832);transform-origin:0.00px 0;">2 Studs</div><div class="t" style="left:1485.30px;top:116.00px;font-size:16.7px;line-height:16.7px;color:#5a5a5a;transform:scaleX(0.9832);transform-origin:0.00px 0;">4 Studs</div><div class="t" style="left:1485.30px;top:149.00px;font-size:16.7px;line-height:16.7px;color:#5a5a5a;transform:scaleX(0.9818);transform-origin:0.00px 0;">16 Studs</div><div class="t" style="left:1577.70px;top:129.00px;font-size:16.7px;line-height:16.7px;color:#d8d8d8;transform:scaleX(0.9964);transform-origin:0.00px 0;">Show</div><div class="t" style="left:1583.00px;top:151.00px;font-size:16.7px;line-height:16.7px;color:#d8d8d8;transform:scaleX(0.9509);transform-origin:0.00px 0;">Grid</div><div class="t" style="left:1645.50px;top:129.00px;font-size:16.7px;line-height:16.7px;color:#d8d8d8;transform:scaleX(0.9509);transform-origin:0.00px 0;">Grid</div><div class="t" style="left:1630.50px;top:151.00px;font-size:16.7px;line-height:16.7px;color:#d8d8d8;transform:scaleX(1.0017);transform-origin:0.00px 0;">Material</div><div class="t" style="left:1592.60px;top:178.00px;font-size:16.7px;line-height:16.7px;color:#a8a8a8;transform:scaleX(1.0075);transform-origin:0.00px 0;">Settings</div><div class="t" style="left:1714.70px;top:129.00px;font-size:16.7px;line-height:16.7px;color:#d8d8d8;transform:scaleX(1.0122);transform-origin:0.00px 0;">Switch</div><div class="t" style="left:1703.00px;top:152.00px;font-size:16.7px;line-height:16.7px;color:#d8d8d8;transform:scaleX(1.0037);transform-origin:0.00px 0;">Windows</div><div class="t" style="left:1799.70px;top:83.00px;font-size:16.7px;line-height:16.7px;color:#d8d8d8;transform:scaleX(0.9934);transform-origin:0.00px 0;">Stats</div><div class="t" style="left:1799.70px;top:116.00px;font-size:16.7px;line-height:16.7px;color:#d8d8d8;transform:scaleX(0.9735);transform-origin:0.00px 0;">Render</div><div class="t" style="left:1799.70px;top:149.00px;font-size:16.7px;line-height:16.7px;color:#d8d8d8;transform:scaleX(0.9435);transform-origin:0.00px 0;">Physics</div><div class="t" style="left:1867.50px;top:83.00px;font-size:16.7px;line-height:16.7px;color:#d8d8d8;transform:scaleX(1.0473);transform-origin:0.00px 0;">Network</div><div class="t" style="left:1867.50px;top:116.00px;font-size:16.7px;line-height:16.7px;color:#d8d8d8;transform:scaleX(1.0147);transform-origin:0.00px 0;">Summary</div><div class="t" style="left:1951.00px;top:129.00px;font-size:16.7px;line-height:16.7px;color:#d8d8d8;transform:scaleX(0.9774);transform-origin:0.00px 0;">Clear</div><div class="t" style="left:1874.70px;top:179.00px;font-size:16.7px;line-height:16.7px;color:#a8a8a8;transform:scaleX(0.9803);transform-origin:0.00px 0;">Stats</div><div class="t" style="left:42.50px;top:215.00px;font-size:16.7px;line-height:16.7px;color:#e4e4e4;transform:scaleX(0.9948);transform-origin:0.00px 0;">JustEpi_c&#x27;s Place Number: 38</div><div class="t" style="left:1854.00px;top:215.00px;font-size:16.7px;line-height:16.7px;color:#b0b0b0;transform:scaleX(1.0177);transform-origin:0.00px 0;">Explorer</div><div class="t" style="left:1652.50px;top:248.00px;font-size:16.7px;line-height:16.7px;color:#8a8a8a;transform:scaleX(0.9985);transform-origin:0.00px 0;">Filter workspace (Ctrl+Shift+X)</div><div class="t" style="left:1706.00px;top:281.00px;font-size:16.7px;line-height:16.7px;color:#d8d8d8;transform:scaleX(0.9952);transform-origin:0.00px 0;">Workspace</div><div class="t" style="left:1736.30px;top:308.00px;font-size:16.7px;line-height:16.7px;color:#d8d8d8;transform:scaleX(0.9613);transform-origin:0.00px 0;">Camera</div><div class="t" style="left:1736.30px;top:335.00px;font-size:16.7px;line-height:16.7px;color:#d8d8d8;transform:scaleX(1.0225);transform-origin:0.00px 0;">Terrain</div><div class="t" style="left:1736.30px;top:362.00px;font-size:16.7px;line-height:16.7px;color:#d8d8d8;transform:scaleX(0.9984);transform-origin:0.00px 0;">Part</div><div class="r" style="left:1740px;top:383px;width:197px;height:27px;background:#0b5aaf;"></div><div class="t" style="left:1766.40px;top:389.00px;font-size:16.7px;line-height:16.7px;color:#ffffff;transform:scaleX(0.9898);transform-origin:0.00px 0;">SurfaceAppearance</div><div class="t" style="left:1706.00px;top:416.00px;font-size:16.7px;line-height:16.7px;color:#d8d8d8;transform:scaleX(0.9767);transform-origin:0.00px 0;">Players</div><div class="t" style="left:1706.00px;top:443.00px;font-size:16.7px;line-height:16.7px;color:#d8d8d8;transform:scaleX(0.9744);transform-origin:0.00px 0;">Lighting</div><div class="t" style="left:1706.00px;top:470.00px;font-size:16.7px;line-height:16.7px;color:#d8d8d8;transform:scaleX(1.0112);transform-origin:0.00px 0;">ReplicatedFirst</div><div class="t" style="left:1706.00px;top:497.00px;font-size:16.7px;line-height:16.7px;color:#d8d8d8;transform:scaleX(1.0087);transform-origin:0.00px 0;">ReplicatedStorage</div><div class="t" style="left:1706.00px;top:524.00px;font-size:16.7px;line-height:16.7px;color:#d8d8d8;transform:scaleX(0.9854);transform-origin:0.00px 0;">ServerScriptService</div><div class="t" style="left:1706.00px;top:551.00px;font-size:16.7px;line-height:16.7px;color:#d8d8d8;transform:scaleX(0.9898);transform-origin:0.00px 0;">ServerStorage</div><div class="t" style="left:1706.00px;top:578.00px;font-size:16.7px;line-height:16.7px;color:#d8d8d8;transform:scaleX(1.0092);transform-origin:0.00px 0;">StarterGui</div><div class="t" style="left:1706.00px;top:605.00px;font-size:16.7px;line-height:16.7px;color:#d8d8d8;transform:scaleX(1.0034);transform-origin:0.00px 0;">StarterPack</div><div class="t" style="left:1706.00px;top:632.00px;font-size:16.7px;line-height:16.7px;color:#d8d8d8;transform:scaleX(1.0159);transform-origin:0.00px 0;">StarterPlayer</div><div class="t" style="left:1706.00px;top:659.00px;font-size:16.7px;line-height:16.7px;color:#d8d8d8;transform:scaleX(0.9959);transform-origin:0.00px 0;">Teams</div><div class="t" style="left:1683.30px;top:687.00px;font-size:16.7px;line-height:16.7px;color:#b0b0b0;transform:scaleX(1.0045);transform-origin:0.00px 0;">Properties - SurfaceAppearance &quot;SurfaceAppearance&quot;</div><div class="t" style="left:1654.40px;top:719.00px;font-size:16.7px;line-height:16.7px;color:#8a8a8a;transform:scaleX(1.0011);transform-origin:0.00px 0;">Filter Properties (Ctrl+Shift+P)</div><div class="t" style="left:777.30px;top:1046.00px;font-size:16.7px;line-height:16.7px;color:#b0b0b0;transform:scaleX(1.0708);transform-origin:0.00px 0;">Output</div><svg class="r" style="left:17px;top:217px;" width="18" height="12" viewBox="0 0 18 12"><path d="M2 11 C0 11 0 7 3 7 C3 4 6 3 8 5 C9 1 14 1 15 5 C17 5 18 7 17 9 C17 11 16 11 15 11 Z" fill="#d8d8d8"/></svg><svg class="r" style="left:278px;top:218px;" width="10" height="10" viewBox="0 0 10 10"><path d="M1 1 L9 9 M9 1 L1 9" stroke="#999" stroke-width="1.3"/></svg><div class="r" style="left:1599px;top:206px;width:1px;height:31px;background:#222222;"></div><svg class="r" style="left:1609px;top:209px;" width="26" height="26" viewBox="0 0 26 26"><rect x="7.5" y="1.5" width="17" height="22" rx="2" fill="none" stroke="#aaa" stroke-width="2"/><rect x="9.5" y="3.5" width="13" height="16" fill="#2b2b2b"/><rect x="1" y="7" width="11" height="17" rx="1.5" fill="#2b2b2b" stroke="#aaa" stroke-width="2"/><rect x="3" y="9" width="7" height="11" fill="#2b2b2b"/><circle cx="6.5" cy="22" r="0.9" fill="#222"/><circle cx="15.5" cy="21.5" r="0.9" fill="#222"/></svg><svg class="r" style="left:2127px;top:218px;" width="10" height="10" viewBox="0 0 10 10"><rect x="3" y="1" width="6" height="5" fill="none" stroke="#ccc" stroke-width="1.2"/><rect x="1" y="4" width="6" height="5" fill="#353535" stroke="#ccc" stroke-width="1.2"/></svg><svg class="r" style="left:2145px;top:218px;" width="10" height="10" viewBox="0 0 10 10"><path d="M1 1.5 L9 8.5 M9 1.5 L1 8.5" stroke="#ccc" stroke-width="1.3"/></svg><svg class="r" style="left:2127px;top:688px;" width="10" height="10" viewBox="0 0 10 10"><rect x="3" y="1" width="6" height="5" fill="none" stroke="#ccc" stroke-width="1.2"/><rect x="1" y="4" width="6" height="5" fill="#353535" stroke="#ccc" stroke-width="1.2"/></svg><svg class="r" style="left:2145px;top:688px;" width="10" height="10" viewBox="0 0 10 10"><path d="M1 1.5 L9 8.5 M9 1.5 L1 8.5" stroke="#ccc" stroke-width="1.3"/></svg><svg class="r" style="left:1612px;top:1048px;" width="10" height="10" viewBox="0 0 10 10"><rect x="3" y="1" width="6" height="5" fill="none" stroke="#ccc" stroke-width="1.2"/><rect x="1" y="4" width="6" height="5" fill="#353535" stroke="#ccc" stroke-width="1.2"/></svg><svg class="r" style="left:1630px;top:1048px;" width="10" height="10" viewBox="0 0 10 10"><path d="M1 1.5 L9 8.5 M9 1.5 L1 8.5" stroke="#ccc" stroke-width="1.3"/></svg><svg class="r" style="left:1658px;top:285px;" width="12" height="8" viewBox="0 0 12 8"><path d="M1.5 1.5 L6 6 L10.5 1.5" fill="none" stroke="#999" stroke-width="1.4"/></svg><svg class="r" style="left:1688px;top:366px;" width="12" height="8" viewBox="0 0 12 8"><path d="M1.5 1.5 L6 6 L10.5 1.5" fill="none" stroke="#999" stroke-width="1.4"/></svg><svg class="r" style="left:1661px;top:471px;" width="8" height="12" viewBox="0 0 8 12"><path d="M1.5 1.5 L6 6 L1.5 10.5" fill="none" stroke="#999" stroke-width="1.4"/></svg><svg class="r" style="left:1661px;top:633px;" width="8" height="12" viewBox="0 0 8 12"><path d="M1.5 1.5 L6 6 L1.5 10.5" fill="none" stroke="#999" stroke-width="1.4"/></svg><svg class="r" style="left:1683px;top:280px;" width="17" height="17" viewBox="0 0 17 17"><circle cx="8.5" cy="8.5" r="7.5" fill="#3aa0e0" stroke="#2fb850" stroke-width="1.5"/><path d="M4 4 C7 5 6 8 9 9 C11 10 9 13 11 15 M12 2.5 C11 5 13 6 15 6" fill="none" stroke="#46c060" stroke-width="2.2"/></svg><svg class="r" style="left:1713px;top:307px;" width="17" height="17" viewBox="0 0 17 17"><rect x="1" y="4" width="15" height="10" rx="1" fill="#9aa8bc"/><rect x="3" y="2.5" width="5" height="3" fill="#9aa8bc"/><circle cx="7" cy="9" r="3.6" fill="#4a90e0"/><rect x="12" y="5" width="3" height="8" fill="#d0d8e4"/></svg><svg class="r" style="left:1713px;top:334px;" width="17" height="17" viewBox="0 0 17 17"><path d="M0 7 C3 1 5 2 7 6 C9 9 11 1 14 1 C16 1 17 4 17 6 V16 H0 Z" fill="#c9dccb"/><path d="M0 9 C3 3 5 4 7 8 C9 11 11 3 14 3 C16 3 17 6 17 8 V16 H0 Z" fill="#0b5c1e"/><path d="M0 16 V12 C3 8 5 8 7 12 C9 15 11 8 14 8 C16 8 17 10 17 11 V16 Z" fill="#2cc05a"/></svg><svg class="r" style="left:1713px;top:361px;" width="17" height="17" viewBox="0 0 17 17"><path d="M1 5 L8.5 1.5 L16 5 V12 L8.5 16 L1 12 Z" fill="#e8e8e8"/><path d="M8.5 8.5 L16 5 V12 L8.5 16 Z" fill="#b8b8b8"/><path d="M1 5 L8.5 8.5 V16 L1 12 Z" fill="#d4d4d4"/><ellipse cx="8.5" cy="4" rx="3" ry="1.5" fill="#c0c0c0"/></svg><svg class="r" style="left:1743px;top:388px;" width="17" height="17" viewBox="0 0 17 17"><rect x="0" y="0" width="17" height="17" fill="#c8d820"/><path d="M0 4 C3 0 5 0 8.5 4 C12 0 14 0 17 4 V9 C14 5 12 5 8.5 9 C5 5 3 5 0 9 Z M0 10 C3 6 5 6 8.5 10 C12 6 14 6 17 10 V15 C14 11 12 11 8.5 15 C5 11 3 11 0 15 Z" fill="#20a8e8"/></svg><svg class="r" style="left:1683px;top:415px;" width="17" height="17" viewBox="0 0 17 17"><circle cx="12" cy="3.5" r="2.8" fill="#f0b070"/><path d="M8 13 C8 8 16 8 16 13 Z" fill="#40b850"/><circle cx="6" cy="8" r="2.8" fill="#f0b070"/><path d="M1 16 C1 11 11 11 11 16 Z" fill="#3a90e0"/></svg><svg class="r" style="left:1683px;top:442px;" width="17" height="17" viewBox="0 0 17 17"><circle cx="8.5" cy="7" r="6.5" fill="#f8d860" stroke="#e8b030" stroke-width="1"/><rect x="6" y="12" width="5" height="4" fill="#aaa"/></svg><svg class="r" style="left:1683px;top:469px;" width="17" height="17" viewBox="0 0 17 17"><path d="M3 6 V2 H14 V6" fill="none" stroke="#d03030" stroke-width="1.5"/><path d="M1 5 L3 8 L5 5 M12 5 L14 8 L16 5" fill="#d03030"/><rect x="0.5" y="8" width="7" height="8.5" fill="#4a80d8"/><rect x="9.5" y="8" width="7" height="8.5" fill="#4a80d8"/><g fill="#fff"><rect x="2" y="10" width="1.5" height="1.5"/><rect x="4.5" y="10" width="1.5" height="1.5"/><rect x="2" y="13" width="1.5" height="1.5"/><rect x="4.5" y="13" width="1.5" height="1.5"/><rect x="11" y="10" width="1.5" height="1.5"/><rect x="13.5" y="10" width="1.5" height="1.5"/><rect x="11" y="13" width="1.5" height="1.5"/><rect x="13.5" y="13" width="1.5" height="1.5"/></g></svg><svg class="r" style="left:1683px;top:496px;" width="17" height="17" viewBox="0 0 17 17"><path d="M3 6 V2 H14 V6" fill="none" stroke="#d03030" stroke-width="1.5"/><path d="M1 5 L3 8 L5 5 M12 5 L14 8 L16 5" fill="#d03030"/><rect x="0.5" y="8" width="7" height="8.5" fill="#4a80d8"/><rect x="9.5" y="8" width="7" height="8.5" fill="#4a80d8"/><g fill="#fff"><rect x="2" y="10" width="1.5" height="1.5"/><rect x="4.5" y="10" width="1.5" height="1.5"/><rect x="2" y="13" width="1.5" height="1.5"/><rect x="4.5" y="13" width="1.5" height="1.5"/><rect x="11" y="10" width="1.5" height="1.5"/><rect x="13.5" y="10" width="1.5" height="1.5"/><rect x="11" y="13" width="1.5" height="1.5"/><rect x="13.5" y="13" width="1.5" height="1.5"/></g></svg><svg class="r" style="left:1683px;top:523px;" width="17" height="17" viewBox="0 0 17 17"><path d="M3 7 C1 7 1 3 4 3 C5 0 11 0 12 3 C15 3 16 6 14 8 Z" fill="#6ad0f0"/><path d="M4 7 L11 4 L14 12 L7 15 Z" fill="#5088b8"/><path d="M5 8 L11 6 M6 10 L12 8 M7 12 L12 10" stroke="#cde" stroke-width="0.8"/></svg><svg class="r" style="left:1683px;top:550px;" width="17" height="17" viewBox="0 0 17 17"><path d="M3 7 C1 7 1 3 4 3 C5 0 11 0 12 3 C15 3 16 6 14 8 Z" fill="#6ad0f0"/><rect x="4" y="7" width="10" height="9" rx="1" fill="#4aa8d8"/><rect x="6" y="12" width="6" height="4" fill="#dff"/><rect x="6" y="8" width="6" height="3" fill="#2a6a90"/></svg><svg class="r" style="left:1683px;top:577px;" width="17" height="17" viewBox="0 0 17 17"><path d="M0.5 7 H6 L7 5.5 H16.5 V16.5 H0.5 Z" fill="#f0c040"/><path d="M0.5 9 H16.5 V16.5 H0.5 Z" fill="#f8d868"/><rect x="6" y="1" width="11" height="8" fill="#e8f0ff" stroke="#4a80d8" stroke-width="1"/><rect x="6" y="1" width="11" height="2" fill="#4a80d8"/></svg><svg class="r" style="left:1683px;top:604px;" width="17" height="17" viewBox="0 0 17 17"><path d="M0.5 7 H6 L7 5.5 H16.5 V16.5 H0.5 Z" fill="#f0c040"/><path d="M0.5 9 H16.5 V16.5 H0.5 Z" fill="#f8d868"/><path d="M7 10 L14 3" stroke="#999" stroke-width="2"/><circle cx="14" cy="3" r="2.5" fill="none" stroke="#999" stroke-width="1.5"/></svg><svg class="r" style="left:1683px;top:631px;" width="17" height="17" viewBox="0 0 17 17"><path d="M0.5 7 H6 L7 5.5 H16.5 V16.5 H0.5 Z" fill="#f0c040"/><path d="M0.5 9 H16.5 V16.5 H0.5 Z" fill="#f8d868"/><circle cx="11" cy="3" r="2.5" fill="#e89050"/><path d="M7 10 C7 5 15 5 15 10 Z" fill="#3a90e0"/></svg><svg class="r" style="left:1683px;top:658px;" width="17" height="14" viewBox="0 0 17 14"><path d="M0.5 7 H6 L7 5.5 H16.5 V16.5 H0.5 Z" fill="#f0c040"/><path d="M0.5 9 H16.5 V16.5 H0.5 Z" fill="#f8d868"/><circle cx="12" cy="5" r="4" fill="#ddd"/><circle cx="12" cy="5" r="1.5" fill="#888"/></svg><div class="r" style="left:2134px;top:274px;width:26px;height:398px;background:#2a2a2a;"></div><div class="r" style="left:2134px;top:274px;width:26px;height:27px;background:#333333;"></div><svg class="r" style="left:2140px;top:284px;" width="12" height="8" viewBox="0 0 12 8"><path d="M1 7 L6 1 L11 7 Z" fill="#bbbbbb"/></svg><div class="r" style="left:2134px;top:301px;width:26px;height:254px;background:#363636;"></div><div class="r" style="left:2134px;top:647px;width:26px;height:25px;background:#333333;"></div><div class="r" style="left:2133px;top:274px;width:1px;height:398px;background:#1e1e1e;"></div><div class="r" style="left:2134px;top:301px;width:26px;height:1px;background:#262626;"></div><div class="r" style="left:2134px;top:646px;width:26px;height:1px;background:#262626;"></div><div class="r" style="left:1650px;top:274px;width:510px;height:1px;background:#262626;"></div><svg class="r" style="left:2140px;top:656px;" width="12" height="8" viewBox="0 0 12 8"><path d="M1 1 L6 7 L11 1 Z" fill="#bbbbbb"/></svg><svg class="r" style="left:2147px;top:725px;" width="8" height="5" viewBox="0 0 8 5"><path d="M0.5 0.5 H7.5 L4 4.5 Z" fill="#aaa"/></svg><div class="r" style="left:1650px;top:745px;width:510px;height:1px;background:#262626;"></div><div class="r" style="left:1650px;top:746px;width:510px;height:32px;background:#353535;"></div><svg class="r" style="left:1654px;top:758px;" width="12" height="8" viewBox="0 0 12 8"><path d="M1.5 1.5 L6 6 L10.5 1.5" fill="none" stroke="#999" stroke-width="1.4"/></svg><div class="t" style="left:1674.40px;top:755.00px;font-size:16.7px;line-height:16.7px;color:#e0e0e0;font-weight:bold;-webkit-text-stroke:0.05px currentColor;">Data</div><div class="r" style="left:1650px;top:778px;width:510px;height:1px;background:#262626;"></div><div class="r" style="left:1650px;top:779px;width:510px;height:32px;background:#2e2e2e;"></div><div class="r" style="left:1815px;top:779px;width:1px;height:32px;background:#262626;"></div><div class="t" style="left:1684.50px;top:788.00px;font-size:16.7px;line-height:16.7px;color:#6a6a6a;">ClassName</div><div class="t" style="left:1820.50px;top:788.00px;font-size:16.7px;line-height:16.7px;color:#6a6a6a;">SurfaceAppearance</div><div class="r" style="left:1650px;top:811px;width:510px;height:1px;background:#262626;"></div><div class="r" style="left:1650px;top:812px;width:510px;height:32px;background:#2e2e2e;"></div><div class="r" style="left:1815px;top:812px;width:1px;height:32px;background:#262626;"></div><div class="t" style="left:1684.50px;top:821.00px;font-size:16.7px;line-height:16.7px;color:#d8d8d8;">Name</div><div class="t" style="left:1820.50px;top:821.00px;font-size:16.7px;line-height:16.7px;color:#d8d8d8;">SurfaceAppearance</div><div class="r" style="left:1650px;top:844px;width:510px;height:1px;background:#262626;"></div><div class="r" style="left:1650px;top:845px;width:510px;height:32px;background:#2e2e2e;"></div><div class="r" style="left:1815px;top:845px;width:1px;height:32px;background:#262626;"></div><div class="t" style="left:1684.50px;top:854.00px;font-size:16.7px;line-height:16.7px;color:#d8d8d8;">Parent</div><div class="t" style="left:1820.50px;top:854.00px;font-size:16.7px;line-height:16.7px;color:#d8d8d8;">Part</div><div class="r" style="left:1650px;top:877px;width:510px;height:1px;background:#262626;"></div><div class="r" style="left:1650px;top:878px;width:510px;height:32px;background:#353535;"></div><svg class="r" style="left:1654px;top:890px;" width="12" height="8" viewBox="0 0 12 8"><path d="M1.5 1.5 L6 6 L10.5 1.5" fill="none" stroke="#999" stroke-width="1.4"/></svg><div class="t" style="left:1674.40px;top:887.00px;font-size:16.7px;line-height:16.7px;color:#e0e0e0;font-weight:bold;-webkit-text-stroke:0.05px currentColor;">Behavior</div><div class="r" style="left:1650px;top:910px;width:510px;height:1px;background:#262626;"></div><div class="r" style="left:1650px;top:911px;width:510px;height:32px;background:#2e2e2e;"></div><div class="r" style="left:1815px;top:911px;width:1px;height:32px;background:#262626;"></div><div class="t" style="left:1684.50px;top:920.00px;font-size:16.7px;line-height:16.7px;color:#d8d8d8;">Archivable</div><svg class="r" style="left:1819px;top:920px;" width="16" height="16" viewBox="0 0 16 16"><rect x="0.5" y="0.5" width="15" height="15" fill="#222" stroke="#3a3a3a"/><path d="M3.5 8 L6.5 11 L12 4.5" fill="none" stroke="#2fa4ff" stroke-width="2"/></svg><div class="r" style="left:1650px;top:943px;width:510px;height:1px;background:#262626;"></div><div class="r" style="left:1650px;top:944px;width:510px;height:32px;background:#353535;"></div><svg class="r" style="left:1654px;top:956px;" width="12" height="8" viewBox="0 0 12 8"><path d="M1.5 1.5 L6 6 L10.5 1.5" fill="none" stroke="#999" stroke-width="1.4"/></svg><div class="t" style="left:1674.40px;top:953.00px;font-size:16.7px;line-height:16.7px;color:#e0e0e0;font-weight:bold;-webkit-text-stroke:0.05px currentColor;">Textures</div><div class="r" style="left:1650px;top:976px;width:510px;height:1px;background:#262626;"></div><div class="r" style="left:1650px;top:977px;width:510px;height:32px;background:#2e2e2e;"></div><div class="r" style="left:1815px;top:977px;width:1px;height:32px;background:#262626;"></div><div class="t" style="left:1684.50px;top:986.00px;font-size:16.7px;line-height:16.7px;color:#d8d8d8;">ColorMap</div><div class="t" style="left:1820.50px;top:986.00px;font-size:16.7px;line-height:16.7px;color:#d8d8d8;">rbxassetid://4514364695</div><div class="r" style="left:1650px;top:1009px;width:510px;height:1px;background:#262626;"></div><div class="r" style="left:1650px;top:1010px;width:510px;height:32px;background:#2e2e2e;"></div><div class="r" style="left:1815px;top:1010px;width:1px;height:32px;background:#262626;"></div><div class="t" style="left:1684.50px;top:1019.00px;font-size:16.7px;line-height:16.7px;color:#d8d8d8;">MetalnessMap</div><div class="t" style="left:1820.50px;top:1019.00px;font-size:16.7px;line-height:16.7px;color:#d8d8d8;">rbxassetid://4514376299</div><div class="r" style="left:1650px;top:1042px;width:510px;height:1px;background:#262626;"></div><div class="r" style="left:1650px;top:1043px;width:510px;height:32px;background:#2e2e2e;"></div><div class="r" style="left:1815px;top:1043px;width:1px;height:32px;background:#262626;"></div><div class="t" style="left:1684.50px;top:1052.00px;font-size:16.7px;line-height:16.7px;color:#d8d8d8;">NormalMap</div><div class="t" style="left:1820.50px;top:1052.00px;font-size:16.7px;line-height:16.7px;color:#d8d8d8;">rbxassetid://4514369296</div><div class="r" style="left:1650px;top:1075px;width:510px;height:1px;background:#262626;"></div><div class="r" style="left:1650px;top:1076px;width:510px;height:32px;background:#2e2e2e;"></div><div class="r" style="left:1815px;top:1076px;width:1px;height:32px;background:#262626;"></div><div class="t" style="left:1684.50px;top:1085.00px;font-size:16.7px;line-height:16.7px;color:#d8d8d8;">RoughnessMap</div><div class="t" style="left:1820.50px;top:1085.00px;font-size:16.7px;line-height:16.7px;color:#d8d8d8;">rbxassetid://4514370333</div><div class="r" style="left:1650px;top:1108px;width:510px;height:1px;background:#262626;"></div><div class="r" style="left:1650px;top:1109px;width:510px;height:32px;background:#2e2e2e;"></div><div class="r" style="left:1815px;top:1109px;width:1px;height:32px;background:#262626;"></div><div class="t" style="left:1684.50px;top:1118.00px;font-size:16.7px;line-height:16.7px;color:#d8d8d8;">TexturePack</div><div class="t" style="left:1820.50px;top:1118.00px;font-size:16.7px;line-height:16.7px;color:#d8d8d8;">[Embedded]</div><div class="r" style="left:1650px;top:1141px;width:510px;height:1px;background:#262626;"></div><div class="r" style="left:1650px;top:1142px;width:510px;height:32px;background:#353535;"></div><svg class="r" style="left:1654px;top:1154px;" width="12" height="8" viewBox="0 0 12 8"><path d="M1.5 1.5 L6 6 L10.5 1.5" fill="none" stroke="#999" stroke-width="1.4"/></svg><div class="t" style="left:1674.40px;top:1151.00px;font-size:16.7px;line-height:16.7px;color:#e0e0e0;font-weight:bold;-webkit-text-stroke:0.05px currentColor;">Lighting</div><div class="r" style="left:1650px;top:1174px;width:510px;height:1px;background:#262626;"></div><div class="r" style="left:1650px;top:1175px;width:510px;height:32px;background:#2e2e2e;"></div><div class="r" style="left:1815px;top:1175px;width:1px;height:32px;background:#262626;"></div><div class="t" style="left:1684.50px;top:1184.00px;font-size:16.7px;line-height:16.7px;color:#d8d8d8;">MetalnessScale</div><div class="t" style="left:1820.50px;top:1184.00px;font-size:16.7px;line-height:16.7px;color:#d8d8d8;">1</div><div class="r" style="left:1650px;top:1207px;width:510px;height:1px;background:#262626;"></div><div class="r" style="left:1650px;top:1208px;width:510px;height:32px;background:#2e2e2e;"></div><div class="r" style="left:1815px;top:1208px;width:1px;height:32px;background:#262626;"></div><div class="t" style="left:1684.50px;top:1217.00px;font-size:16.7px;line-height:16.7px;color:#d8d8d8;">RoughnessScale</div><div class="t" style="left:1820.50px;top:1217.00px;font-size:16.7px;line-height:16.7px;color:#d8d8d8;">0.8</div><div class="r" style="left:1650px;top:1240px;width:510px;height:1px;background:#262626;"></div><div class="t" style="left:5.80px;top:1080.00px;font-size:15.8px;line-height:15.8px;color:#cd4ffa;font-weight:bold;-webkit-text-stroke:0.05px currentColor;transform:scaleX(1.1518);transform-origin:0.00px 0;">21:27:14.773 - JustEpi_c&#x27;s Place Number: 38 auto-recovery file was created</div><div class="t" style="left:5.80px;top:1100.00px;font-size:15.8px;line-height:15.8px;color:#d8d8d8;transform:scaleX(1.0516);transform-origin:0.00px 0;">&gt; game. Lighting.EnvironmentDiffuseScale = 1 game.Lighting.EnvironmentSpecularScale = 1</div><svg class="r" style="left:3px;top:1380px;" width="4" height="24" viewBox="0 0 4 24"><g fill="#888"><rect x="1" y="1" width="1.5" height="1.5"/><rect x="1" y="5" width="1.5" height="1.5"/><rect x="1" y="9" width="1.5" height="1.5"/><rect x="1" y="13" width="1.5" height="1.5"/><rect x="1" y="17" width="1.5" height="1.5"/><rect x="1" y="21" width="1.5" height="1.5"/></g></svg><div class="r" style="left:18px;top:1379px;width:678px;height:24px;background:#0b5aaf;"></div><div class="r" style="left:695px;top:1379px;width:1px;height:24px;background:#ffffff;"></div><div class="t" style="left:19.70px;top:1384.00px;font-size:16.7px;line-height:16.7px;color:#ffffff;transform:scaleX(1.0020);transform-origin:0.00px 0;">game. Lighting.EnvironmentDiffuseScale = 1 game.Lighting.EnvironmentSpecularScale = 1</div><div class="r" style="left:2142px;top:1378px;width:15px;height:26px;background:#3c3c3c;"></div><svg class="r" style="left:2145px;top:1390px;" width="8" height="5" viewBox="0 0 8 5"><path d="M0.5 0.5 H7.5 L4 4.5 Z" fill="#aaa"/></svg>
</body></html>
